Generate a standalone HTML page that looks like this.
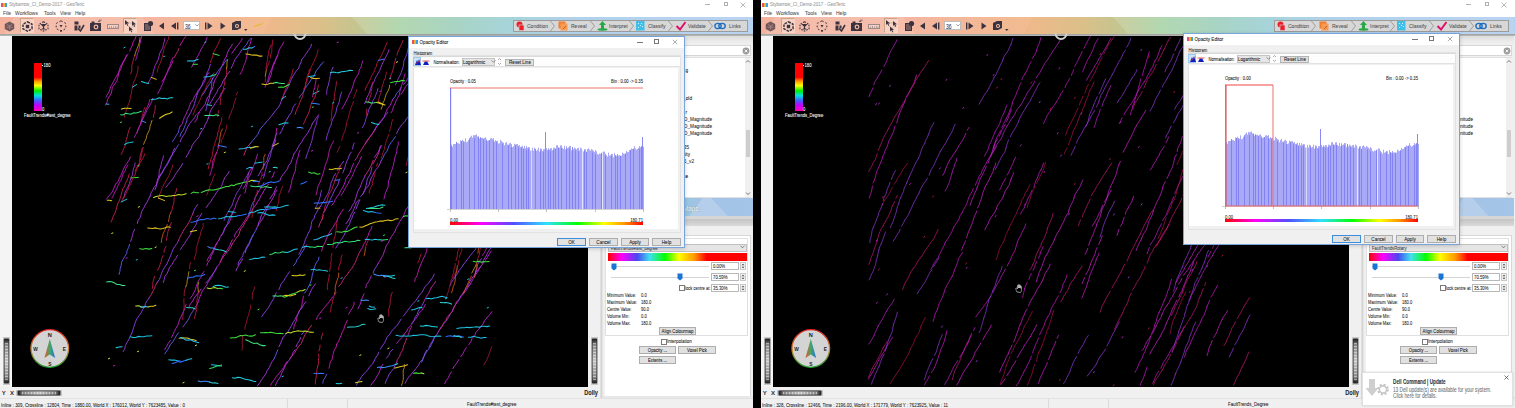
<!DOCTYPE html>
<html><head><meta charset="utf-8"><style>
html,body{margin:0;padding:0;}
body{width:1515px;height:408px;position:relative;overflow:hidden;background:#000;font-family:"Liberation Sans", sans-serif;}
.w{position:absolute;top:0;height:408px;overflow:hidden;background:#f0f0f0;}
.a{position:absolute;}
.t{position:absolute;white-space:nowrap;font-family:"Liberation Sans", sans-serif;-webkit-text-stroke:0.05px currentColor;}
svg{overflow:visible}
</style></head><body>
<div class="w" style="left:0;width:753px"><div class="a" style="left:0px;top:0px;width:753px;height:17px;background:#fff"></div><div class="a" style="left:1px;top:3px;width:2px;height:4px;background:#e8506a"></div><div class="a" style="left:3px;top:3px;width:2px;height:4px;background:#f0b030"></div><div class="a" style="left:5px;top:3px;width:2px;height:4px;background:#3aa0e0"></div><div class="t" style="left:9px;transform:scaleY(1.2);top:3.25px;font-size:4.5px;line-height:4.5px;color:#999999;">Stybarrow_CI_Demo-2017 - GeoTeric</div><div class="a" style="left:705px;top:4px;width:5px;height:0.8px;background:#b0b0b0"></div><div class="a" style="left:723.5px;top:2px;width:4px;height:4px;border:0.8px solid #b0b0b0;box-sizing:border-box"></div><svg class="a" style="left:740px;top:1.5px" width="6" height="6"><path d="M0.5 0.5L5.5 5.5M5.5 0.5L0.5 5.5" stroke="#a8a8a8" stroke-width="0.8"/></svg><div class="t" style="left:3px;transform:scaleY(1.1);top:11.10px;font-size:5px;line-height:5px;color:#4a4a4a;">File</div><div class="t" style="left:15px;transform:scaleY(1.1);top:11.10px;font-size:5px;line-height:5px;color:#4a4a4a;">Workflows</div><div class="t" style="left:44px;transform:scaleY(1.1);top:11.10px;font-size:5px;line-height:5px;color:#4a4a4a;">Tools</div><div class="t" style="left:60px;transform:scaleY(1.1);top:11.10px;font-size:5px;line-height:5px;color:#4a4a4a;">View</div><div class="t" style="left:75px;transform:scaleY(1.1);top:11.10px;font-size:5px;line-height:5px;color:#4a4a4a;">Help</div><svg class="a" style="left:0;top:17px" width="753" height="18"><defs><linearGradient id="tbg" gradientUnits="userSpaceOnUse" x1="0" y1="0" x2="753" y2="0"><stop offset="0" stop-color="#f3b29e"/><stop offset="0.2" stop-color="#f4b6a0"/><stop offset="0.355" stop-color="#f2bb90"/><stop offset="0.43" stop-color="#dcc48e"/><stop offset="0.47" stop-color="#c8c894"/><stop offset="0.53" stop-color="#aad4a8"/><stop offset="0.6" stop-color="#a0d0bc"/><stop offset="0.67" stop-color="#9cd0d4"/><stop offset="0.75" stop-color="#a8cce8"/><stop offset="1" stop-color="#b2d0f0"/></linearGradient></defs><rect width="753" height="18" fill="url(#tbg)"/><polygon points="14,0 142,0 155,18 4,18" fill="#fff" fill-opacity="0.13"/><polygon points="272,0 352,0 368,18 262,18" fill="#a06000" fill-opacity="0.03"/><polygon points="352,0 753,0 753,18 368,18" fill="#fff" fill-opacity="0.1"/></svg><div class="a" style="left:0px;top:34px;width:753px;height:2px;background:linear-gradient(#b8a8a0 0,#98a0a0 50%,#c8cccc 100%)"></div><div class="a" style="left:20px;top:18px;width:14px;height:15px;background:rgba(255,235,225,0.45);border:1px solid #c9a58a;border-right-color:#f7d8c8;border-bottom-color:#f7d8c8;box-sizing:border-box"></div><div class="a" style="left:123px;top:18px;width:14px;height:15px;background:rgba(255,235,225,0.45);border:1px solid #c9a58a;border-right-color:#f7d8c8;border-bottom-color:#f7d8c8;box-sizing:border-box"></div><svg class="a" style="left:3.5px;top:20.5px" width="11" height="11"><polygon points="5.5,0.5 10.2,3 10.2,8 5.5,10.5 0.8,8 0.8,3" fill="#3c3340" fill-opacity="0.72"/><path d="M3 3.5L5.5 5L8 3.5M5.5 5V8.5M2.5 6.5L5 6M8.5 6.5L6 6" stroke="#f0b0a0" stroke-width="0.6" fill="none" stroke-opacity="0.7"/></svg><svg class="a" style="left:21.5px;top:20.5px" width="11" height="11"><polygon points="5.5,0.8 10,3.2 10,7.8 5.5,10.2 1,7.8 1,3.2" fill="none" stroke="#3c3340" stroke-width="1.5" stroke-dasharray="2.6 1"/><rect x="3.8" y="3.8" width="3.4" height="3.4" fill="#3c3340"/></svg><svg class="a" style="left:38.2px;top:20.5px" width="11" height="11"><polygon points="5.5,0.8 10,3.2 10,7.8 5.5,10.2 1,7.8 1,3.2" fill="none" stroke="#3c3340" stroke-width="1.1" stroke-dasharray="1.6 1.2"/><path d="M3.5 3.5H7.5L5.5 5.5zM5.5 5.5V7.5M3.8 8H7.2" stroke="#3c3340" stroke-width="1.1" fill="#3c3340"/></svg><svg class="a" style="left:55px;top:20px" width="12" height="12"><polygon points="6,0.8 10.8,3.4 10.8,8.6 6,11.2 1.2,8.6 1.2,3.4" fill="none" stroke="#3c3340" stroke-width="1" stroke-dasharray="1.8 2"/><path d="M4.5 5L6 7.5L7.5 5z" fill="#3c3340"/><rect x="5" y="10" width="2" height="1.5" fill="#3c3340"/></svg><svg class="a" style="left:73px;top:20px" width="12" height="12"><path d="M1.5 1.5h4v3h-4zM1.5 5.5h3v5h-3zM5.5 5.5h2v3h-2z" fill="#3c3340"/><path d="M5 8.5L7.5 11L11 5" stroke="#3c3340" stroke-width="1.6" fill="none"/></svg><svg class="a" style="left:89px;top:19px" width="13" height="13"><rect x="1" y="4" width="11" height="8" fill="#3c3340"/><rect x="2.5" y="2.5" width="3" height="2" fill="#3c3340"/><circle cx="7" cy="8" r="2.4" fill="#f4b8a2"/><circle cx="7" cy="8" r="1.2" fill="#3c3340"/><path d="M9 3L11 0.5M10 3L12.5 1" stroke="#3c3340" stroke-width="0.7"/></svg><div class="a" style="left:107px;top:23.5px;width:12px;height:5px;border:1px solid #9a8a88;box-sizing:border-box;background:rgba(255,255,255,0.25)"></div><svg class="a" style="left:108px;top:24.5px" width="10" height="3"><path d="M1.5 3V1.5M3.5 3V1M5.5 3V1.5M7.5 3V1M9 3V1.5" stroke="#8a7a78" stroke-width="0.6"/></svg><svg class="a" style="left:124px;top:19px" width="13" height="14"><path d="M1 1L1 6L2.3 4.8L3.5 7L4.3 6.6L3.2 4.4L5 4.2z" fill="#3c3340"/><path d="M8 2L8 7L9.3 5.8L10.5 8L11.3 7.6L10.2 5.4L12 5.2z" fill="#3c3340"/><path d="M5 7.5L5 12.5L6.3 11.3L7.5 13.5L8.3 13.1L7.2 10.9L9 10.7z" fill="#3c3340"/><path d="M4 4H8M3 6L5.5 8.5M10 7L7 9" stroke="#7a6a6a" stroke-width="0.5" stroke-dasharray="1 0.8" fill="none"/></svg><svg class="a" style="left:142px;top:20px" width="12" height="12"><path d="M2 3h7v8h-7z" fill="#3c3340"/><path d="M3 5h5M3 7h5M3 9h5" stroke="#f4b8a2" stroke-width="0.6"/><circle cx="8.5" cy="3.5" r="2.6" fill="#3c3340"/></svg><svg class="a" style="left:158px;top:22px" width="8" height="8"><path d="M6 0.5V7.5L1 4z" fill="#3c3340"/></svg><svg class="a" style="left:170px;top:22px" width="10" height="8"><path d="M6 0.5V7.5L1 4z" fill="#3c3340"/><rect x="7" y="0.5" width="1.4" height="7" fill="#3c3340"/></svg><div class="a" style="left:183px;top:21px;width:17px;height:9px;background:#fff;border:1px solid #bdbdbd;box-sizing:border-box"></div><div class="t" style="left:185px;transform:scaleY(1.35);top:23.70px;font-size:5px;line-height:5px;color:#303060;">36</div><svg class="a" style="left:195px;top:24px" width="4" height="3"><path d="M0.3 0.3L2 2L3.7 0.3" stroke="#666" stroke-width="0.6" fill="none"/></svg><svg class="a" style="left:204px;top:22px" width="10" height="8"><rect x="1" y="0.5" width="1.4" height="7" fill="#3c3340"/><path d="M3.5 0.5V7.5L8.5 4z" fill="#3c3340"/></svg><svg class="a" style="left:219px;top:22px" width="8" height="8"><path d="M1.5 0.5V7.5L6.5 4z" fill="#3c3340"/></svg><svg class="a" style="left:231px;top:20px" width="11" height="11"><path d="M1 3L5 1H10V8L6 10H1z" fill="#3c3340"/><circle cx="6" cy="6" r="2" fill="#f4c0a0"/><circle cx="6" cy="6" r="1" fill="#3c3340"/></svg><svg class="a" style="left:244px;top:29px" width="4" height="3"><path d="M0 0H3.5L1.75 2z" fill="#3c3340"/></svg><div class="a" style="left:513px;top:20px;width:235px;height:12px;background:#d7d7d7;border:1px solid #9c9c9c;box-sizing:border-box"></div><svg class="a" style="left:550px;top:20px" width="6" height="12"><path d="M0 0.5L4.5 6L0 11.5" stroke="#8f8f8f" stroke-width="0.8" fill="none"/></svg><svg class="a" style="left:590px;top:20px" width="6" height="12"><path d="M0 0.5L4.5 6L0 11.5" stroke="#8f8f8f" stroke-width="0.8" fill="none"/></svg><svg class="a" style="left:629px;top:20px" width="6" height="12"><path d="M0 0.5L4.5 6L0 11.5" stroke="#8f8f8f" stroke-width="0.8" fill="none"/></svg><svg class="a" style="left:668px;top:20px" width="6" height="12"><path d="M0 0.5L4.5 6L0 11.5" stroke="#8f8f8f" stroke-width="0.8" fill="none"/></svg><svg class="a" style="left:708px;top:20px" width="6" height="12"><path d="M0 0.5L4.5 6L0 11.5" stroke="#8f8f8f" stroke-width="0.8" fill="none"/></svg><svg class="a" style="left:516px;top:21px" width="9" height="10"><circle cx="3.5" cy="3.5" r="3" fill="#e8202a"/><rect x="3" y="4" width="5" height="5.5" fill="#e8202a" stroke="#d7d7d7" stroke-width="0.6"/></svg><div class="t" style="left:527px;transform:scaleY(1.2);top:24.20px;font-size:5px;line-height:5px;color:#505050;">Condition</div><svg class="a" style="left:558px;top:21px" width="10" height="10"><rect x="0.5" y="0.5" width="7" height="7" fill="#f08030"/><rect x="2.5" y="2.5" width="7" height="7" fill="#f89a50"/><path d="M5 8L8 5" stroke="#c05010" stroke-width="0.8"/></svg><div class="t" style="left:571px;transform:scaleY(1.2);top:24.20px;font-size:5px;line-height:5px;color:#505050;">Reveal</div><svg class="a" style="left:597px;top:21px" width="11" height="10"><path d="M5.5 0L9 4H7V8H4V4H2z" fill="#28a848"/><ellipse cx="5.5" cy="8.5" rx="5" ry="1.2" fill="#28a848"/></svg><div class="t" style="left:609px;transform:scaleY(1.2);top:24.20px;font-size:5px;line-height:5px;color:#505050;">Interpret</div><svg class="a" style="left:636px;top:21px" width="9" height="10"><rect x="0" y="0" width="8.5" height="9.5" fill="#40c0e8"/><path d="M2 2h1v1h-1zM5 2h1v1h-1zM2 6h1v1h-1zM6 5h1v1h-1zM4 4h1v1h-1z" fill="#d0f0ff"/></svg><div class="t" style="left:648px;transform:scaleY(1.2);top:24.20px;font-size:5px;line-height:5px;color:#505050;">Classify</div><svg class="a" style="left:676px;top:21px" width="10" height="10"><path d="M0.5 5L4 8.5L9.5 1" stroke="#e0106a" stroke-width="2" fill="none"/></svg><div class="t" style="left:688px;transform:scaleY(1.2);top:24.20px;font-size:5px;line-height:5px;color:#505050;">Validate</div><svg class="a" style="left:714px;top:22px" width="12" height="8"><ellipse cx="4" cy="4" rx="3.2" ry="2.6" fill="none" stroke="#2070c0" stroke-width="1.4"/><ellipse cx="8" cy="4" rx="3.2" ry="2.6" fill="none" stroke="#2070c0" stroke-width="1.4"/></svg><div class="t" style="left:729px;transform:scaleY(1.2);top:24.20px;font-size:5px;line-height:5px;color:#505050;">Links</div><div class="a" style="left:0px;top:36px;width:753px;height:362px;background:#f0f0f0"></div><div class="a" style="left:0px;top:36px;width:12px;height:351px;background:#f4f4f4"></div><div class="a" style="left:12px;top:36px;width:576px;height:351px;background:#000"></div><svg class="a" style="left:0;top:0" width="600" height="390"><g fill="none" stroke-linecap="round"><path d="M163.4 282.4L164.2 279.4L164.9 276.4L167.2 273.4L168.4 270.4L169.5 267.4L172.1 264.4L173.6 261.4L175.9 258.4L177.5 255.4" stroke="#a838e0" stroke-width="0.9"/><path d="M180.5 249.4L182.4 246.4L184.7 243.4L186.4 240.4L188.5 237.4L190.5 234.4L191.5 231.4L193.6 228.4L195.5 225.4L196.8 222.4L197.7 219.4L200.1 216.4L201.8 213.4" stroke="#a838e0" stroke-width="0.9"/><path d="M206.3 207.4L208.4 204.4L210.9 201.4L212.5 198.4L214.8 195.4L216.5 192.4L219.0 189.4L221.5 186.4L222.5 183.4L223.6 180.4L224.9 177.4L227.5 174.4L229.2 171.4" stroke="#a838e0" stroke-width="0.9"/><path d="M356.6 385.1L357.8 382.1L360.2 379.1L361.9 376.1L364.6 373.1L367.5 370.1L369.5 367.1L372.4 364.1L374.1 361.1" stroke="#9040e8" stroke-width="0.9"/><path d="M374.1 361.1L375.4 358.1L377.6 355.1L378.8 352.1" stroke="#9040e8" stroke-width="0.9"/><path d="M380.3 349.1L382.2 346.1L384.4 343.1L385.9 340.1L387.1 337.1L389.9 334.1L391.6 331.1L394.5 328.1L397.3 325.1L399.2 322.1L401.2 319.1" stroke="#9040e8" stroke-width="0.9"/><path d="M403.3 316.1L405.7 313.1L407.9 310.1L410.2 307.1L412.5 304.1L415.4 301.1L417.5 298.1L419.5 295.1L422.1 292.1L423.7 289.1L425.5 286.1L428.5 283.1L430.7 280.1" stroke="#9040e0" stroke-width="0.9"/><path d="M430.7 280.1L432.9 277.1L434.2 274.1" stroke="#9040e8" stroke-width="0.9"/><path d="M450.3 185.8L451.9 182.8L453.3 179.8L454.9 176.8L456.9 173.8L458.4 170.8L459.9 167.8L462.2 164.8L463.2 161.8L465.1 158.8L467.3 155.8" stroke="#a838e0" stroke-width="0.9"/><path d="M469.9 149.8L472.2 146.8L473.5 143.8L474.7 140.8L476.3 137.8L478.4 134.8L479.4 131.8L480.8 128.8" stroke="#a838e0" stroke-width="0.9"/><path d="M484.5 122.8L486.1 119.8L488.4 116.8L489.5 113.8" stroke="#5a60f0" stroke-width="0.9"/><path d="M489.5 113.8L490.9 110.8" stroke="#a838e0" stroke-width="0.9"/><path d="M322.8 383.2L323.4 380.2L325.4 377.2L326.7 374.2" stroke="#7050e8" stroke-width="0.9"/><path d="M329.0 368.2L329.7 365.2L330.2 362.2L332.1 359.2L332.7 356.2L333.4 353.2L334.2 350.2L336.1 347.2L336.7 344.2" stroke="#c81cb8" stroke-width="0.9"/><path d="M336.7 344.2L338.7 341.2L339.8 338.2L341.2 335.2L342.2 332.2L343.9 329.2L344.6 326.2L346.0 323.2L347.3 320.2" stroke="#c81cb8" stroke-width="0.9"/><path d="M348.6 314.2L350.3 311.2L352.2 308.2L353.9 305.2L354.2 302.2" stroke="#c81cb8" stroke-width="0.9"/><path d="M155.0 189.7L156.2 186.7L157.0 183.7L158.0 180.7L159.3 177.7" stroke="#a838e0" stroke-width="0.9"/><path d="M159.3 177.7L161.0 174.7L163.1 171.7L164.5 168.7L166.6 165.7L168.4 162.7L169.9 159.7L171.3 156.7L173.0 153.7L175.0 150.7L176.5 147.7L178.6 144.7" stroke="#7050e8" stroke-width="0.9"/><path d="M180.2 141.7L181.4 138.7L183.2 135.7L185.3 132.7L186.3 129.7L187.9 126.7L189.6 123.7L192.0 120.7L194.6 117.7L196.2 114.7" stroke="#a838e0" stroke-width="0.9"/><path d="M258.1 175.8L260.0 172.8L261.3 169.8L263.5 166.8L264.8 163.8L267.1 160.8L267.8 157.8L268.7 154.8L270.3 151.8L272.3 148.8L273.5 145.8L274.8 142.8L275.7 139.8" stroke="#9040e8" stroke-width="0.9"/><path d="M279.9 133.8L281.6 130.8L282.8 127.8L284.5 124.8L285.4 121.8L287.2 118.8" stroke="#9040e8" stroke-width="0.9"/><path d="M287.2 118.8L288.9 115.8L291.2 112.8L292.3 109.8L293.2 106.8L295.7 103.8" stroke="#9040e8" stroke-width="0.9"/><path d="M299.2 97.8L301.2 94.8L303.7 91.8L304.9 88.8L306.8 85.8L309.2 82.8L311.0 79.8L313.5 76.8L315.0 73.8L316.2 70.8L318.6 67.8L320.9 64.8" stroke="#5a60f0" stroke-width="0.9"/><path d="M320.9 64.8L323.5 61.8" stroke="#5a60f0" stroke-width="0.9"/><path d="M444.7 383.7L446.1 380.7L448.4 377.7L449.6 374.7L451.5 371.7" stroke="#c020d0" stroke-width="0.9"/><path d="M452.8 368.7L454.6 365.7L457.0 362.7L458.7 359.7" stroke="#c020d0" stroke-width="0.9"/><path d="M460.8 356.7L463.0 353.7L464.3 350.7L466.3 347.7" stroke="#c020d0" stroke-width="0.9"/><path d="M468.8 344.7L470.9 341.7L471.9 338.7L474.7 335.7L475.7 332.7L478.4 329.7L480.8 326.7L483.3 323.7L484.4 320.7L487.0 317.7" stroke="#c020d0" stroke-width="0.9"/><path d="M487.0 317.7L489.6 314.7L491.8 311.7" stroke="#c020d0" stroke-width="0.9"/><path d="M238.1 264.9L238.7 261.9L240.7 258.9L242.8 255.9L243.4 252.9L245.5 249.9L246.6 246.9L248.5 243.9L250.3 240.9" stroke="#9040e0" stroke-width="0.9"/><path d="M250.3 240.9L251.4 237.9L253.1 234.9L254.8 231.9L256.7 228.9" stroke="#5a60f0" stroke-width="0.9"/><path d="M257.7 225.9L259.6 222.9L261.9 219.9L263.7 216.9L265.2 213.9L266.0 210.9L267.4 207.9L268.7 204.9L270.6 201.9L272.4 198.9L274.1 195.9L275.0 192.9L276.8 189.9" stroke="#b828c8" stroke-width="0.9"/><path d="M335.7 248.1L337.7 245.1L339.9 242.1L341.6 239.1L343.6 236.1L345.0 233.1" stroke="#9040e8" stroke-width="0.9"/><path d="M345.0 233.1L346.1 230.1L347.5 227.1L349.7 224.1L350.4 221.1L351.9 218.1L352.9 215.1L354.8 212.1" stroke="#9040e8" stroke-width="0.9"/><path d="M356.0 209.1L357.1 206.1L358.4 203.1L359.8 200.1" stroke="#9040e0" stroke-width="0.9"/><path d="M362.8 194.1L364.7 191.1L365.3 188.1L366.2 185.1L366.8 182.1L367.3 179.1L369.1 176.1L370.7 173.1L371.3 170.1L371.9 167.1" stroke="#9040e8" stroke-width="0.9"/><path d="M372.9 164.1L374.5 161.1L376.2 158.1L377.8 155.1L379.0 152.1L379.4 149.1L380.3 146.1" stroke="#d02a80" stroke-width="0.9"/><path d="M105.5 105.1L107.1 102.1L107.7 99.1L109.6 96.1L111.4 93.1L111.9 90.1L112.4 87.1L114.7 84.1L116.9 81.1L117.7 78.1L118.3 75.1" stroke="#c81cb8" stroke-width="0.9"/><path d="M118.3 75.1L119.1 72.1L120.8 69.1L121.7 66.1L122.8 63.1L124.7 60.1L125.9 57.1L128.0 54.1" stroke="#c81cb8" stroke-width="0.9"/><path d="M129.7 51.1L131.0 48.1L132.4 45.1L133.0 42.1L135.1 39.1L136.1 36.1" stroke="#c81cb8" stroke-width="0.9"/><path d="M161.9 81.6L164.0 78.6L165.5 75.6L167.1 72.6L168.6 69.6L170.4 66.6L171.9 63.6L173.0 60.6" stroke="#c81cb8" stroke-width="0.9"/><path d="M174.3 57.6L175.7 54.6L177.6 51.6L178.8 48.6" stroke="#d02a80" stroke-width="0.9"/><path d="M179.9 45.6L181.7 42.6L183.4 39.6L185.6 36.6" stroke="#c81cb8" stroke-width="0.9"/><path d="M475.3 273.5L476.3 270.5L477.0 267.5L477.6 264.5L479.3 261.5L481.5 258.5" stroke="#9040e0" stroke-width="0.9"/><path d="M482.3 255.5L484.5 252.5L485.8 249.5L487.6 246.5L489.6 243.5L491.6 240.5" stroke="#c81cb8" stroke-width="0.9"/><path d="M236.0 270.8L237.3 267.8L239.0 264.8L241.0 261.8L242.7 258.8" stroke="#a838e0" stroke-width="0.9"/><path d="M245.2 252.8L246.0 249.8L247.7 246.8L249.6 243.8L250.2 240.8L251.9 237.8L253.5 234.8" stroke="#7050e8" stroke-width="0.9"/><path d="M256.1 228.8L258.1 225.8L258.6 222.8L260.2 219.8L260.8 216.8L262.2 213.8L264.3 210.8L266.0 207.8L268.3 204.8" stroke="#a838e0" stroke-width="0.9"/><path d="M269.8 198.8L271.8 195.8L274.0 192.8L275.2 189.8L276.4 186.8" stroke="#a838e0" stroke-width="0.9"/><path d="M279.9 180.8L280.9 177.8L282.8 174.8L285.2 171.8L287.5 168.8L288.4 165.8L290.9 162.8L291.8 159.8L293.0 156.8L294.0 153.8" stroke="#a838e0" stroke-width="0.9"/><path d="M294.0 153.8L296.3 150.8L297.9 147.8L299.6 144.8L301.9 141.8L303.3 138.8L305.6 135.8L307.8 132.8L309.4 129.8L311.3 126.8L312.2 123.8" stroke="#a838e0" stroke-width="0.9"/><path d="M312.2 123.8L314.4 120.8L316.3 117.8L318.7 114.8" stroke="#a838e0" stroke-width="0.9"/><path d="M385.3 383.4L386.2 380.4L387.8 377.4L389.1 374.4L391.3 371.4L393.7 368.4L395.1 365.4L396.7 362.4" stroke="#9040e0" stroke-width="0.9"/><path d="M396.7 362.4L397.4 359.4L399.7 356.4L400.4 353.4L402.6 350.4L403.3 347.4L404.2 344.4L405.7 341.4L406.5 338.4" stroke="#d02a80" stroke-width="0.9"/><path d="M408.0 335.4L409.0 332.4L410.1 329.4L411.7 326.4" stroke="#c81cb8" stroke-width="0.9"/><path d="M412.4 323.4L414.0 320.4L415.0 317.4L417.2 314.4L418.2 311.4L419.7 308.4L422.1 305.4L423.6 302.4" stroke="#7050e8" stroke-width="0.9"/><path d="M423.6 302.4L424.8 299.4L426.4 296.4L428.6 293.4L429.9 290.4L431.4 287.4" stroke="#c81cb8" stroke-width="0.9"/><path d="M431.4 287.4L433.7 284.4L435.6 281.4" stroke="#c81cb8" stroke-width="0.9"/><path d="M298.8 254.3L300.5 251.3L301.8 248.3L303.5 245.3L304.6 242.3L305.4 239.3L307.0 236.3L308.2 233.3L309.9 230.3L310.9 227.3" stroke="#9040e8" stroke-width="0.9"/><path d="M310.9 227.3L311.3 224.3L311.8 221.3L314.1 218.3L314.8 215.3L316.7 212.3L318.2 209.3L320.4 206.3" stroke="#9040e8" stroke-width="0.9"/><path d="M320.4 206.3L322.3 203.3L324.4 200.3L325.7 197.3L327.7 194.3L328.9 191.3L329.8 188.3L330.5 185.3L331.2 182.3L332.8 179.3L333.6 176.3L335.8 173.3" stroke="#9040e8" stroke-width="0.9"/><path d="M337.4 170.3L339.1 167.3L341.3 164.3L343.7 161.3" stroke="#9040e8" stroke-width="0.9"/><path d="M275.5 385.6L276.6 382.6L278.4 379.6L280.6 376.6L281.4 373.6L283.1 370.6L284.4 367.6L285.9 364.6L288.1 361.6L290.3 358.6L292.1 355.6L293.0 352.6L295.2 349.6" stroke="#a838e0" stroke-width="0.9"/><path d="M296.1 346.6L297.4 343.6L299.5 340.6L300.6 337.6" stroke="#a838e0" stroke-width="0.9"/><path d="M301.7 334.6L304.0 331.6" stroke="#7050e8" stroke-width="0.9"/><path d="M172.4 141.6L174.5 138.6L176.2 135.6L178.3 132.6L178.9 129.6L180.0 126.6" stroke="#7050e8" stroke-width="0.9"/><path d="M180.0 126.6L182.4 123.6L183.2 120.6L184.3 117.6L185.9 114.6L187.1 111.6L188.8 108.6L189.6 105.6L190.8 102.6L193.3 99.6L194.3 96.6L196.7 93.6" stroke="#b828c8" stroke-width="0.9"/><path d="M196.7 93.6L197.9 90.6L200.5 87.6L202.5 84.6L204.6 81.6L205.7 78.6L206.7 75.6L209.0 72.6" stroke="#b828c8" stroke-width="0.9"/><path d="M194.8 122.1L197.0 119.1L197.6 116.1L198.5 113.1L200.7 110.1L202.9 107.1L205.2 104.1L206.1 101.1L207.2 98.1" stroke="#b828c8" stroke-width="0.9"/><path d="M207.2 98.1L209.3 95.1L210.6 92.1L212.3 89.1L213.3 86.1L213.8 83.1" stroke="#b828c8" stroke-width="0.9"/><path d="M213.8 83.1L214.8 80.1L216.6 77.1L218.4 74.1L219.8 71.1L221.0 68.1L222.3 65.1L223.5 62.1L224.8 59.1L226.6 56.1" stroke="#b828c8" stroke-width="0.9"/><path d="M226.6 56.1L227.3 53.1L228.7 50.1L230.7 47.1L232.5 44.1" stroke="#b828c8" stroke-width="0.9"/><path d="M405.1 383.3L406.6 380.3L408.5 377.3L411.1 374.3L413.7 371.3L416.1 368.3L418.5 365.3L419.9 362.3L422.5 359.3L423.8 356.3L424.9 353.3L426.7 350.3" stroke="#a838e0" stroke-width="0.9"/><path d="M428.9 347.3L430.4 344.3L432.4 341.3L433.8 338.3L436.4 335.3L438.1 332.3L439.8 329.3" stroke="#a838e0" stroke-width="0.9"/><path d="M439.8 329.3L441.6 326.3L444.1 323.3L446.7 320.3L448.6 317.3L450.2 314.3L452.2 311.3L453.2 308.3L454.9 305.3L457.3 302.3L459.5 299.3L460.5 296.3" stroke="#9040e0" stroke-width="0.9"/><path d="M460.5 296.3L462.9 293.3L464.5 290.3L467.2 287.3L468.7 284.3L470.0 281.3L471.8 278.3L474.3 275.3L476.0 272.3L478.4 269.3L480.6 266.3" stroke="#a838e0" stroke-width="0.9"/><path d="M482.1 263.3L483.5 260.3L485.3 257.3L486.9 254.3L488.5 251.3L490.6 248.3" stroke="#a838e0" stroke-width="0.9"/><path d="M414.8 281.5L415.2 278.5L417.2 275.5L417.9 272.5L418.8 269.5L419.9 266.5L421.2 263.5L422.4 260.5L423.9 257.5L425.4 254.5L426.5 251.5L427.0 248.5L429.1 245.5" stroke="#c81cb8" stroke-width="0.9"/><path d="M430.7 242.5L431.2 239.5L432.3 236.5L433.9 233.5L436.0 230.5L436.4 227.5L436.6 224.5" stroke="#c81cb8" stroke-width="0.9"/><path d="M436.6 224.5L437.7 221.5L438.7 218.5L440.6 215.5" stroke="#c81cb8" stroke-width="0.9"/><path d="M440.6 215.5L442.3 212.5" stroke="#c81cb8" stroke-width="0.9"/><path d="M438.8 228.7L439.5 225.7L440.9 222.7L441.9 219.7L443.3 216.7" stroke="#a838e0" stroke-width="0.9"/><path d="M444.8 213.7L445.9 210.7L447.3 207.7L448.3 204.7L450.3 201.7L451.9 198.7L453.7 195.7L455.2 192.7L456.6 189.7L458.5 186.7L460.6 183.7" stroke="#a838e0" stroke-width="0.9"/><path d="M460.6 183.7L462.4 180.7L463.9 177.7L466.1 174.7L467.1 171.7L468.0 168.7L469.6 165.7" stroke="#a838e0" stroke-width="0.9"/><path d="M469.6 165.7L472.0 162.7L473.7 159.7L475.9 156.7L477.3 153.7L479.5 150.7L480.9 147.7" stroke="#d02a80" stroke-width="0.9"/><path d="M480.9 147.7L482.2 144.7L484.7 141.7L486.8 138.7L489.0 135.7L490.4 132.7" stroke="#a838e0" stroke-width="0.9"/><path d="M318.8 227.0L319.6 224.0L321.2 221.0L322.7 218.0L323.3 215.0" stroke="#d02a80" stroke-width="0.9"/><path d="M324.3 212.0L325.8 209.0L327.2 206.0L328.7 203.0L330.0 200.0L331.5 197.0L332.9 194.0L334.2 191.0L335.9 188.0L337.8 185.0L338.6 182.0L339.9 179.0" stroke="#9040e8" stroke-width="0.9"/><path d="M342.8 173.0L343.9 170.0L345.0 167.0L345.8 164.0L346.9 161.0L348.5 158.0L349.3 155.0L351.4 152.0" stroke="#9040e0" stroke-width="0.9"/><path d="M352.6 149.0L353.1 146.0L354.2 143.0" stroke="#9040e8" stroke-width="0.9"/><path d="M164.7 349.5L166.6 346.5L168.1 343.5L170.3 340.5" stroke="#b828c8" stroke-width="0.9"/><path d="M171.5 337.5L173.0 334.5L174.3 331.5L175.8 328.5L177.7 325.5L178.7 322.5L179.6 319.5L181.3 316.5L182.4 313.5L184.1 310.5L185.1 307.5L186.0 304.5" stroke="#b828c8" stroke-width="0.9"/><path d="M190.1 298.5L192.4 295.5L194.0 292.5L195.4 289.5L196.2 286.5L197.3 283.5L198.5 280.5L200.8 277.5L201.7 274.5L204.0 271.5" stroke="#b828c8" stroke-width="0.9"/><path d="M206.8 265.5L207.8 262.5L210.1 259.5L210.9 256.5L212.5 253.5L213.9 250.5L214.8 247.5L215.7 244.5L217.9 241.5L219.8 238.5" stroke="#b828c8" stroke-width="0.9"/><path d="M221.5 235.5L223.6 232.5L224.2 229.5L225.9 226.5L227.6 223.5L228.4 220.5L229.6 217.5L231.7 214.5L232.6 211.5" stroke="#5a60f0" stroke-width="0.9"/><path d="M106.6 199.1L108.7 196.1L111.5 193.1L113.1 190.1L114.4 187.1L115.7 184.1" stroke="#c020d0" stroke-width="0.9"/><path d="M115.7 184.1L118.4 181.1L119.4 178.1L121.1 175.1L122.4 172.1L123.5 169.1L124.9 166.1L127.1 163.1L129.2 160.1L130.3 157.1" stroke="#c020d0" stroke-width="0.9"/><path d="M293.8 329.1L294.1 326.1L295.5 323.1L296.5 320.1L296.8 317.1L297.6 314.1L299.2 311.1L301.0 308.1L301.9 305.1L302.3 302.1L303.0 299.1L303.3 296.1" stroke="#c81cb8" stroke-width="0.9"/><path d="M304.6 293.1L306.7 290.1L308.3 287.1L309.8 284.1L311.0 281.1L311.8 278.1L312.2 275.1L313.1 272.1L313.8 269.1L314.9 266.1L316.1 263.1L318.3 260.1L319.0 257.1" stroke="#5a60f0" stroke-width="0.9"/><path d="M321.7 251.1L322.4 248.1L323.6 245.1L325.2 242.1L326.2 239.1L327.6 236.1L329.1 233.1L330.8 230.1L333.2 227.1L334.5 224.1L336.8 221.1L337.8 218.1" stroke="#c81cb8" stroke-width="0.9"/><path d="M337.8 218.1L339.5 215.1L341.3 212.1L343.4 209.1" stroke="#c81cb8" stroke-width="0.9"/><path d="M119.0 274.4L119.9 271.4L120.2 268.4L121.2 265.4L121.5 262.4L123.0 259.4L124.8 256.4L126.7 253.4L127.1 250.4L128.7 247.4L129.5 244.4" stroke="#5a60f0" stroke-width="0.9"/><path d="M130.7 241.4L131.6 238.4L132.5 235.4L133.2 232.4L134.7 229.4" stroke="#a838e0" stroke-width="0.9"/><path d="M137.4 223.4L138.0 220.4L140.2 217.4L141.0 214.4L141.6 211.4L143.5 208.4L145.0 205.4L146.9 202.4L148.3 199.4L150.0 196.4" stroke="#a838e0" stroke-width="0.9"/><path d="M150.0 196.4L150.8 193.4L152.6 190.4L154.1 187.4L156.5 184.4L157.1 181.4L157.9 178.4L159.8 175.4L162.2 172.4" stroke="#a838e0" stroke-width="0.9"/><path d="M162.2 172.4L163.6 169.4L165.6 166.4L167.4 163.4L168.8 160.4L170.4 157.4L172.3 154.4L173.2 151.4L174.5 148.4" stroke="#a838e0" stroke-width="0.9"/><path d="M180.0 136.4L180.9 133.4L183.0 130.4L184.4 127.4L185.5 124.4L186.7 121.4" stroke="#5a60f0" stroke-width="0.9"/><path d="M186.7 121.4L187.2 118.4L189.0 115.4L190.8 112.4L191.9 109.4L193.7 106.4" stroke="#9040e8" stroke-width="0.9"/><path d="M193.7 106.4L194.6 103.4L195.4 100.4L196.3 97.4L197.1 94.4" stroke="#9040e8" stroke-width="0.9"/><path d="M197.1 94.4L198.6 91.4L200.3 88.4L202.0 85.4L202.6 82.4L204.5 79.4L205.8 76.4L206.9 73.4" stroke="#9040e8" stroke-width="0.9"/><path d="M206.9 73.4L208.3 70.4L209.5 67.4L210.3 64.4" stroke="#9040e8" stroke-width="0.9"/><path d="M123.2 351.5L124.8 348.5L125.4 345.5L127.1 342.5L128.8 339.5L130.0 336.5L131.7 333.5" stroke="#9040e8" stroke-width="0.9"/><path d="M131.7 333.5L132.7 330.5L133.6 327.5L134.6 324.5L135.6 321.5L137.0 318.5L139.2 315.5L141.4 312.5L142.7 309.5L144.7 306.5L145.5 303.5L147.2 300.5L149.3 297.5" stroke="#9040e8" stroke-width="0.9"/><path d="M149.3 297.5L151.5 294.5L152.6 291.5L154.6 288.5L155.3 285.5L157.2 282.5" stroke="#d02a80" stroke-width="0.9"/><path d="M157.2 282.5L159.3 279.5L160.5 276.5L161.5 273.5L162.7 270.5L164.5 267.5L166.6 264.5" stroke="#9040e8" stroke-width="0.9"/><path d="M166.6 264.5L168.0 261.5L169.3 258.5L170.6 255.5L171.8 252.5L172.9 249.5L174.7 246.5L176.9 243.5L178.5 240.5" stroke="#9040e8" stroke-width="0.9"/><path d="M178.5 240.5L179.7 237.5L181.4 234.5L182.9 231.5L184.7 228.5L187.0 225.5L188.7 222.5L190.4 219.5L191.5 216.5L192.9 213.5" stroke="#d02a80" stroke-width="0.9"/><path d="M192.9 213.5L193.9 210.5L195.5 207.5L197.7 204.5" stroke="#9040e8" stroke-width="0.9"/><path d="M480.7 125.0L483.3 122.0L484.8 119.0L487.4 116.0L488.8 113.0" stroke="#a838e0" stroke-width="0.9"/><path d="M488.8 113.0L490.6 110.0" stroke="#7050e8" stroke-width="0.9"/><path d="M453.0 168.6L454.7 165.6L455.6 162.6L457.2 159.6L458.8 156.6L460.8 153.6L463.0 150.6L464.0 147.6" stroke="#b828c8" stroke-width="0.9"/><path d="M464.0 147.6L466.1 144.6L468.1 141.6L469.3 138.6L470.3 135.6L471.2 132.6L472.6 129.6L474.8 126.6L475.7 123.6L477.2 120.6" stroke="#9040e0" stroke-width="0.9"/><path d="M480.6 114.6L482.6 111.6L483.9 108.6L485.5 105.6L488.0 102.6L489.3 99.6L490.6 96.6" stroke="#b828c8" stroke-width="0.9"/><path d="M450.1 285.6L451.1 282.6L453.3 279.6L455.2 276.6L457.6 273.6L459.0 270.6L461.5 267.6L463.4 264.6" stroke="#9040e8" stroke-width="0.9"/><path d="M463.4 264.6L465.7 261.6L468.0 258.6L470.3 255.6L472.7 252.6L475.4 249.6L476.5 246.6" stroke="#9040e8" stroke-width="0.9"/><path d="M476.5 246.6L478.6 243.6L481.0 240.6L483.3 237.6L484.9 234.6L486.1 231.6L488.5 228.6L490.7 225.6" stroke="#9040e8" stroke-width="0.9"/><path d="M164.8 353.8L166.8 350.8L168.9 347.8L170.2 344.8L172.8 341.8L174.6 338.8L176.3 335.8L178.5 332.8" stroke="#5a60f0" stroke-width="0.9"/><path d="M182.8 326.8L185.4 323.8L187.5 320.8L189.2 317.8L190.4 314.8L192.5 311.8L194.2 308.8L196.2 305.8L197.8 302.8" stroke="#7050e8" stroke-width="0.9"/><path d="M197.8 302.8L198.8 299.8L199.9 296.8L201.2 293.8L202.3 290.8L204.8 287.8L206.8 284.8L208.2 281.8L210.4 278.8L212.4 275.8L213.4 272.8L215.7 269.8L217.0 266.8" stroke="#c020d0" stroke-width="0.9"/><path d="M217.0 266.8L219.6 263.8L220.7 260.8L222.1 257.8L223.3 254.8L225.7 251.8L228.0 248.8L229.8 245.8L230.8 242.8L232.3 239.8" stroke="#c020d0" stroke-width="0.9"/><path d="M234.3 236.8L235.2 233.8L237.5 230.8L239.8 227.8L242.1 224.8L244.0 221.8L245.8 218.8L248.2 215.8" stroke="#c020d0" stroke-width="0.9"/><path d="M248.2 215.8L249.3 212.8L250.5 209.8L251.3 206.8L252.3 203.8L254.3 200.8L255.0 197.8L256.9 194.8L258.2 191.8" stroke="#7050e8" stroke-width="0.9"/><path d="M258.2 191.8L260.3 188.8L262.2 185.8L263.9 182.8" stroke="#c020d0" stroke-width="0.9"/><path d="M357.8 308.8L359.5 305.8L360.7 302.8L361.5 299.8L362.6 296.8L364.1 293.8" stroke="#b828c8" stroke-width="0.9"/><path d="M365.8 287.8L366.4 284.8L368.5 281.8L370.1 278.8L371.3 275.8" stroke="#b828c8" stroke-width="0.9"/><path d="M373.2 272.8L374.2 269.8L376.2 266.8L378.0 263.8" stroke="#9040e0" stroke-width="0.9"/><path d="M378.0 263.8L379.7 260.8L381.4 257.8L383.3 254.8L384.1 251.8L385.3 248.8L386.1 245.8L388.4 242.8L389.6 239.8L391.3 236.8L393.4 233.8L395.3 230.8" stroke="#b828c8" stroke-width="0.9"/><path d="M395.3 230.8L396.3 227.8L398.2 224.8L399.6 221.8L401.7 218.8L403.6 215.8L404.6 212.8L405.8 209.8L408.0 206.8L409.2 203.8L410.4 200.8L412.8 197.8L413.7 194.8" stroke="#b828c8" stroke-width="0.9"/><path d="M417.5 188.8L420.1 185.8L420.9 182.8L423.3 179.8L424.8 176.8L427.2 173.8L429.7 170.8L432.0 167.8" stroke="#b828c8" stroke-width="0.9"/><path d="M436.4 161.8L437.9 158.8L439.4 155.8L441.6 152.8L442.8 149.8" stroke="#b828c8" stroke-width="0.9"/><path d="M442.8 149.8L445.3 146.8L446.5 143.8L449.3 140.8L451.6 137.8" stroke="#b828c8" stroke-width="0.9"/><path d="M364.8 144.4L366.4 141.4L368.7 138.4L371.2 135.4L373.2 132.4L375.3 129.4" stroke="#c020d0" stroke-width="0.9"/><path d="M375.3 129.4L376.8 126.4L378.5 123.4L381.3 120.4L384.0 117.4L385.0 114.4L386.3 111.4L387.7 108.4L390.1 105.4L391.5 102.4L392.8 99.4" stroke="#c020d0" stroke-width="0.9"/><path d="M392.8 99.4L395.2 96.4L396.5 93.4L399.2 90.4L401.1 87.4" stroke="#5a60f0" stroke-width="0.9"/><path d="M403.7 84.4L406.2 81.4L407.6 78.4L410.0 75.4L411.8 72.4L413.2 69.4L414.3 66.4" stroke="#c020d0" stroke-width="0.9"/><path d="M418.7 60.4L420.2 57.4L422.8 54.4L424.2 51.4" stroke="#c020d0" stroke-width="0.9"/><path d="M427.2 45.4L428.9 42.4L431.6 39.4L433.5 36.4" stroke="#c020d0" stroke-width="0.9"/><path d="M370.8 385.3L373.1 382.3L375.4 379.3L376.9 376.3L378.8 373.3L379.9 370.3L381.2 367.3L382.9 364.3" stroke="#c020d0" stroke-width="0.9"/><path d="M386.3 358.3L388.9 355.3L390.0 352.3L392.7 349.3" stroke="#9040e0" stroke-width="0.9"/><path d="M396.7 343.3L399.3 340.3L402.1 337.3L404.1 334.3" stroke="#c020d0" stroke-width="0.9"/><path d="M404.1 334.3L406.5 331.3L408.2 328.3L410.9 325.3L412.4 322.3L415.2 319.3L417.5 316.3L419.0 313.3L422.0 310.3L423.9 307.3L425.4 304.3" stroke="#c020d0" stroke-width="0.9"/><path d="M188.9 307.0L190.4 304.0L192.8 301.0L194.2 298.0L196.5 295.0L199.2 292.0L201.0 289.0" stroke="#c020d0" stroke-width="0.9"/><path d="M205.8 283.0L208.5 280.0L210.5 277.0L212.8 274.0L215.0 271.0L216.3 268.0" stroke="#9040e0" stroke-width="0.9"/><path d="M220.1 262.0L221.9 259.0L223.9 256.0L226.5 253.0L228.8 250.0L231.1 247.0L232.2 244.0" stroke="#d02a80" stroke-width="0.9"/><path d="M232.2 244.0L234.3 241.0L236.3 238.0L238.8 235.0L239.6 232.0L240.7 229.0L243.3 226.0L244.7 223.0L246.8 220.0L248.6 217.0L250.0 214.0L251.6 211.0L253.3 208.0" stroke="#d02a80" stroke-width="0.9"/><path d="M253.3 208.0L255.8 205.0L257.4 202.0L259.5 199.0L260.7 196.0L262.7 193.0" stroke="#c020d0" stroke-width="0.9"/><path d="M262.7 193.0L264.4 190.0L266.4 187.0L268.6 184.0" stroke="#c020d0" stroke-width="0.9"/><path d="M271.7 178.0L273.4 175.0L274.4 172.0" stroke="#c020d0" stroke-width="0.9"/><path d="M425.7 217.6L428.2 214.6L430.1 211.6L431.5 208.6L434.0 205.6L436.2 202.6L438.4 199.6L439.6 196.6" stroke="#7050e8" stroke-width="0.9"/><path d="M439.6 196.6L441.5 193.6L444.1 190.6L446.7 187.6L449.3 184.6L451.6 181.6L453.1 178.6" stroke="#9040e0" stroke-width="0.9"/><path d="M453.1 178.6L454.0 175.6L455.6 172.6L456.6 169.6L459.0 166.6L460.3 163.6L461.8 160.6L462.6 157.6" stroke="#c020d0" stroke-width="0.9"/><path d="M209.3 104.3L211.5 101.3L213.1 98.3L214.9 95.3L216.9 92.3L218.1 89.3L220.7 86.3" stroke="#a838e0" stroke-width="0.9"/><path d="M220.7 86.3L222.3 83.3L223.4 80.3L225.7 77.3L227.4 74.3L229.9 71.3" stroke="#a838e0" stroke-width="0.9"/><path d="M231.1 68.3L232.6 65.3L233.8 62.3L235.1 59.3L237.4 56.3L239.7 53.3L241.5 50.3" stroke="#a838e0" stroke-width="0.9"/><path d="M241.5 50.3L244.1 47.3L246.7 44.3L248.2 41.3L251.0 38.3" stroke="#5a60f0" stroke-width="0.9"/><path d="M431.8 114.4L433.5 111.4L436.1 108.4L438.1 105.4L441.0 102.4" stroke="#9040e8" stroke-width="0.9"/><path d="M441.0 102.4L443.7 99.4L446.4 96.4L448.9 93.4L450.3 90.4L452.7 87.4" stroke="#9040e8" stroke-width="0.9"/><path d="M456.9 81.4L459.0 78.4L460.7 75.4L462.1 72.4L464.9 69.4L466.6 66.4L467.9 63.4L470.7 60.4L472.7 57.4L475.0 54.4L476.7 51.4" stroke="#9040e8" stroke-width="0.9"/><path d="M478.0 48.4L479.6 45.4L482.2 42.4L483.7 39.4L486.4 36.4" stroke="#9040e8" stroke-width="0.9"/><path d="M401.0 94.4L403.1 91.4L404.5 88.4L406.7 85.4L409.3 82.4L411.1 79.4L412.6 76.4L414.7 73.4L416.9 70.4L418.0 67.4" stroke="#c020d0" stroke-width="0.9"/><path d="M420.8 61.4L422.6 58.4L423.9 55.4L425.8 52.4L427.0 49.4L429.3 46.4L430.6 43.4L431.7 40.4L432.4 37.4" stroke="#5a60f0" stroke-width="0.9"/><path d="M207.0 260.9L208.3 257.9L210.4 254.9L212.3 251.9L213.9 248.9L215.5 245.9L217.3 242.9" stroke="#b828c8" stroke-width="0.9"/><path d="M219.3 239.9L220.0 236.9L222.2 233.9L223.8 230.9L225.0 227.9" stroke="#b828c8" stroke-width="0.9"/><path d="M225.0 227.9L227.4 224.9L229.4 221.9L230.7 218.9L231.4 215.9L232.8 212.9L234.1 209.9L235.4 206.9L236.1 203.9L237.7 200.9L238.7 197.9L240.6 194.9" stroke="#b828c8" stroke-width="0.9"/><path d="M243.1 188.9L245.1 185.9L246.3 182.9L247.0 179.9L247.9 176.9L248.4 173.9L249.6 170.9L251.7 167.9" stroke="#b828c8" stroke-width="0.9"/><path d="M346.0 223.6L348.3 220.6L349.9 217.6L351.0 214.6L352.8 211.6L354.0 208.6L355.4 205.6L356.3 202.6L359.0 199.6" stroke="#a838e0" stroke-width="0.9"/><path d="M360.8 196.6L363.0 193.6L364.3 190.6L366.9 187.6L369.1 184.6L369.9 181.6L370.9 178.6L372.6 175.6L374.0 172.6L376.1 169.6L378.5 166.6L380.1 163.6L381.2 160.6" stroke="#a838e0" stroke-width="0.9"/><path d="M381.2 160.6L383.2 157.6L384.3 154.6L386.7 151.6L388.0 148.6L389.1 145.6L391.1 142.6L393.4 139.6L395.4 136.6" stroke="#5a60f0" stroke-width="0.9"/><path d="M396.6 133.6L397.9 130.6L399.7 127.6L402.1 124.6L404.8 121.6L406.6 118.6L409.2 115.6L411.4 112.6" stroke="#9040e0" stroke-width="0.9"/><path d="M261.8 316.7L263.7 313.7L266.1 310.7L268.3 307.7L270.1 304.7L271.7 301.7L273.6 298.7L274.8 295.7L276.3 292.7" stroke="#9040e8" stroke-width="0.9"/><path d="M278.8 289.7L280.1 286.7L281.3 283.7L283.8 280.7L285.5 277.7L287.5 274.7L289.6 271.7" stroke="#9040e8" stroke-width="0.9"/><path d="M293.5 265.7L295.9 262.7L296.9 259.7L299.5 256.7L301.0 253.7L303.1 250.7L304.7 247.7" stroke="#5a60f0" stroke-width="0.9"/><path d="M304.7 247.7L307.0 244.7" stroke="#d02a80" stroke-width="0.9"/><path d="M243.9 155.3L245.0 152.3L246.2 149.3L247.7 146.3L250.5 143.3" stroke="#d02a80" stroke-width="0.9"/><path d="M250.5 143.3L252.9 140.3L255.5 137.3L257.9 134.3L259.1 131.3L260.8 128.3L263.5 125.3L266.0 122.3" stroke="#5a60f0" stroke-width="0.9"/><path d="M266.0 122.3L268.8 119.3L271.2 116.3L273.5 113.3" stroke="#9040e0" stroke-width="0.9"/><path d="M273.5 113.3L275.8 110.3L278.4 107.3L280.1 104.3L281.1 101.3L282.6 98.3L283.5 95.3L285.0 92.3L286.9 89.3L288.3 86.3L289.7 83.3L290.8 80.3L292.3 77.3" stroke="#9040e8" stroke-width="0.9"/><path d="M292.3 77.3L294.1 74.3L296.0 71.3L298.6 68.3L299.6 65.3L300.9 62.3L301.9 59.3L304.4 56.3L306.4 53.3L308.4 50.3L310.7 47.3L311.5 44.3" stroke="#9040e8" stroke-width="0.9"/><path d="M331.8 205.4L334.0 202.4L335.3 199.4L337.3 196.4L339.4 193.4L340.8 190.4L342.8 187.4L344.2 184.4L345.3 181.4L346.1 178.4L348.2 175.4" stroke="#c020d0" stroke-width="0.9"/><path d="M348.2 175.4L350.3 172.4L351.2 169.4L352.2 166.4L353.6 163.4" stroke="#c020d0" stroke-width="0.9"/><path d="M354.9 160.4L357.1 157.4L358.4 154.4L360.4 151.4L362.3 148.4L364.0 145.4L366.5 142.4L368.3 139.4L370.3 136.4L372.6 133.4L374.4 130.4" stroke="#d02a80" stroke-width="0.9"/><path d="M374.4 130.4L375.8 127.4L378.7 124.4L381.2 121.4L383.3 118.4L385.4 115.4L387.8 112.4" stroke="#9040e0" stroke-width="0.9"/><path d="M270.7 385.4L272.2 382.4L274.5 379.4L276.4 376.4L279.1 373.4L281.4 370.4L283.8 367.4L285.2 364.4L287.2 361.4" stroke="#c81cb8" stroke-width="0.9"/><path d="M289.6 358.4L292.3 355.4L295.0 352.4L296.6 349.4L298.6 346.4L301.4 343.4L302.6 340.4L303.8 337.4L305.2 334.4L307.5 331.4L309.2 328.4L311.5 325.4" stroke="#d02a80" stroke-width="0.9"/><path d="M316.5 319.4L317.5 316.4L319.8 313.4L322.2 310.4L324.5 307.4L327.1 304.4L329.5 301.4L331.6 298.4L334.1 295.4L336.1 292.4" stroke="#c81cb8" stroke-width="0.9"/><path d="M338.7 286.4L341.4 283.4L342.9 280.4L344.7 277.4L347.2 274.4L349.4 271.4L351.8 268.4L353.5 265.4L355.4 262.4L356.4 259.4L357.7 256.4L358.9 253.4L360.7 250.4" stroke="#d02a80" stroke-width="0.9"/><path d="M360.7 250.4L362.6 247.4L363.6 244.4L365.6 241.4" stroke="#c81cb8" stroke-width="0.9"/><path d="M365.6 241.4L366.7 238.4L368.2 235.4L369.1 232.4L370.9 229.4L372.0 226.4" stroke="#c81cb8" stroke-width="0.9"/><path d="M442.3 148.7L444.5 145.7L445.7 142.7L448.0 139.7L449.4 136.7L451.9 133.7L454.1 130.7L456.7 127.7L457.8 124.7" stroke="#9040e8" stroke-width="0.9"/><path d="M459.4 121.7L462.1 118.7L464.1 115.7L465.9 112.7L467.1 109.7L469.5 106.7L471.1 103.7L472.3 100.7L475.2 97.7L476.9 94.7L478.6 91.7L480.6 88.7" stroke="#d02a80" stroke-width="0.9"/><path d="M485.1 82.7L486.5 79.7L488.0 76.7L490.5 73.7" stroke="#9040e8" stroke-width="0.9"/><path d="M202.0 95.4L204.4 92.4L205.9 89.4L207.7 86.4L210.0 83.4L211.5 80.4L213.5 77.4L215.8 74.4L217.7 71.4L220.2 68.4L222.9 65.4L224.6 62.4L227.1 59.4" stroke="#5a60f0" stroke-width="0.9"/><path d="M231.8 53.4L233.9 50.4L236.1 47.4L238.5 44.4L240.8 41.4L242.3 38.4" stroke="#c020d0" stroke-width="0.9"/><path d="M166.0 187.3L168.3 184.3L170.8 181.3L173.3 178.3L174.8 175.3L176.9 172.3L179.0 169.3L181.1 166.3L182.7 163.3" stroke="#a838e0" stroke-width="0.9"/><path d="M186.0 157.3L187.9 154.3L189.3 151.3L191.3 148.3L192.2 145.3L194.4 142.3L196.8 139.3L199.3 136.3L200.2 133.3" stroke="#a838e0" stroke-width="0.9"/><path d="M200.2 133.3L202.2 130.3L204.3 127.3L205.3 124.3L207.1 121.3L208.2 118.3" stroke="#a838e0" stroke-width="0.9"/><path d="M208.2 118.3L209.3 115.3L210.0 112.3L211.2 109.3L213.4 106.3L215.2 103.3L217.3 100.3L219.7 97.3L220.6 94.3L222.8 91.3L225.1 88.3" stroke="#a838e0" stroke-width="0.9"/><path d="M421.7 362.2L423.1 359.2L424.2 356.2L425.7 353.2L427.8 350.2L430.0 347.2L431.4 344.2L433.2 341.2L434.2 338.2L436.1 335.2" stroke="#5a60f0" stroke-width="0.9"/><path d="M440.0 329.2L442.4 326.2L443.4 323.2L446.0 320.2L447.2 317.2L449.8 314.2L452.5 311.2L453.8 308.2L455.3 305.2L456.4 302.2" stroke="#d02a80" stroke-width="0.9"/><path d="M456.4 302.2L459.0 299.2L461.3 296.2L464.0 293.2L466.4 290.2L468.0 287.2L470.3 284.2" stroke="#c020d0" stroke-width="0.9"/><path d="M470.3 284.2L471.9 281.2L473.5 278.2L475.2 275.2L477.5 272.2L479.0 269.2L481.0 266.2L483.1 263.2L485.5 260.2L487.4 257.2L489.1 254.2L491.2 251.2" stroke="#c020d0" stroke-width="0.9"/><path d="M257.5 385.8L259.7 382.8L261.5 379.8L263.7 376.8L265.9 373.8L267.0 370.8L269.1 367.8L270.5 364.8L272.0 361.8L274.1 358.8" stroke="#a838e0" stroke-width="0.9"/><path d="M274.1 358.8L275.5 355.8L276.6 352.8L277.8 349.8" stroke="#5a60f0" stroke-width="0.9"/><path d="M278.9 346.8L280.4 343.8L281.6 340.8L282.8 337.8" stroke="#a838e0" stroke-width="0.9"/><path d="M282.8 337.8L285.4 334.8L287.9 331.8L289.6 328.8L291.5 325.8L292.8 322.8L294.8 319.8L296.2 316.8L298.4 313.8L299.4 310.8L301.9 307.8L303.6 304.8L305.8 301.8" stroke="#9040e0" stroke-width="0.9"/><path d="M308.8 295.8L310.1 292.8L311.4 289.8L313.2 286.8L315.5 283.8" stroke="#a838e0" stroke-width="0.9"/><path d="M348.9 211.3L351.1 208.3L352.4 205.3L354.5 202.3L355.4 199.3L356.3 196.3L357.2 193.3L358.2 190.3L360.1 187.3L361.3 184.3L362.3 181.3L364.0 178.3L365.2 175.3" stroke="#a838e0" stroke-width="0.9"/><path d="M365.2 175.3L367.3 172.3L369.0 169.3L370.9 166.3L372.1 163.3L373.2 160.3" stroke="#d02a80" stroke-width="0.9"/><path d="M374.4 157.3L376.6 154.3L378.7 151.3L380.1 148.3L381.4 145.3" stroke="#a838e0" stroke-width="0.9"/><path d="M265.8 68.7L266.6 65.7L266.8 62.7L267.6 59.7L267.7 56.7L268.7 53.7L268.8 50.7L270.0 47.7L271.2 44.7" stroke="#c01840" stroke-width="0.8"/><path d="M364.2 255.5L364.8 252.5L365.3 249.5" stroke="#e06020" stroke-width="0.8"/><path d="M365.3 249.5L365.8 246.5L366.9 243.5L368.2 240.5" stroke="#d02050" stroke-width="0.8"/><path d="M381.1 109.2L382.3 106.2L382.9 103.2L384.4 100.2L385.2 97.2L386.2 94.2L387.9 91.2L389.2 88.2L389.6 85.2" stroke="#d0a020" stroke-width="0.8"/><path d="M390.2 79.2L390.4 76.2L391.9 73.2L392.8 70.2L393.6 67.2L394.2 64.2L395.0 61.2L395.8 58.2" stroke="#d02050" stroke-width="0.8"/><path d="M397.0 55.2L397.7 52.2L399.1 49.2L400.5 46.2L401.9 43.2L403.1 40.2" stroke="#d02050" stroke-width="0.8"/><path d="M425.1 92.1L425.6 89.1L425.6 86.1L426.1 83.1L427.1 80.1L428.4 77.1" stroke="#c01840" stroke-width="0.8"/><path d="M212.0 168.0L213.3 165.0L213.9 162.0L214.8 159.0L215.1 156.0L216.8 153.0" stroke="#c01840" stroke-width="0.8"/><path d="M218.0 147.0L218.7 144.0L219.7 141.0L219.8 138.0L220.4 135.0L220.9 132.0L222.5 129.0" stroke="#e06020" stroke-width="0.8"/><path d="M369.2 193.1L369.5 190.1L371.1 187.1L372.7 184.1L372.7 181.1L373.7 178.1L374.8 175.1L374.9 172.1" stroke="#c01840" stroke-width="0.8"/><path d="M376.5 166.1L377.6 163.1" stroke="#c01840" stroke-width="0.8"/><path d="M381.3 158.3L382.2 155.3L383.1 152.3L384.4 149.3L384.8 146.3L385.7 143.3L386.6 140.3L387.7 137.3L388.9 134.3" stroke="#a81838" stroke-width="0.8"/><path d="M389.5 131.3L390.4 128.3L391.3 125.3L391.6 122.3L392.9 119.3" stroke="#a81838" stroke-width="0.8"/><path d="M478.9 191.9L478.9 188.9L479.4 185.9L480.3 182.9L481.6 179.9L482.1 176.9L482.2 173.9L483.7 170.9" stroke="#a81838" stroke-width="0.8"/><path d="M206.9 195.1L207.9 192.1L209.2 189.1L209.8 186.1L211.1 183.1L212.7 180.1L213.2 177.1L215.0 174.1" stroke="#a81838" stroke-width="0.8"/><path d="M252.1 217.3L252.2 214.3L252.4 211.3L253.2 208.3L253.7 205.3" stroke="#c01840" stroke-width="0.8"/><path d="M253.7 205.3L253.7 202.3L255.0 199.3L255.5 196.3L256.8 193.3L257.4 190.3" stroke="#c01840" stroke-width="0.8"/><path d="M258.3 184.3L259.5 181.3L260.9 178.3L261.8 175.3L262.1 172.3" stroke="#c01840" stroke-width="0.8"/><path d="M262.9 169.3L263.3 166.3L263.8 163.3L263.8 160.3L263.8 157.3L265.2 154.3" stroke="#e06020" stroke-width="0.8"/><path d="M182.8 319.7L182.7 316.7L183.4 313.7L183.6 310.7L184.1 307.7L184.1 304.7L183.9 301.7L183.9 298.7" stroke="#c01840" stroke-width="0.8"/><path d="M184.2 295.7L184.2 292.7L184.8 289.7L185.8 286.7" stroke="#c01840" stroke-width="0.8"/><path d="M185.8 286.7L186.9 283.7L187.2 280.7L187.8 277.7L188.4 274.7L188.9 271.7" stroke="#d0a020" stroke-width="0.8"/><path d="M189.7 268.7L189.7 265.7L190.4 262.7" stroke="#c01840" stroke-width="0.8"/><path d="M410.6 176.2L410.9 173.2L411.1 170.2L411.7 167.2" stroke="#a81838" stroke-width="0.8"/><path d="M413.8 161.2L414.1 158.2L415.1 155.2L416.4 152.2L417.5 149.2" stroke="#a81838" stroke-width="0.8"/><path d="M417.8 143.2L419.3 140.2L420.4 137.2" stroke="#a81838" stroke-width="0.8"/><path d="M462.9 294.0L464.7 291.0L465.6 288.0L467.3 285.0L468.5 282.0L470.0 279.0L471.4 276.0" stroke="#e06020" stroke-width="0.8"/><path d="M471.9 273.0L473.3 270.0L475.1 267.0L476.3 264.0" stroke="#d0a020" stroke-width="0.8"/><path d="M477.9 258.0L479.2 255.0L479.6 252.0L480.2 249.0L480.9 246.0L482.5 243.0L484.3 240.0L485.9 237.0L487.5 234.0" stroke="#c01840" stroke-width="0.8"/><path d="M489.0 231.0L489.3 228.0" stroke="#c01840" stroke-width="0.8"/><path d="M330.8 120.3L331.7 117.3L331.6 114.3L331.8 111.3L332.3 108.3L332.4 105.3L333.4 102.3L334.2 99.3" stroke="#c01840" stroke-width="0.8"/><path d="M334.2 99.3L334.3 96.3L334.6 93.3L335.3 90.3L335.7 87.3L336.3 84.3L336.4 81.3" stroke="#c01840" stroke-width="0.8"/><path d="M470.8 94.3L471.8 91.3L472.7 88.3L472.8 85.3L473.2 82.3L474.2 79.3L474.3 76.3L474.4 73.3" stroke="#d02050" stroke-width="0.8"/><path d="M475.5 70.3L475.4 67.3L475.4 64.3" stroke="#e06020" stroke-width="0.8"/><path d="M140.0 160.1L141.2 157.1L141.6 154.1L142.2 151.1L142.1 148.1" stroke="#c01840" stroke-width="0.8"/><path d="M406.1 165.7L406.8 162.7L407.4 159.7L408.4 156.7L408.5 153.7L409.0 150.7L410.7 147.7" stroke="#c01840" stroke-width="0.8"/><path d="M412.5 141.7L412.6 138.7L413.1 135.7L414.0 132.7L414.6 129.7" stroke="#c01840" stroke-width="0.8"/><path d="M337.1 152.3L338.6 149.3L339.9 146.3" stroke="#a81838" stroke-width="0.8"/><path d="M341.7 140.3L342.4 137.3L343.4 134.3L344.8 131.3L345.6 128.3L346.3 125.3" stroke="#a81838" stroke-width="0.8"/><path d="M346.3 125.3L346.5 122.3L347.9 119.3L348.6 116.3L349.5 113.3L350.2 110.3L351.1 107.3L352.5 104.3L353.4 101.3" stroke="#a81838" stroke-width="0.8"/><path d="M353.7 98.3L354.6 95.3L356.0 92.3L356.8 89.3" stroke="#a81838" stroke-width="0.8"/><path d="M401.5 385.4L402.5 382.4L403.3 379.4L403.3 376.4L403.2 373.4L403.2 370.4L404.4 367.4L404.2 364.4" stroke="#d0a020" stroke-width="0.8"/><path d="M451.5 292.9L452.5 289.9L453.1 286.9L454.5 283.9L455.1 280.9L455.4 277.9L455.5 274.9L456.5 271.9" stroke="#e06020" stroke-width="0.8"/><path d="M456.5 271.9L457.0 268.9L457.4 265.9" stroke="#d0a020" stroke-width="0.8"/><path d="M130.7 73.7L131.9 70.7L131.7 67.7L132.0 64.7L132.9 61.7L133.6 58.7L134.7 55.7" stroke="#d02050" stroke-width="0.8"/><path d="M134.7 55.7L135.5 52.7L136.6 49.7L137.9 46.7L139.0 43.7L139.7 40.7" stroke="#d0a020" stroke-width="0.8"/><path d="M139.7 40.7L140.0 37.7" stroke="#d0a020" stroke-width="0.8"/><path d="M474.6 277.2L475.2 274.2L475.5 271.2L476.8 268.2L476.8 265.2L476.9 262.2L477.9 259.2" stroke="#e06020" stroke-width="0.8"/><path d="M477.9 253.2L478.3 250.2L478.8 247.2L479.3 244.2L479.5 241.2L479.8 238.2L480.0 235.2L480.1 232.2L480.7 229.2L480.8 226.2" stroke="#e06020" stroke-width="0.8"/><path d="M480.8 226.2L480.9 223.2L482.2 220.2L483.4 217.2L483.7 214.2" stroke="#c01840" stroke-width="0.8"/><path d="M217.7 116.6L218.1 113.6L218.4 110.6" stroke="#d02050" stroke-width="0.8"/><path d="M220.3 104.6L220.4 101.6L220.5 98.6L221.2 95.6L222.3 92.6L223.2 89.6L223.7 86.6L224.9 83.6" stroke="#d02050" stroke-width="0.8"/><path d="M224.9 83.6L224.7 80.6L225.6 77.6L226.7 74.6L226.6 71.6L226.6 68.6" stroke="#d02050" stroke-width="0.8"/><path d="M226.6 68.6L227.0 65.6L226.9 62.6L227.7 59.6" stroke="#d0a020" stroke-width="0.8"/><path d="M450.7 281.5L452.1 278.5L452.5 275.5L453.7 272.5L453.9 269.5L455.1 266.5L455.2 263.5" stroke="#c01840" stroke-width="0.8"/><path d="M456.0 260.5L456.9 257.5L457.5 254.5L457.8 251.5L459.2 248.5L460.3 245.5L460.6 242.5" stroke="#c01840" stroke-width="0.8"/><path d="M366.5 115.2L366.7 112.2L366.7 109.2" stroke="#d02050" stroke-width="0.8"/><path d="M367.9 103.2L369.0 100.2L370.0 97.2L371.2 94.2L370.9 91.2L371.9 88.2L372.0 85.2L372.5 82.2" stroke="#d02050" stroke-width="0.8"/><path d="M121.2 154.4L122.7 151.4L123.8 148.4L125.3 145.4L125.9 142.4L126.2 139.4L127.4 136.4L128.0 133.4L128.8 130.4L130.2 127.4" stroke="#d02050" stroke-width="0.8"/><path d="M140.6 122.4L141.9 119.4L142.0 116.4L142.9 113.4L143.7 110.4L144.8 107.4" stroke="#c01840" stroke-width="0.8"/><path d="M152.4 288.4L152.7 285.4L152.9 282.4L153.7 279.4L154.5 276.4" stroke="#d02050" stroke-width="0.8"/><path d="M157.6 270.4L159.2 267.4L160.2 264.4L161.3 261.4L161.8 258.4L163.2 255.4" stroke="#d02050" stroke-width="0.8"/><path d="M164.1 252.4L164.3 249.4L166.0 246.4" stroke="#d02050" stroke-width="0.8"/><path d="M166.4 240.4L166.8 237.4L167.5 234.4L168.0 231.4L169.2 228.4L169.9 225.4" stroke="#d02050" stroke-width="0.8"/><path d="M169.9 225.4L171.6 222.4" stroke="#d02050" stroke-width="0.8"/><path d="M388.7 316.2L388.9 313.2L388.5 310.2L389.3 307.2L390.2 304.2L390.1 301.2L390.8 298.2L391.1 295.2" stroke="#c01840" stroke-width="0.8"/><path d="M391.1 295.2L392.4 292.2" stroke="#c01840" stroke-width="0.8"/><path d="M194.3 259.4L195.0 256.4L196.1 253.4L196.2 250.4L196.4 247.4L197.6 244.4L198.1 241.4L199.1 238.4" stroke="#a81838" stroke-width="0.8"/><path d="M199.1 238.4L200.3 235.4L200.6 232.4L201.9 229.4L203.2 226.4L203.2 223.4" stroke="#a81838" stroke-width="0.8"/><path d="M417.7 262.9L419.2 259.9L420.0 256.9L421.2 253.9" stroke="#c01840" stroke-width="0.8"/><path d="M194.4 318.4L195.2 315.4L195.9 312.4L196.7 309.4L196.7 306.4L197.1 303.4L196.8 300.4L197.7 297.4L197.9 294.4L198.4 291.4" stroke="#d02050" stroke-width="0.8"/><path d="M198.4 291.4L198.0 288.4L197.9 285.4L198.7 282.4" stroke="#d0a020" stroke-width="0.8"/><path d="M469.6 215.0L469.6 212.0L469.7 209.0L469.8 206.0" stroke="#d0a020" stroke-width="0.8"/><path d="M469.9 203.0L470.6 200.0L471.5 197.0L471.7 194.0L472.6 191.0L472.6 188.0L472.5 185.0" stroke="#c01840" stroke-width="0.8"/><path d="M242.0 350.2L242.4 347.2L242.3 344.2L242.2 341.2L242.6 338.2L242.6 335.2" stroke="#a81838" stroke-width="0.8"/><path d="M244.9 329.2L245.2 326.2L246.2 323.2L246.9 320.2L247.7 317.2L248.8 314.2L249.4 311.2L250.5 308.2L250.6 305.2" stroke="#a81838" stroke-width="0.8"/><path d="M252.1 299.2L252.3 296.2L252.4 293.2" stroke="#a81838" stroke-width="0.8"/><path d="M252.4 293.2L253.8 290.2L254.6 287.2" stroke="#a81838" stroke-width="0.8"/><path d="M265.1 81.9L265.5 78.9L265.3 75.9" stroke="#c01840" stroke-width="0.8"/><path d="M265.3 75.9L265.8 72.9L266.3 69.9" stroke="#d0a020" stroke-width="0.8"/><path d="M266.3 69.9L267.3 66.9L268.5 63.9L269.6 60.9" stroke="#c01840" stroke-width="0.8"/><path d="M270.3 57.9L270.6 54.9L271.8 51.9L271.8 48.9L272.0 45.9L272.6 42.9L272.8 39.9" stroke="#c01840" stroke-width="0.8"/><path d="M315.5 384.1L315.2 381.1L316.1 378.1L316.3 375.1L316.6 372.1L317.0 369.1L317.8 366.1" stroke="#d02050" stroke-width="0.8"/><path d="M317.8 366.1L318.7 363.1L318.4 360.1L319.0 357.1L318.5 354.1" stroke="#d02050" stroke-width="0.8"/><path d="M318.9 351.1L319.8 348.1L320.1 345.1" stroke="#d02050" stroke-width="0.8"/><path d="M321.2 339.1L321.8 336.1L322.8 333.1" stroke="#d02050" stroke-width="0.8"/><path d="M161.3 242.5L161.7 239.5L162.3 236.5L163.2 233.5L164.6 230.5L165.9 227.5L167.3 224.5" stroke="#e06020" stroke-width="0.8"/><path d="M168.5 221.5L169.1 218.5L169.5 215.5L170.9 212.5" stroke="#e06020" stroke-width="0.8"/><path d="M170.9 212.5L172.2 209.5L172.6 206.5L173.7 203.5L174.1 200.5L174.1 197.5L174.7 194.5L176.0 191.5L176.7 188.5" stroke="#d02050" stroke-width="0.8"/><path d="M221.0 143.1L221.5 140.1L223.2 137.1L224.2 134.1L225.6 131.1L226.3 128.1L226.8 125.1" stroke="#a81838" stroke-width="0.8"/><path d="M228.9 119.1L229.4 116.1L231.0 113.1L231.9 110.1L233.5 107.1L233.8 104.1L234.9 101.1L235.9 98.1" stroke="#a81838" stroke-width="0.8"/><path d="M236.1 95.1L237.6 92.1" stroke="#a81838" stroke-width="0.8"/><path d="M327.6 289.4L327.3 286.4L327.7 283.4L328.5 280.4L329.0 277.4L329.4 274.4" stroke="#c01840" stroke-width="0.8"/><path d="M329.7 271.4L330.0 268.4L331.0 265.4L330.7 262.4L331.4 259.4L331.1 256.4L332.1 253.4" stroke="#c01840" stroke-width="0.8"/><path d="M333.0 247.4L333.1 244.4L333.8 241.4L334.2 238.4L335.3 235.4L335.7 232.4" stroke="#c01840" stroke-width="0.8"/><path d="M335.7 232.4L336.1 229.4L336.5 226.4L336.5 223.4L337.6 220.4" stroke="#c01840" stroke-width="0.8"/><path d="M446.7 296.3L447.7 293.3L448.8 290.3L449.4 287.3L450.4 284.3L451.8 281.3" stroke="#a81838" stroke-width="0.8"/><path d="M452.9 278.3L454.2 275.3L455.7 272.3L457.1 269.3L457.8 266.3L458.4 263.3L458.9 260.3" stroke="#a81838" stroke-width="0.8"/><path d="M459.5 257.3L460.1 254.3L461.6 251.3L461.9 248.3" stroke="#a81838" stroke-width="0.8"/><path d="M483.9 364.9L485.6 361.9L487.2 358.9L488.4 355.9L489.6 352.9L490.4 349.9L491.9 346.9" stroke="#a81838" stroke-width="0.8"/><path d="M330.6 312.0L330.9 309.0L331.2 306.0L332.4 303.0L332.7 300.0L334.0 297.0" stroke="#c01840" stroke-width="0.8"/><path d="M334.5 294.0L335.3 291.0L335.1 288.0L335.7 285.0L336.5 282.0L337.6 279.0L338.7 276.0L338.7 273.0" stroke="#e06020" stroke-width="0.8"/><path d="M338.6 270.0L338.8 267.0L340.0 264.0L341.0 261.0L341.0 258.0L342.2 255.0" stroke="#c01840" stroke-width="0.8"/><path d="M135.2 171.3L136.3 168.3L138.0 165.3L139.6 162.3L139.9 159.3L140.1 156.3L140.7 153.3L141.7 150.3L143.5 147.3" stroke="#d02050" stroke-width="0.8"/><path d="M143.6 144.3L144.9 141.3L146.3 138.3L146.8 135.3L148.2 132.3L149.7 129.3L150.0 126.3L151.1 123.3L152.0 120.3" stroke="#d0a020" stroke-width="0.8"/><path d="M153.4 117.3L153.8 114.3L154.9 111.3L155.1 108.3L155.3 105.3" stroke="#d02050" stroke-width="0.8"/><path d="M158.4 198.1L159.2 195.1L160.8 192.1L161.5 189.1L163.1 186.1L164.5 183.1L166.2 180.1L168.1 177.1L169.6 174.1L170.4 171.1L172.0 168.1L172.6 165.1" stroke="#a81838" stroke-width="0.85"/><path d="M158.4 198.1L164.5 200.5" stroke="#e0c020" stroke-width="1.0"/><path d="M135.6 60.1L136.9 57.1L137.2 54.1L138.4 51.1L139.3 48.1L139.5 45.1L140.4 42.1L140.9 39.1L141.9 36.1" stroke="#b828c8" stroke-width="0.85"/><path d="M326.1 140.1L326.7 137.1L327.5 134.1L328.8 131.1L329.4 128.1L331.1 125.1L331.6 122.1L332.8 119.1L334.4 116.1L335.8 113.1L336.4 110.1L337.0 107.1L338.4 104.1L339.4 101.1L339.9 98.1L340.5 95.1L341.8 92.1" stroke="#9040e8" stroke-width="0.85"/><path d="M193.1 114.9L194.2 111.9L195.5 108.9L197.1 105.9L198.6 102.9L200.1 99.9L201.3 96.9L202.2 93.9L204.3 90.9L205.9 87.9L206.8 84.9L208.6 81.9L210.3 78.9L212.0 75.9L213.9 72.9" stroke="#a81838" stroke-width="0.85"/><path d="M212.0 75.9L216.0 74.4" stroke="#40e040" stroke-width="1.0"/><path d="M209.9 175.5L210.6 172.5L211.8 169.5L212.2 166.5L212.6 163.5L212.9 160.5L214.4 157.5L215.5 154.5L217.0 151.5L218.2 148.5L218.5 145.5" stroke="#c81cb8" stroke-width="0.85"/><path d="M218.5 145.5L226.3 147.1" stroke="#4080ff" stroke-width="1.0"/><path d="M378.2 102.0L378.9 99.0L379.6 96.0L381.0 93.0L381.6 90.0L381.9 87.0L383.1 84.0L383.8 81.0L385.2 78.0L385.9 75.0L386.5 72.0" stroke="#a81838" stroke-width="0.85"/><path d="M378.2 102.0L382.6 103.8" stroke="#e0c020" stroke-width="1.0"/><path d="M134.3 137.4L135.8 134.4L137.4 131.4L138.5 128.4L140.3 125.4L141.4 122.4L142.4 119.4L144.2 116.4L145.6 113.4L146.7 110.4L148.6 107.4L150.4 104.4L151.8 101.4L152.6 98.4" stroke="#b828c8" stroke-width="0.85"/><path d="M413.2 105.9L414.1 102.9L414.4 99.9L415.7 96.9L416.5 93.9L416.7 90.9L417.6 87.9L418.3 84.9L418.8 81.9L419.3 78.9L420.4 75.9" stroke="#d02050" stroke-width="0.85"/><path d="M413.2 105.9L421.1 104.3" stroke="#e0c020" stroke-width="1.0"/><path d="M205.8 110.7L206.6 107.7L207.0 104.7L208.2 101.7L209.1 98.7L209.7 95.7L210.0 92.7L211.1 89.7L211.5 86.7L211.7 83.7L211.9 80.7L212.7 77.7" stroke="#9040e8" stroke-width="0.85"/><path d="M207.0 104.7L211.6 105.5" stroke="#20c0e0" stroke-width="1.0"/><path d="M384.0 198.9L384.7 195.9L385.5 192.9L386.8 189.9L388.1 186.9L388.3 183.9L388.6 180.9L389.7 177.9L390.4 174.9L391.1 171.9L392.3 168.9L393.2 165.9L393.8 162.9L394.5 159.9L395.0 156.9L396.2 153.9L396.9 150.9L397.1 147.9L398.2 144.9L398.2 141.9" stroke="#c020d0" stroke-width="0.85"/><path d="M111.9 198.1L113.6 195.1L114.8 192.1L116.7 189.1L117.7 186.1L119.2 183.1L121.1 180.1L122.1 177.1L123.0 174.1L125.0 171.1L126.0 168.1L127.9 165.1" stroke="#c81cb8" stroke-width="0.85"/><path d="M122.8 198.9L124.4 195.9L124.9 192.9L126.4 189.9L128.0 186.9L129.3 183.9L130.1 180.9L131.0 177.9L132.4 174.9L132.8 171.9L133.4 168.9L134.6 165.9L135.1 162.9" stroke="#a838e0" stroke-width="0.85"/><path d="M131.0 177.9L138.4 177.4" stroke="#40e040" stroke-width="1.0"/><path d="M106.0 97.1L107.7 94.1L109.4 91.1L110.2 88.1L111.6 85.1L113.3 82.1L114.8 79.1L116.6 76.1L118.2 73.1L119.4 70.1L120.2 67.1L121.9 64.1L123.5 61.1L125.3 58.1L126.6 55.1" stroke="#c020d0" stroke-width="0.85"/><path d="M295.3 114.4L296.0 111.4L297.4 108.4L298.8 105.4L299.8 102.4L301.2 99.4L302.6 96.4L303.3 93.4L303.7 90.4L305.2 87.4L305.5 84.4L306.3 81.4L306.7 78.4L307.7 75.4L309.0 72.4L309.2 69.4" stroke="#d02050" stroke-width="0.85"/><path d="M276.4 210.5L276.9 207.5L277.9 204.5L278.6 201.5L279.0 198.5L279.1 195.5L280.5 192.5L281.3 189.5L282.5 186.5" stroke="#a81838" stroke-width="0.85"/><path d="M191.6 67.3L193.0 64.3L194.9 61.3L196.4 58.3L198.2 55.3L199.7 52.3L201.1 49.3L202.9 46.3L204.6 43.3L206.1 40.3L207.1 37.3" stroke="#c020d0" stroke-width="0.85"/><path d="M193.0 64.3L197.5 64.3" stroke="#40e040" stroke-width="1.0"/><path d="M208.2 168.8L208.8 165.8L210.0 162.8L210.6 159.8L212.0 156.8L212.4 153.8L213.1 150.8L213.3 147.8L214.6 144.8L215.2 141.8L216.4 138.8L217.4 135.8L217.8 132.8L219.0 129.8L219.1 126.8L220.4 123.8L221.5 120.8L221.8 117.8" stroke="#c01840" stroke-width="0.85"/><path d="M268.4 82.0L269.4 79.0L270.7 76.0L271.5 73.0L272.0 70.0L272.7 67.0L274.3 64.0L275.3 61.0L276.1 58.0L277.6 55.0" stroke="#b828c8" stroke-width="0.85"/><path d="M157.8 93.5L159.5 90.5L160.8 87.5L162.3 84.5L163.5 81.5L164.8 78.5L165.8 75.5L167.4 72.5L168.2 69.5L169.6 66.5L170.5 63.5L171.4 60.5L173.2 57.5" stroke="#c020d0" stroke-width="0.85"/><path d="M272.5 146.2L273.6 143.2L274.2 140.2L275.6 137.2L276.0 134.2L276.4 131.2L276.7 128.2" stroke="#c81cb8" stroke-width="0.85"/><path d="M272.5 146.2L278.4 143.3" stroke="#e0c020" stroke-width="1.0"/><path d="M365.0 90.4L366.1 87.4L367.6 84.4L369.3 81.4L370.6 78.4L371.9 75.4L373.8 72.4L374.8 69.4L376.3 66.4L377.0 63.4L378.5 60.4L380.5 57.4L381.8 54.4L383.5 51.4L384.6 48.4L385.8 45.4L387.1 42.4" stroke="#c01840" stroke-width="0.85"/><path d="M378.5 60.4L383.8 59.1" stroke="#4080ff" stroke-width="1.0"/><path d="M326.6 94.3L326.8 91.3L327.2 88.3L328.3 85.3L328.9 82.3L329.7 79.3L330.1 76.3L330.6 73.3L331.7 70.3L333.1 67.3" stroke="#9040e8" stroke-width="0.85"/><path d="M158.8 176.8L159.1 173.8L159.2 170.8L160.4 167.8L161.1 164.8L161.7 161.8L162.9 158.8L163.4 155.8" stroke="#a838e0" stroke-width="0.85"/><path d="M263.2 178.2L264.6 175.2L264.9 172.2L265.8 169.2L266.5 166.2L267.5 163.2L268.7 160.2L270.0 157.2L270.7 154.2L271.5 151.2L271.9 148.2L272.4 145.2L273.8 142.2L275.0 139.2L275.4 136.2L276.9 133.2" stroke="#9040e8" stroke-width="0.85"/><path d="M312.5 96.9L313.2 93.9L313.6 90.9L314.8 87.9L315.1 84.9L315.8 81.9L316.1 78.9" stroke="#c81cb8" stroke-width="0.85"/><path d="M313.2 93.9L319.0 91.2" stroke="#20c0e0" stroke-width="1.0"/><path d="M124.6 117.2L124.6 114.2L126.0 111.2L127.3 108.2L128.0 105.2L129.4 102.2L130.1 99.2L130.4 96.2L131.6 93.2L131.7 90.2L132.4 87.2L133.0 84.2L134.1 81.2L135.5 78.2L136.5 75.2L137.5 72.2L138.0 69.2L138.0 66.2" stroke="#a81838" stroke-width="0.85"/><path d="M132.4 87.2L136.6 84.5" stroke="#20c0e0" stroke-width="1.0"/><path d="M281.6 99.1L283.2 96.1L284.0 93.1L285.2 90.1L286.5 87.1L287.9 84.1L289.5 81.1L290.2 78.1L291.8 75.1L292.2 72.1L293.3 69.1" stroke="#c01840" stroke-width="0.85"/><path d="M281.6 99.1L285.6 96.4" stroke="#20c0e0" stroke-width="1.0"/><path d="M395.4 84.8L397.0 81.8L398.2 78.8L399.7 75.8L401.2 72.8L402.1 69.8L403.2 66.8L403.6 63.8L403.9 60.8L405.4 57.8L406.6 54.8L407.4 51.8L408.0 48.8L409.4 45.8L410.7 42.8L411.2 39.8" stroke="#9040e8" stroke-width="0.85"/><path d="M121.2 201.9L123.2 198.9L124.8 195.9L126.2 192.9L128.0 189.9L128.9 186.9L130.7 183.9L131.8 180.9L133.2 177.9L135.1 174.9L135.8 171.9L136.9 168.9L138.8 165.9L140.0 162.9L142.0 159.9L143.7 156.9L144.7 153.9" stroke="#c01840" stroke-width="0.85"/><path d="M121.2 201.9L126.8 199.2" stroke="#20c0e0" stroke-width="1.0"/><path d="M322.0 219.3L322.4 216.3L323.2 213.3L324.4 210.3L324.8 207.3L325.8 204.3L326.9 201.3L327.6 198.3L328.7 195.3L330.3 192.3L331.9 189.3L332.9 186.3L334.1 183.3L335.0 180.3L336.1 177.3L337.4 174.3L339.0 171.3L339.7 168.3L340.5 165.3" stroke="#d02050" stroke-width="0.85"/><path d="M335.0 180.3L339.1 179.8" stroke="#4080ff" stroke-width="1.0"/><path d="M316.0 194.9L316.9 191.9L317.4 188.9L318.1 185.9L319.8 182.9L320.9 179.9L321.9 176.9L322.9 173.9L323.8 170.9L324.6 167.9L325.4 164.9L326.6 161.9L327.7 158.9L328.3 155.9L328.9 152.9L329.5 149.9L330.6 146.9L332.0 143.9L333.7 140.9" stroke="#c81cb8" stroke-width="0.85"/><path d="M265.1 87.1L266.1 84.1L267.6 81.1L268.5 78.1L269.2 75.1L270.2 72.1L271.6 69.1L272.7 66.1L273.6 63.1L275.5 60.1L277.1 57.1L278.0 54.1L278.7 51.1L280.3 48.1L282.1 45.1L283.7 42.1" stroke="#c020d0" stroke-width="0.85"/><path d="M137.2 132.7L137.9 129.7L139.2 126.7L140.6 123.7L141.4 120.7L142.8 117.7L143.7 114.7L145.1 111.7L146.2 108.7L148.0 105.7L149.1 102.7L149.6 99.7" stroke="#c81cb8" stroke-width="0.85"/><path d="M141.4 120.7L145.7 122.5" stroke="#4080ff" stroke-width="1.0"/><path d="M362.4 127.6L364.1 124.6L365.3 121.6L365.9 118.6L367.4 115.6L368.0 112.6L368.7 109.6L370.4 106.6L372.1 103.6L372.9 100.6L374.8 97.6L375.9 94.6L377.2 91.6L377.9 88.6" stroke="#9040e8" stroke-width="0.85"/><path d="M240.0 74.3L241.8 71.3L243.0 68.3L243.8 65.3L245.5 62.3L246.1 59.3L246.7 56.3L247.3 53.3L247.9 50.3L248.5 47.3L250.1 44.3L250.7 41.3L251.8 38.3" stroke="#c81cb8" stroke-width="0.85"/><path d="M254.6 26.3L262.5 23.7" stroke="#e0c020" stroke-width="1.0"/><path d="M303.4 124.1L304.9 121.1L306.0 118.1L307.7 115.1L309.0 112.1L309.9 109.1L310.7 106.1L311.5 103.1L313.2 100.1L315.0 97.1L315.8 94.1L317.1 91.1L317.8 88.1L318.4 85.1" stroke="#d02050" stroke-width="0.85"/><path d="M311.5 103.1L319.3 104.2" stroke="#4080ff" stroke-width="1.0"/><path d="M210.5 62.7L211.3 59.7L212.6 56.7L213.2 53.7L214.4 50.7L216.2 47.7L217.7 44.7L219.1 41.7L220.5 38.7" stroke="#c01840" stroke-width="0.85"/><path d="M213.2 53.7L219.2 55.4" stroke="#40e040" stroke-width="1.0"/><path d="M224.1 220.5L225.1 217.5L226.7 214.5L228.4 211.5L230.1 208.5L232.0 205.5L233.0 202.5L233.9 199.5L235.4 196.5L236.4 193.5L238.5 190.5L240.5 187.5L241.9 184.5L243.7 181.5L245.3 178.5L247.3 175.5L248.7 172.5" stroke="#9040e8" stroke-width="0.85"/><path d="M228.4 211.5L235.3 212.4" stroke="#20c0e0" stroke-width="1.0"/><path d="M364.6 103.7L366.1 100.7L366.8 97.7L368.5 94.7L369.7 91.7L370.5 88.7L371.7 85.7L373.6 82.7L374.7 79.7L376.1 76.7L378.0 73.7L379.6 70.7L380.8 67.7L381.9 64.7L383.4 61.7L384.8 58.7L386.4 55.7L388.0 52.7L388.9 49.7" stroke="#a838e0" stroke-width="0.85"/><path d="M315.3 208.3L316.9 205.3L318.4 202.3L319.3 199.3L320.3 196.3L320.7 193.3L321.6 190.3" stroke="#9040e8" stroke-width="0.85"/><path d="M315.3 208.3L320.0 208.1" stroke="#e0c020" stroke-width="1.0"/><path d="M111.0 222.0L112.4 219.0L113.4 216.0L115.0 213.0L116.0 210.0L116.8 207.0L117.6 204.0L119.2 201.0L120.2 198.0L121.1 195.0L121.9 192.0L122.6 189.0L124.7 186.0L125.5 183.0L127.2 180.0L128.4 177.0L129.2 174.0" stroke="#d02050" stroke-width="0.85"/><path d="M157.2 72.2L157.8 69.2L158.7 66.2L160.2 63.2L161.3 60.2L162.2 57.2L162.8 54.2L163.6 51.2L164.1 48.2L165.5 45.2L166.9 42.2L168.3 39.2L169.0 36.2" stroke="#a81838" stroke-width="0.85"/><path d="M148.1 83.4L149.6 80.4L151.3 77.4L152.8 74.4L153.4 71.4L154.2 68.4L155.2 65.4L156.8 62.4L158.3 59.4L159.0 56.4L159.7 53.4L161.2 50.4L162.9 47.4L163.4 44.4L164.3 41.4L164.9 38.4" stroke="#a838e0" stroke-width="0.85"/><path d="M151.3 77.4L156.2 79.3" stroke="#e0c020" stroke-width="1.0"/><path d="M303.7 88.7L305.5 85.7L306.2 82.7L307.3 79.7L308.2 76.7L308.8 73.7L310.4 70.7L310.9 67.7L312.4 64.7L313.9 61.7L315.0 58.7L316.6 55.7L317.5 52.7L318.1 49.7" stroke="#a81838" stroke-width="0.85"/><path d="M308.2 76.7L315.1 75.6" stroke="#20c0e0" stroke-width="1.0"/><path d="M288.4 192.3L289.9 189.3L290.5 186.3L291.6 183.3L291.8 180.3L292.9 177.3L293.8 174.3L295.2 171.3L295.7 168.3L295.8 165.3L296.4 162.3L297.2 159.3L298.3 156.3L298.8 153.3L300.0 150.3" stroke="#c020d0" stroke-width="0.85"/><path d="M341.1 195.4L343.0 192.4L344.7 189.4L346.3 186.4L348.2 183.4L349.6 180.4L351.6 177.4L353.0 174.4L354.1 171.4L355.6 168.4L357.1 165.4L358.9 162.4L360.2 159.4L361.5 156.4" stroke="#c020d0" stroke-width="0.85"/><path d="M305.8 158.7L306.5 155.7L307.7 152.7L308.7 149.7L309.9 146.7L310.8 143.7L311.9 140.7L312.5 137.7L313.1 134.7L313.9 131.7L314.4 128.7L315.8 125.7L316.6 122.7L317.1 119.7L318.5 116.7" stroke="#9040e8" stroke-width="0.85"/><path d="M244.8 193.2L245.6 190.2L246.1 187.2L247.1 184.2L247.8 181.2L248.4 178.2L250.0 175.2L251.5 172.2L252.4 169.2L253.4 166.2L254.8 163.2L255.8 160.2L256.6 157.2L257.5 154.2" stroke="#b828c8" stroke-width="0.85"/><path d="M254.8 163.2L262.1 162.1" stroke="#20c0e0" stroke-width="1.0"/><path d="M391.1 112.8L392.8 109.8L393.3 106.8L395.0 103.8L396.1 100.8L397.7 97.8L399.4 94.8L399.8 91.8L400.7 88.8L401.4 85.8L402.5 82.8L403.5 79.8L404.1 76.8L405.1 73.8" stroke="#c020d0" stroke-width="0.85"/><path d="M341.8 108.9L343.7 105.9L345.3 102.9L346.8 99.9L348.3 96.9L349.4 93.9L351.3 90.9L352.2 87.9L353.3 84.9L354.0 81.9L355.3 78.9L357.2 75.9L358.7 72.9L359.3 69.9L361.1 66.9L361.8 63.9L362.7 60.9" stroke="#c020d0" stroke-width="0.85"/><path d="M456.9 328.6L459.4 328.0L461.9 327.8L464.4 327.8L466.9 327.3L469.4 327.6L472.0 327.2L474.5 327.0L477.0 326.7L479.5 327.2" stroke="#20c0e0" stroke-width="1.05"/><path d="M479.5 327.2L482.0 326.2L484.5 326.2L487.0 326.6L489.6 326.0" stroke="#20c0e0" stroke-width="1.05"/><path d="M396.0 335.2L398.5 335.8L401.0 336.2L403.5 335.8L406.0 336.2L408.5 336.0L411.1 336.0L413.6 335.2L416.1 335.6" stroke="#20c0e0" stroke-width="1.05"/><path d="M416.1 335.6L418.6 335.1L421.1 334.8L423.6 334.7L426.1 335.1L428.6 335.9L431.1 336.5L433.6 336.7L436.1 336.2L438.6 336.1L441.1 336.3" stroke="#20c0e0" stroke-width="1.05"/><path d="M446.1 336.5L448.6 336.0L451.1 335.9L453.6 336.7L456.1 336.0L458.6 335.7L461.1 336.4L463.6 337.2" stroke="#3070ff" stroke-width="1.05"/><path d="M468.6 337.2L471.1 337.2L473.6 336.2L476.1 336.9L478.6 337.5L481.2 338.2L483.7 337.5L486.2 337.5" stroke="#20c0e0" stroke-width="1.05"/><path d="M472.3 222.1L474.9 222.7L477.5 222.8L480.0 222.3L482.6 221.5L485.2 220.4L487.7 219.7" stroke="#e0d020" stroke-width="1.05"/><path d="M487.7 219.7L490.3 219.5" stroke="#40e080" stroke-width="1.05"/><path d="M153.6 197.5L156.1 196.4L158.6 196.1L161.1 195.6" stroke="#c0e030" stroke-width="1.05"/><path d="M161.1 195.6L163.6 195.8L166.1 196.4L168.6 196.1L171.1 196.0L173.6 195.5L176.2 195.3L178.7 194.6L181.2 195.0L183.7 194.6L186.2 193.7" stroke="#c0e030" stroke-width="1.05"/><path d="M191.2 193.4L193.7 192.1L196.2 192.7L198.7 192.8" stroke="#40e040" stroke-width="1.05"/><path d="M201.2 192.4L203.7 191.5L206.2 190.6L208.7 189.9L211.2 190.0L213.7 189.9L216.2 189.5" stroke="#40e040" stroke-width="1.05"/><path d="M216.2 189.5L218.7 188.8L221.2 188.3L223.8 187.2L226.3 186.5L228.8 186.5L231.3 185.1L233.8 185.6L236.3 184.3L238.8 183.8" stroke="#40e040" stroke-width="1.05"/><path d="M238.8 183.8L241.3 183.0L243.8 182.6L246.3 181.8" stroke="#40e040" stroke-width="1.05"/><path d="M248.8 181.6L251.3 180.2L253.8 180.6L256.3 181.1L258.8 181.4" stroke="#c0e030" stroke-width="1.05"/><path d="M313.8 239.7L316.3 239.6L318.9 238.4L321.4 237.3L324.0 236.3L326.5 235.8L329.1 235.0L331.7 233.6" stroke="#30b8f0" stroke-width="1.05"/><path d="M336.8 231.7L339.3 232.0L341.9 232.3L344.5 231.3L347.0 231.6L349.6 230.4L352.1 229.0L354.7 227.5L357.2 226.9" stroke="#40e040" stroke-width="1.05"/><path d="M359.8 227.0L362.4 227.2L364.9 226.1L367.5 224.9L370.0 223.7L372.6 222.9L375.2 222.1L377.7 221.7L380.3 221.0L382.8 221.1L385.4 220.5" stroke="#e0c020" stroke-width="1.05"/><path d="M385.4 220.5L387.9 220.0L390.5 220.6L393.1 220.3L395.6 218.9L398.2 218.7" stroke="#e0c020" stroke-width="1.05"/><path d="M403.3 216.4L405.8 215.7L408.4 215.9" stroke="#40e040" stroke-width="1.05"/><path d="M436.7 228.3L439.2 228.9L441.7 228.5L444.3 228.5L446.8 229.5L449.4 230.1L451.9 230.7L454.4 231.5L457.0 231.4L459.5 230.9" stroke="#20c8e8" stroke-width="1.05"/><path d="M462.0 231.9L464.6 231.4L467.1 232.0L469.6 232.4L472.2 232.7L474.7 233.3L477.2 233.0L479.8 233.5L482.3 232.9L484.8 233.3" stroke="#20c8e8" stroke-width="1.05"/><path d="M487.4 232.8L489.9 233.5" stroke="#30e070" stroke-width="1.05"/><path d="M230.2 337.9L232.8 337.7L235.3 337.7L237.8 336.7L240.3 335.6L242.8 335.8L245.4 335.1L247.9 335.7L250.4 336.1L252.9 335.9L255.4 334.8" stroke="#40e040" stroke-width="1.05"/><path d="M260.5 332.8L263.0 332.8L265.5 332.6L268.0 332.8L270.6 332.3L273.1 332.8L275.6 333.3L278.1 333.5L280.6 333.2L283.2 333.8" stroke="#40e040" stroke-width="1.05"/><path d="M285.7 333.6L288.2 332.3L290.7 332.9L293.2 331.8L295.8 331.3L298.3 330.7L300.8 331.2L303.3 331.2L305.8 331.0L308.4 331.7L310.9 332.2" stroke="#c0e030" stroke-width="1.05"/><path d="M310.9 332.2L313.4 332.3" stroke="#c0e030" stroke-width="1.05"/><path d="M249.8 259.6L252.3 259.1L254.8 258.2L257.3 258.4L259.8 257.9L262.4 257.0L264.9 257.3" stroke="#20c8e8" stroke-width="1.05"/><path d="M269.9 254.6L272.4 254.0L274.9 252.6L277.4 253.0L279.9 252.8L282.4 251.8L284.9 252.2" stroke="#30e070" stroke-width="1.05"/><path d="M284.9 252.2L287.4 252.5L289.9 251.6L292.4 250.2L294.9 249.2L297.4 249.0" stroke="#20c8e8" stroke-width="1.05"/><path d="M302.4 247.6L304.9 246.2L307.4 246.6L309.9 247.0" stroke="#20c8e8" stroke-width="1.05"/><path d="M309.9 247.0L312.5 247.0L315.0 247.5L317.5 246.3L320.0 246.5L322.5 246.6" stroke="#30e070" stroke-width="1.05"/><path d="M327.5 244.5L330.0 244.5L332.5 244.2L335.0 243.1" stroke="#30e070" stroke-width="1.05"/><path d="M335.0 243.1L337.5 242.6L340.0 242.9L342.5 242.3" stroke="#30e070" stroke-width="1.05"/><path d="M342.5 242.3L345.0 241.3L347.5 241.8L350.0 242.0L352.5 241.6" stroke="#30e070" stroke-width="1.05"/><path d="M352.5 241.6L355.0 241.4L357.5 240.3L360.0 240.4" stroke="#30e070" stroke-width="1.05"/><path d="M365.1 239.5L367.6 239.3L370.1 239.7L372.6 240.0L375.1 239.3L377.6 239.7L380.1 239.7" stroke="#20c8e8" stroke-width="1.05"/><path d="M380.1 239.7L382.6 240.1L385.1 239.8L387.6 239.5" stroke="#30e070" stroke-width="1.05"/><path d="M190.8 222.2L193.3 222.0L195.9 221.3L198.4 220.3L200.9 219.5L203.4 219.7L206.0 218.8L208.5 218.7L211.0 219.2L213.5 218.1L216.0 218.8" stroke="#3070ff" stroke-width="1.05"/><path d="M218.6 218.8L221.1 218.4L223.6 217.7L226.1 216.6L228.7 216.7L231.2 216.4L233.7 216.8L236.2 216.3" stroke="#20c0e0" stroke-width="1.05"/><path d="M236.2 216.3L238.8 215.6L241.3 215.2L243.8 214.7L246.3 214.1" stroke="#3070ff" stroke-width="1.05"/><path d="M248.9 213.2L251.4 212.2L253.9 212.2L256.4 211.1L258.9 210.0L261.5 209.6L264.0 209.4" stroke="#20c0e0" stroke-width="1.05"/><path d="M264.0 209.4L266.5 209.8L269.0 208.9L271.6 208.6L274.1 208.2L276.6 208.5" stroke="#3070ff" stroke-width="1.05"/><path d="M420.3 325.9L423.1 326.2L426.0 325.4L428.9 325.8L431.8 326.6" stroke="#20d0e0" stroke-width="1.05"/><path d="M431.8 326.6L434.7 326.8L437.5 327.0" stroke="#20d0e0" stroke-width="1.05"/><path d="M190.4 231.8L193.5 231.1L196.5 230.5" stroke="#e0d020" stroke-width="1.05"/><path d="M245.7 339.7L248.5 340.9L251.3 342.5L254.1 343.4L256.9 343.1L259.7 344.7L262.5 345.6L265.3 345.6" stroke="#40e080" stroke-width="1.05"/><path d="M310.6 77.5L313.5 78.5L316.5 78.5L319.4 78.2" stroke="#e0c020" stroke-width="1.05"/><path d="M207.2 287.9L209.8 288.7L212.3 288.1L214.9 287.6L217.5 288.6" stroke="#c0e030" stroke-width="1.05"/><path d="M217.5 288.6L220.0 288.3L222.6 288.7" stroke="#40e040" stroke-width="1.05"/><path d="M135.7 305.9L138.9 305.8L142.0 307.2L145.2 306.8" stroke="#c0e030" stroke-width="1.05"/><path d="M147.7 228.1L150.2 228.3L152.7 228.5L155.2 227.9L157.7 228.5L160.2 228.9L162.8 228.6L165.3 227.8L167.8 226.8L170.3 227.3" stroke="#e0c020" stroke-width="1.05"/><path d="M106.2 104.0L108.9 104.3" stroke="#30b8f0" stroke-width="1.05"/><path d="M239.1 149.1L241.7 148.8L244.4 148.6L247.1 147.5L249.7 147.2" stroke="#30b8f0" stroke-width="1.05"/><path d="M249.7 147.2L252.4 147.8L255.0 147.1" stroke="#30b8f0" stroke-width="1.05"/><path d="M423.4 57.1L426.1 56.7L428.7 57.1L431.4 56.5L434.0 56.6" stroke="#40e080" stroke-width="1.05"/><path d="M246.0 53.9L248.7 54.3L251.3 55.0L254.0 55.1L256.7 55.0L259.3 56.1L262.0 56.1" stroke="#e0c020" stroke-width="1.05"/><path d="M329.2 169.3L332.2 169.4L335.3 168.5L338.4 168.8L341.4 168.5" stroke="#e0c020" stroke-width="1.05"/><path d="M373.7 274.0L376.4 275.0L379.1 275.8L381.8 275.3L384.4 275.5L387.1 276.1" stroke="#4090ff" stroke-width="1.05"/><path d="M387.1 276.1L389.8 277.0L392.5 278.0L395.1 278.5" stroke="#30d0d0" stroke-width="1.05"/><path d="M257.8 213.0L260.7 212.5L263.6 213.0L266.4 214.2L269.3 215.4L272.2 214.9L275.1 215.3" stroke="#20c0e0" stroke-width="1.05"/><path d="M213.2 286.6L215.8 285.6L218.3 285.2L220.8 285.5L223.3 286.3L225.9 287.2L228.4 287.0" stroke="#20d0e0" stroke-width="1.05"/><path d="M278.9 124.7L282.0 123.8L285.1 122.7L288.2 123.0" stroke="#20d0e0" stroke-width="1.05"/><path d="M168.8 359.8L171.7 360.1L174.6 360.1L177.5 360.8" stroke="#20c0e0" stroke-width="1.05"/><path d="M177.5 360.8L180.4 360.9" stroke="#3070ff" stroke-width="1.05"/><path d="M390.5 82.7L393.4 82.1L396.2 81.6L399.0 81.5L401.9 80.4L404.7 80.8" stroke="#40e040" stroke-width="1.05"/><path d="M120.6 114.7L123.2 115.0L125.8 113.4L128.4 113.8L131.0 114.1L133.6 112.7L136.1 113.0L138.7 112.3L141.3 111.2" stroke="#30e070" stroke-width="1.05"/><path d="M211.5 364.8L214.1 365.0L216.6 365.2L219.1 366.0L221.6 365.1" stroke="#20c8e8" stroke-width="1.05"/><path d="M300.9 184.1L303.7 183.0L306.6 181.6" stroke="#3070ff" stroke-width="1.05"/><path d="M141.5 81.4L145.1 82.7L148.6 83.4" stroke="#20d0e0" stroke-width="1.05"/><path d="M458.3 162.6L460.8 161.6L463.4 161.1L465.9 160.6L468.4 160.2L470.9 160.0L473.4 159.5" stroke="#30e070" stroke-width="1.05"/><path d="M273.2 167.5L275.3 167.3L277.4 167.9" stroke="#30d0d0" stroke-width="1.05"/><path d="M209.7 368.4L212.7 367.7L215.7 366.4L218.6 365.5" stroke="#30e070" stroke-width="1.05"/><path d="M218.6 365.5L221.6 365.9" stroke="#30e070" stroke-width="1.05"/><path d="M284.1 297.3L286.7 296.6L289.4 295.1L292.0 294.1L294.6 293.4L297.2 292.1" stroke="#40e040" stroke-width="1.05"/><path d="M297.2 292.1L299.9 290.8L302.5 290.8L305.1 289.6" stroke="#c0e030" stroke-width="1.05"/><path d="M408.1 70.8L410.9 70.8L413.7 71.7L416.4 71.3" stroke="#20d0e0" stroke-width="1.05"/><path d="M172.2 363.5L175.0 362.8L177.8 361.6L180.6 362.1L183.4 360.9L186.2 360.2" stroke="#3070ff" stroke-width="1.05"/><path d="M186.2 360.2L189.0 359.2L191.8 358.7" stroke="#20c0e0" stroke-width="1.05"/><path d="M420.6 107.5L423.5 106.8L426.3 106.6L429.1 106.3" stroke="#20d0e0" stroke-width="1.05"/><path d="M246.6 168.9L249.7 167.4L252.9 167.8" stroke="#30b8f0" stroke-width="1.05"/><path d="M314.1 203.2L316.7 202.8L319.3 203.3L322.0 202.5L324.6 202.6L327.2 201.9L329.9 201.9L332.5 201.2" stroke="#3070ff" stroke-width="1.05"/><path d="M139.7 248.7L142.8 249.3L145.8 248.6L148.9 249.1L151.9 248.5" stroke="#40e040" stroke-width="1.05"/><path d="M297.1 127.8L300.1 127.2L303.0 128.2" stroke="#4090ff" stroke-width="1.05"/><path d="M420.7 75.9L423.3 74.9L425.9 74.2L428.5 73.3" stroke="#40e040" stroke-width="1.05"/><path d="M428.5 73.3L431.1 71.9L433.7 72.0L436.3 70.5L438.9 69.5L441.5 68.0L444.1 66.6" stroke="#30b8f0" stroke-width="1.05"/><path d="M232.4 377.8L235.0 378.2L237.6 377.4L240.3 377.5L242.9 378.4L245.5 379.2L248.1 379.7L250.7 380.3" stroke="#20d0e0" stroke-width="1.05"/><path d="M250.7 380.3L253.3 381.3L255.9 381.5" stroke="#20d0e0" stroke-width="1.05"/><path d="M179.1 338.2L181.9 337.8L184.8 337.9L187.6 338.1L190.5 339.3L193.3 339.8L196.2 340.5" stroke="#e0d020" stroke-width="1.05"/><path d="M448.4 143.8L451.1 144.1L453.8 143.9L456.5 144.8L459.2 145.0L461.9 145.7L464.5 147.2" stroke="#20c8e8" stroke-width="1.05"/><path d="M264.6 206.9L267.3 206.8L269.9 207.0L272.5 207.1L275.2 206.9L277.8 207.4L280.5 207.2L283.1 206.5L285.8 205.6L288.4 205.2" stroke="#20c0e0" stroke-width="1.05"/><path d="M383.5 276.4L386.2 276.2L389.0 276.0L391.7 276.0L394.5 275.2" stroke="#20d0e0" stroke-width="1.05"/><path d="M451.5 147.8L454.1 147.0L456.6 147.1L459.2 148.1L461.8 147.5L464.4 147.1L466.9 147.2" stroke="#e0c020" stroke-width="1.05"/><path d="M466.9 147.2L469.5 146.7L472.1 147.4" stroke="#30b8f0" stroke-width="1.05"/><path d="M366.3 208.5L369.0 208.1L371.7 207.6L374.3 207.0L377.0 205.9L379.7 205.2L382.3 204.9" stroke="#20d0e0" stroke-width="1.05"/><path d="M382.3 204.9L385.0 205.2" stroke="#20d0e0" stroke-width="1.05"/><path d="M140.3 307.0L142.9 306.9L145.5 306.4L148.1 307.0" stroke="#30b8f0" stroke-width="1.05"/><path d="M148.1 307.0L150.7 306.3L153.3 306.3L155.9 305.2" stroke="#e0c020" stroke-width="1.05"/><path d="M253.1 181.6L256.3 181.3L259.5 181.8" stroke="#3070ff" stroke-width="1.05"/><path d="M453.9 335.4L456.4 336.5L459.0 336.4L461.5 337.4" stroke="#30d0d0" stroke-width="1.05"/><path d="M347.5 327.3L350.4 326.9L353.3 326.9L356.2 326.7L359.1 326.1L362.0 324.6L365.0 324.2" stroke="#30d0d0" stroke-width="1.05"/><path d="M367.8 308.6L370.4 309.5L373.1 309.2L375.8 308.8" stroke="#20c8e8" stroke-width="1.05"/><path d="M121.5 109.1L124.7 108.2L127.9 108.2L131.1 108.5" stroke="#e0d020" stroke-width="1.05"/><path d="M204.0 77.1L207.0 76.7L209.9 76.4L212.9 74.9" stroke="#20c0e0" stroke-width="1.05"/><path d="M371.5 122.6L375.1 123.8L378.8 124.5" stroke="#20d0e0" stroke-width="1.05"/><path d="M368.3 208.5L371.2 208.5L374.2 208.5L377.1 208.5L380.0 208.3L383.0 207.0" stroke="#40e080" stroke-width="1.05"/><path d="M159.6 118.2L162.2 116.5L164.7 115.0L167.2 114.1L169.7 113.4L172.2 111.9" stroke="#e0d020" stroke-width="1.05"/><path d="M186.6 307.6L189.5 307.8L192.4 307.8L195.3 308.9" stroke="#30d0d0" stroke-width="1.05"/><path d="M124.5 144.6L127.4 143.0L130.2 142.6L133.0 141.9" stroke="#20c0e0" stroke-width="1.05"/><path d="M426.2 298.8L428.8 298.2L431.4 298.9L434.0 297.9L436.6 297.8L439.2 296.9L441.8 296.3L444.4 297.0L447.0 297.6" stroke="#20c8e8" stroke-width="1.05"/><path d="M425.8 61.5L428.8 60.5L431.9 60.2L435.0 60.2" stroke="#30d0d0" stroke-width="1.05"/><path d="M130.4 336.7L133.1 337.4L135.8 337.4L138.4 336.4L141.1 336.8L143.8 336.7L146.5 336.0L149.2 335.9L151.9 335.8" stroke="#20c0e0" stroke-width="1.05"/><path d="M257.8 186.8L260.4 186.0L263.1 185.3L265.7 183.8L268.4 182.5L271.0 181.9" stroke="#3070ff" stroke-width="1.05"/><path d="M271.0 181.9L273.7 182.4L276.4 182.0L279.0 181.0" stroke="#3070ff" stroke-width="1.05"/><path d="M330.3 73.1L333.1 72.0L335.9 72.6L338.6 72.7" stroke="#20d0e0" stroke-width="1.05"/><path d="M338.6 72.7L341.4 71.7L344.2 71.4L347.0 71.1L349.7 70.4L352.5 70.5" stroke="#20d0e0" stroke-width="1.05"/><path d="M365.8 102.1L368.5 102.0L371.3 103.1L374.0 102.8L376.8 102.4" stroke="#40e080" stroke-width="1.05"/><path d="M376.8 102.4L379.5 103.2L382.3 104.2L385.0 104.9" stroke="#e0d020" stroke-width="1.05"/><path d="M243.5 49.3L246.3 49.3L249.1 47.9L251.8 48.0" stroke="#30d0d0" stroke-width="1.05"/><path d="M251.8 48.0L254.6 46.6" stroke="#4090ff" stroke-width="1.05"/><path d="M314.0 373.2L317.3 373.8L320.6 373.3L323.8 373.5" stroke="#3070ff" stroke-width="1.05"/><path d="M413.8 165.3L416.8 164.7L419.9 164.8L422.9 164.6" stroke="#20c0e0" stroke-width="1.05"/><path d="M422.9 164.6L425.9 163.6" stroke="#3070ff" stroke-width="1.05"/><path d="M336.2 383.5L339.0 383.8L341.7 383.3" stroke="#20d0e0" stroke-width="1.05"/><path d="M107.3 200.2L109.5 200.3L111.7 200.7" stroke="#e0d020" stroke-width="1.05"/><path d="M250.4 148.2L253.1 147.3L255.7 146.6L258.4 146.7" stroke="#e0c020" stroke-width="1.05"/><path d="M272.8 295.9L275.4 295.7L277.9 296.3L280.5 295.7L283.0 296.2" stroke="#40e080" stroke-width="1.05"/><path d="M283.0 296.2L285.5 295.2L288.1 295.4L290.6 296.0L293.1 295.0L295.7 294.4" stroke="#e0d020" stroke-width="1.05"/><path d="M369.2 306.1L371.9 307.3L374.6 307.0" stroke="#30b8f0" stroke-width="1.05"/><path d="M187.4 61.1L190.1 60.8L192.8 61.1L195.5 60.2L198.2 59.2" stroke="#20c0e0" stroke-width="1.05"/><path d="M363.4 210.6L365.9 211.2L368.5 212.1L371.0 211.6L373.6 212.0" stroke="#20c0e0" stroke-width="1.05"/><path d="M373.6 212.0L376.1 212.8L378.7 213.1L381.3 213.3" stroke="#3070ff" stroke-width="1.05"/><path d="M204.8 115.5L207.6 115.5L210.4 115.3L213.2 115.7L216.0 114.7L218.8 115.4" stroke="#40e080" stroke-width="1.05"/><path d="M207.8 246.6L210.5 247.9L213.1 248.0L215.8 249.2" stroke="#4090ff" stroke-width="1.05"/><path d="M215.8 249.2L218.4 249.7L221.0 250.0L223.7 250.8L226.3 251.9" stroke="#30d0d0" stroke-width="1.05"/><path d="M431.2 85.8L433.8 86.4L436.5 87.1L439.1 88.5" stroke="#c0e030" stroke-width="1.05"/><path d="M180.5 337.6L183.1 338.4L185.7 339.9L188.3 340.1L190.9 339.7L193.5 341.3L196.2 341.9L198.8 342.7" stroke="#30b8f0" stroke-width="1.05"/><path d="M187.6 278.2L190.4 277.3L193.3 277.3L196.1 275.9L198.9 276.0L201.8 275.7L204.6 274.5" stroke="#3070ff" stroke-width="1.05"/><path d="M278.4 87.2L281.1 87.0L283.8 87.3L286.6 85.8L289.3 84.6" stroke="#40e040" stroke-width="1.05"/><path d="M355.5 382.8L358.8 382.0L362.0 381.6" stroke="#e0d020" stroke-width="1.05"/><path d="M404.8 247.7L407.9 247.6L410.9 248.0" stroke="#30e070" stroke-width="1.05"/><path d="M262.0 84.1L264.8 84.4L267.6 84.2L270.4 83.3L273.2 83.2" stroke="#e0d020" stroke-width="1.05"/><path d="M273.2 83.2L276.0 82.4L278.8 83.0L281.6 83.5L284.4 83.6" stroke="#40e080" stroke-width="1.05"/><path d="M106.6 281.9L109.2 281.5L111.8 281.7L114.4 282.9L117.0 284.4L119.7 284.4L122.3 285.6" stroke="#40e080" stroke-width="1.05"/><path d="M122.3 285.6L124.9 285.4" stroke="#40e080" stroke-width="1.05"/><path d="M437.9 231.5L440.7 231.6L443.4 231.6L446.2 232.6L449.0 233.3" stroke="#20c0e0" stroke-width="1.05"/><path d="M151.2 99.7L153.9 99.3L156.5 99.0L159.2 97.7L161.9 98.4" stroke="#20d0e0" stroke-width="1.05"/><path d="M161.9 98.4L164.6 98.3L167.3 98.9L170.0 97.8L172.7 97.8" stroke="#20d0e0" stroke-width="1.05"/><path d="M360.8 300.1L363.4 300.5L366.0 300.0L368.5 300.5" stroke="#4090ff" stroke-width="1.05"/><path d="M435.8 116.5L438.8 117.3L441.7 118.3L444.6 118.5" stroke="#20d0e0" stroke-width="1.05"/><path d="M292.0 275.5L294.6 275.8L297.3 275.8L299.9 275.1" stroke="#e0d020" stroke-width="1.05"/><path d="M299.9 275.1L302.5 275.4L305.1 274.7" stroke="#e0d020" stroke-width="1.05"/><path d="M473.2 261.3L475.9 261.9L478.5 261.2L481.2 262.1L483.9 261.7L486.5 261.8L489.2 261.5" stroke="#40e040" stroke-width="1.05"/><path d="M250.7 185.9L253.3 186.4L255.9 186.7L258.5 186.3L261.1 187.3L263.7 187.0L266.3 186.5L268.9 187.4L271.5 187.4" stroke="#40e080" stroke-width="1.05"/><path d="M411.5 309.9L414.1 309.4L416.7 308.5L419.4 307.6L422.0 307.6" stroke="#20c0e0" stroke-width="1.05"/><path d="M116.0 347.8L119.0 347.1L122.1 346.7" stroke="#20d0e0" stroke-width="1.05"/><path d="M440.3 302.4L443.1 302.7L445.9 302.5L448.7 303.1L451.5 304.1" stroke="#30d0d0" stroke-width="1.05"/><path d="M394.8 368.1L397.3 367.4L399.9 366.8L402.4 366.2L404.9 365.8L407.4 364.7" stroke="#e0c020" stroke-width="1.05"/><path d="M198.2 380.9L201.0 381.7L203.9 381.2L206.7 381.2L209.5 382.1" stroke="#4090ff" stroke-width="1.05"/><path d="M209.5 382.1L212.4 383.0L215.2 382.8L218.0 383.4" stroke="#30d0d0" stroke-width="1.05"/><path d="M377.4 367.6L380.0 367.1L382.5 367.6L385.1 367.3L387.6 366.8L390.2 366.1L392.7 365.7L395.3 364.4" stroke="#4090ff" stroke-width="1.05"/><path d="M395.3 364.4L397.8 363.7" stroke="#30d0d0" stroke-width="1.05"/><path d="M452.2 234.3L454.9 235.0L457.5 233.8L460.1 232.9L462.7 232.2L465.4 232.4L468.0 232.4L470.6 231.6L473.2 231.8" stroke="#30d0d0" stroke-width="1.05"/><path d="M311.0 269.7L313.8 269.3L316.6 270.2L319.3 269.7L322.1 270.2L324.9 270.4" stroke="#20c0e0" stroke-width="1.05"/><path d="M324.9 270.4L327.6 271.2" stroke="#20c0e0" stroke-width="1.05"/><path d="M308.6 172.1L311.4 173.2L314.3 172.8L317.1 174.2L319.9 173.8" stroke="#40e040" stroke-width="1.05"/><path d="M413.5 373.3L416.1 372.9L418.7 373.5L421.3 373.0" stroke="#40e040" stroke-width="1.05"/><path d="M421.3 373.0L423.9 373.8" stroke="#c0e030" stroke-width="1.05"/><path d="M138.3 207.2L139.5 206.7" stroke="#e0e030" stroke-width="1.0"/><path d="M137.4 351.7L138.6 351.2" stroke="#e0e030" stroke-width="1.0"/><path d="M396.4 62.3L397.6 61.8" stroke="#e0e030" stroke-width="1.0"/><path d="M413.3 200.6L414.5 200.1" stroke="#e0e030" stroke-width="1.0"/><path d="M417.7 301.2L418.9 300.7" stroke="#20c0e0" stroke-width="1.0"/><path d="M405.9 172.7L407.1 172.2" stroke="#e0e030" stroke-width="1.0"/><path d="M448.3 85.7L449.5 85.2" stroke="#e0e030" stroke-width="1.0"/><path d="M359.8 355.4L361.0 354.9" stroke="#e0e030" stroke-width="1.0"/><path d="M341.0 278.3L342.2 277.8" stroke="#20c0e0" stroke-width="1.0"/><path d="M269.1 172.0L270.3 171.5" stroke="#20c0e0" stroke-width="1.0"/><path d="M381.5 241.3L382.7 240.8" stroke="#c020d0" stroke-width="1.0"/><path d="M487.2 307.9L488.4 307.4" stroke="#20c0e0" stroke-width="1.0"/><path d="M163.6 56.7L164.8 56.2" stroke="#20c0e0" stroke-width="1.0"/><path d="M309.9 285.4L311.1 284.9" stroke="#30e040" stroke-width="1.0"/><path d="M206.9 164.1L208.1 163.6" stroke="#20c0e0" stroke-width="1.0"/><path d="M440.3 236.3L441.5 235.8" stroke="#30e040" stroke-width="1.0"/><path d="M251.4 126.7L252.6 126.2" stroke="#20c0e0" stroke-width="1.0"/><path d="M200.6 128.9L201.8 128.4" stroke="#20c0e0" stroke-width="1.0"/><path d="M251.5 168.6L252.7 168.1" stroke="#c020d0" stroke-width="1.0"/><path d="M198.0 113.2L199.2 112.7" stroke="#c020d0" stroke-width="1.0"/><path d="M194.4 270.6L195.6 270.1" stroke="#30e040" stroke-width="1.0"/><path d="M383.4 235.4L384.6 234.9" stroke="#30e040" stroke-width="1.0"/><path d="M182.9 382.9L184.1 382.4" stroke="#e0e030" stroke-width="1.0"/><path d="M379.7 91.5L380.9 91.0" stroke="#c020d0" stroke-width="1.0"/><path d="M429.5 47.2L430.7 46.7" stroke="#e0e030" stroke-width="1.0"/><path d="M412.7 90.1L413.9 89.6" stroke="#e0e030" stroke-width="1.0"/><path d="M224.2 152.7L225.4 152.2" stroke="#e0e030" stroke-width="1.0"/><path d="M332.6 103.1L333.8 102.6" stroke="#20c0e0" stroke-width="1.0"/><path d="M319.7 318.5L320.9 318.0" stroke="#c020d0" stroke-width="1.0"/><path d="M345.9 308.0L347.1 307.5" stroke="#c020d0" stroke-width="1.0"/><path d="M108.4 358.8L109.6 358.3" stroke="#e0e030" stroke-width="1.0"/><path d="M136.2 260.1L137.4 259.6" stroke="#20c0e0" stroke-width="1.0"/><path d="M409.5 167.8L410.7 167.3" stroke="#c020d0" stroke-width="1.0"/><path d="M137.8 165.9L139.0 165.4" stroke="#30e040" stroke-width="1.0"/><path d="M472.6 41.2L473.8 40.7" stroke="#20c0e0" stroke-width="1.0"/><path d="M467.6 279.4L468.8 278.9" stroke="#20c0e0" stroke-width="1.0"/><path d="M389.6 78.5L390.8 78.0" stroke="#20c0e0" stroke-width="1.0"/><path d="M444.0 58.7L445.2 58.2" stroke="#20c0e0" stroke-width="1.0"/><path d="M384.9 277.3L386.1 276.8" stroke="#c020d0" stroke-width="1.0"/><path d="M357.5 133.2L358.7 132.7" stroke="#c020d0" stroke-width="1.0"/><path d="M113.4 366.0L114.6 365.5" stroke="#c020d0" stroke-width="1.0"/><path d="M312.2 107.4L313.4 106.9" stroke="#30e040" stroke-width="1.0"/><path d="M387.8 348.6L389.0 348.1" stroke="#e0e030" stroke-width="1.0"/><path d="M447.3 206.0L448.5 205.5" stroke="#c020d0" stroke-width="1.0"/><path d="M126.0 258.3L127.2 257.8" stroke="#c020d0" stroke-width="1.0"/><path d="M311.4 151.0L312.6 150.5" stroke="#c020d0" stroke-width="1.0"/><path d="M262.7 175.3L263.9 174.8" stroke="#c020d0" stroke-width="1.0"/><path d="M123.9 47.8L125.1 47.3" stroke="#20c0e0" stroke-width="1.0"/><path d="M111.7 233.4L112.9 232.9" stroke="#e0e030" stroke-width="1.0"/><path d="M196.8 216.4L198.0 215.9" stroke="#c020d0" stroke-width="1.0"/><path d="M120.4 122.5L121.6 122.0" stroke="#30e040" stroke-width="1.0"/><path d="M204.8 42.5L206.0 42.0" stroke="#20c0e0" stroke-width="1.0"/><path d="M195.4 345.6L196.6 345.1" stroke="#e0e030" stroke-width="1.0"/><path d="M244.2 271.3L245.4 270.8" stroke="#e0e030" stroke-width="1.0"/><path d="M445.4 298.8L446.6 298.3" stroke="#20c0e0" stroke-width="1.0"/><path d="M438.3 50.9L439.5 50.4" stroke="#e0e030" stroke-width="1.0"/><path d="M282.1 376.7L283.3 376.2" stroke="#20c0e0" stroke-width="1.0"/><path d="M155.0 247.5L156.2 247.0" stroke="#e0e030" stroke-width="1.0"/><path d="M337.1 42.7L338.3 42.2" stroke="#c020d0" stroke-width="1.0"/><path d="M257.9 309.7L259.1 309.2" stroke="#30e040" stroke-width="1.0"/></g></svg><div class="a" style="left:34px;top:63px;width:8px;height:48px;background:linear-gradient(#ff0000 0%,#ff0000 30%,#ff9900 38%,#ffff00 47%,#00ee00 58%,#00e0e0 68%,#4060ff 78%,#c000ff 88%,#ff00b0 100%)"></div><div class="a" style="left:42px;top:65px;width:1.2px;height:0.8px;background:#fff"></div><div class="t" style="left:43.5px;transform:scaleY(1.35);top:64.10px;font-size:4.2px;line-height:4.2px;color:#fff;">180</div><div class="t" style="left:42px;transform:scaleY(1.35);top:108.10px;font-size:4.2px;line-height:4.2px;color:#fff;">0</div><div class="t" style="left:24px;transform:scaleY(1.35);top:114.40px;font-size:4.2px;line-height:4.2px;color:#fff;">FaultTrends#test_degree</div><svg class="a" style="left:28px;top:327px" width="44" height="44">
<defs><linearGradient id="rim" x1="0" y1="0" x2="0" y2="1"><stop offset="0" stop-color="#e02020"/><stop offset="0.5" stop-color="#d08030"/><stop offset="1" stop-color="#20a030"/></linearGradient>
<linearGradient id="arr" x1="0" y1="0" x2="1" y2="0"><stop offset="0" stop-color="#f05020"/><stop offset="0.5" stop-color="#40a868"/><stop offset="1" stop-color="#2070e0"/></linearGradient></defs>
<circle cx="21.8" cy="21.5" r="18.8" fill="#d4d4d4" stroke="url(#rim)" stroke-width="1.3"/>
<path d="M21.8 12L27.2 31L21.8 27.6L16.4 31z" fill="url(#arr)"/>
<text x="21.8" y="9.6" font-size="5.6" font-weight="bold" text-anchor="middle" fill="#202020" font-family="Liberation Sans">N</text>
<text x="21.8" y="38.6" font-size="4.8" font-weight="bold" text-anchor="middle" fill="#202020" font-family="Liberation Sans">S</text>
<text x="7.6" y="23.6" font-size="4.8" font-weight="bold" text-anchor="middle" fill="#202020" font-family="Liberation Sans">W</text>
<text x="36.4" y="23.6" font-size="4.8" font-weight="bold" text-anchor="middle" fill="#202020" font-family="Liberation Sans">E</text>
</svg><svg class="a" style="left:293px;top:33px" width="14" height="8"><path d="M1.5 0.5A5.5 5.5 0 0 0 12.5 0.5" fill="none" stroke="#d0d0d0" stroke-width="2"/></svg><svg class="a" style="left:3px;top:337px" width="7" height="48"><defs><linearGradient id="vw" x1="0" y1="0" x2="0" y2="1"><stop offset="0" stop-color="#202020"/><stop offset="0.12" stop-color="#888"/><stop offset="0.5" stop-color="#c4c4c4"/><stop offset="0.88" stop-color="#888"/><stop offset="1" stop-color="#202020"/></linearGradient></defs><rect x="0" y="0" width="7" height="48" fill="#c8c8c8"/><rect x="0.8" y="1.5" width="5.4" height="45" rx="1" fill="#303030"/><rect x="1.5" y="2.5" width="4" height="43" fill="url(#vw)"/><rect x="2" y="6" width="3" height="1" fill="#fff" fill-opacity="0.45"/><rect x="2" y="9" width="3" height="1" fill="#fff" fill-opacity="0.45"/><rect x="2" y="12" width="3" height="1" fill="#fff" fill-opacity="0.45"/><rect x="2" y="15" width="3" height="1" fill="#fff" fill-opacity="0.45"/><rect x="2" y="18" width="3" height="1" fill="#fff" fill-opacity="0.45"/><rect x="2" y="21" width="3" height="1" fill="#fff" fill-opacity="0.45"/><rect x="2" y="24" width="3" height="1" fill="#fff" fill-opacity="0.45"/><rect x="2" y="27" width="3" height="1" fill="#fff" fill-opacity="0.45"/><rect x="2" y="30" width="3" height="1" fill="#fff" fill-opacity="0.45"/><rect x="2" y="33" width="3" height="1" fill="#fff" fill-opacity="0.45"/><rect x="2" y="36" width="3" height="1" fill="#fff" fill-opacity="0.45"/><rect x="2" y="39" width="3" height="1" fill="#fff" fill-opacity="0.45"/><rect x="2" y="42" width="3" height="1" fill="#fff" fill-opacity="0.45"/></svg><svg class="a" style="left:591px;top:337px" width="7" height="48"><defs><linearGradient id="vw" x1="0" y1="0" x2="0" y2="1"><stop offset="0" stop-color="#202020"/><stop offset="0.12" stop-color="#888"/><stop offset="0.5" stop-color="#c4c4c4"/><stop offset="0.88" stop-color="#888"/><stop offset="1" stop-color="#202020"/></linearGradient></defs><rect x="0" y="0" width="7" height="48" fill="#c8c8c8"/><rect x="0.8" y="1.5" width="5.4" height="45" rx="1" fill="#303030"/><rect x="1.5" y="2.5" width="4" height="43" fill="url(#vw)"/><rect x="2" y="6" width="3" height="1" fill="#fff" fill-opacity="0.45"/><rect x="2" y="9" width="3" height="1" fill="#fff" fill-opacity="0.45"/><rect x="2" y="12" width="3" height="1" fill="#fff" fill-opacity="0.45"/><rect x="2" y="15" width="3" height="1" fill="#fff" fill-opacity="0.45"/><rect x="2" y="18" width="3" height="1" fill="#fff" fill-opacity="0.45"/><rect x="2" y="21" width="3" height="1" fill="#fff" fill-opacity="0.45"/><rect x="2" y="24" width="3" height="1" fill="#fff" fill-opacity="0.45"/><rect x="2" y="27" width="3" height="1" fill="#fff" fill-opacity="0.45"/><rect x="2" y="30" width="3" height="1" fill="#fff" fill-opacity="0.45"/><rect x="2" y="33" width="3" height="1" fill="#fff" fill-opacity="0.45"/><rect x="2" y="36" width="3" height="1" fill="#fff" fill-opacity="0.45"/><rect x="2" y="39" width="3" height="1" fill="#fff" fill-opacity="0.45"/><rect x="2" y="42" width="3" height="1" fill="#fff" fill-opacity="0.45"/></svg><svg class="a" style="left:16px;top:390px" width="46" height="6"><defs><linearGradient id="hw" x1="0" y1="0" x2="1" y2="0"><stop offset="0" stop-color="#202020"/><stop offset="0.1" stop-color="#888"/><stop offset="0.5" stop-color="#c4c4c4"/><stop offset="0.9" stop-color="#888"/><stop offset="1" stop-color="#202020"/></linearGradient></defs><rect width="46" height="6" fill="#c8c8c8"/><rect x="1.5" y="0.6" width="43" height="4.8" rx="1" fill="#303030"/><rect x="2.5" y="1.3" width="41" height="3.4" fill="url(#hw)"/><rect x="6" y="1.8" width="1" height="2.4" fill="#fff" fill-opacity="0.45"/><rect x="9" y="1.8" width="1" height="2.4" fill="#fff" fill-opacity="0.45"/><rect x="12" y="1.8" width="1" height="2.4" fill="#fff" fill-opacity="0.45"/><rect x="15" y="1.8" width="1" height="2.4" fill="#fff" fill-opacity="0.45"/><rect x="18" y="1.8" width="1" height="2.4" fill="#fff" fill-opacity="0.45"/><rect x="21" y="1.8" width="1" height="2.4" fill="#fff" fill-opacity="0.45"/><rect x="24" y="1.8" width="1" height="2.4" fill="#fff" fill-opacity="0.45"/><rect x="27" y="1.8" width="1" height="2.4" fill="#fff" fill-opacity="0.45"/><rect x="30" y="1.8" width="1" height="2.4" fill="#fff" fill-opacity="0.45"/><rect x="33" y="1.8" width="1" height="2.4" fill="#fff" fill-opacity="0.45"/><rect x="36" y="1.8" width="1" height="2.4" fill="#fff" fill-opacity="0.45"/><rect x="39" y="1.8" width="1" height="2.4" fill="#fff" fill-opacity="0.45"/></svg><div class="a" style="left:588px;top:386px;width:12px;height:12px;background:#f0f0f0"></div><div class="t" style="left:1.8px;transform:scaleY(1.0);top:390.30px;font-size:6px;line-height:6px;color:#333;font-weight:bold;-webkit-font-smoothing:antialiased;">Y</div><div class="t" style="left:10px;transform:scaleY(1.0);top:390.30px;font-size:6px;line-height:6px;color:#333;font-weight:bold;-webkit-font-smoothing:antialiased;">X</div><div class="t" style="left:584.3px;transform:scaleY(1.35);top:391.40px;font-size:5.6px;line-height:5.6px;color:#222;font-weight:bold;">Dolly</div><div class="a" style="left:600px;top:36px;width:3px;height:362px;background:linear-gradient(90deg,#e6e6e6,#d4d4d4,#ececec)"></div><div class="a" style="left:603px;top:36px;width:150px;height:362px;background:#f0f0f0"></div><div class="a" style="left:603px;top:36px;width:150px;height:9px;background:linear-gradient(#dcdcdc,#ececec 60%,#f0f0f0)"></div><div class="a" style="left:605px;top:45px;width:146px;height:11px;background:#fff;border:1px solid #d6d6d6;box-sizing:border-box"></div><svg class="a" style="left:741.5px;top:46.5px" width="8" height="8"><circle cx="4" cy="4" r="3.4" fill="#9a9a9a"/><path d="M2.6 2.6L5.4 5.4M5.4 2.6L2.6 5.4" stroke="#fff" stroke-width="0.9"/></svg><div class="a" style="left:605px;top:57px;width:146px;height:141px;background:#fff;border:1px solid #e0e0e0;box-sizing:border-box"></div><div class="a" style="left:745px;top:58px;width:6px;height:139px;background:#f0f0f0"></div><div class="a" style="left:746px;top:130px;width:4px;height:27px;background:#cdcdcd"></div><svg class="a" style="left:745px;top:59px" width="6" height="5"><path d="M1 3.5L3 1.5L5 3.5" stroke="#555" stroke-width="0.8" fill="none"/></svg><svg class="a" style="left:745px;top:191px" width="6" height="5"><path d="M1 1.5L3 3.5L5 1.5" stroke="#555" stroke-width="0.8" fill="none"/></svg><div class="t" style="left:688px;transform:translateX(-100%) scaleY(1.15);top:68.65px;font-size:4.7px;line-height:4.7px;color:#1a1a1a;">Dip &amp; Azimuth - Sm.g</div><div class="t" style="left:692px;transform:translateX(-100%) scaleY(1.15);top:96.65px;font-size:4.7px;line-height:4.7px;color:#1a1a1a;">FaultTrends#test_deg_old</div><div class="t" style="left:687px;transform:translateX(-100%) scaleY(1.15);top:110.65px;font-size:4.7px;line-height:4.7px;color:#1a1a1a;">Magnitude Filter r</div><div class="t" style="left:712px;transform:translateX(-100%) scaleY(1.15);top:117.95px;font-size:4.7px;line-height:4.7px;color:#1a1a1a;">FDR_HDR_3D_Magnitude</div><div class="t" style="left:712px;transform:translateX(-100%) scaleY(1.15);top:124.95px;font-size:4.7px;line-height:4.7px;color:#1a1a1a;">FDR_HDR_5D_Magnitude</div><div class="t" style="left:712px;transform:translateX(-100%) scaleY(1.15);top:131.95px;font-size:4.7px;line-height:4.7px;color:#1a1a1a;">FDR_HDR_7D_Magnitude</div><div class="t" style="left:689px;transform:translateX(-100%) scaleY(1.15);top:145.65px;font-size:4.7px;line-height:4.7px;color:#1a1a1a;">Structure 35</div><div class="t" style="left:690px;transform:translateX(-100%) scaleY(1.15);top:152.65px;font-size:4.7px;line-height:4.7px;color:#1a1a1a;">Intensity</div><div class="t" style="left:694px;transform:translateX(-100%) scaleY(1.15);top:159.65px;font-size:4.7px;line-height:4.7px;color:#1a1a1a;">Struct 35_v2</div><div class="t" style="left:688px;transform:translateX(-100%) scaleY(1.15);top:174.65px;font-size:4.7px;line-height:4.7px;color:#1a1a1a;font-weight:bold;">Seismic Base</div><div class="a" style="left:605px;top:198px;width:148px;height:18px;background:linear-gradient(90deg,#8cc8d4 0%,#98c8e0 55%,#a2c2e6 62%,#a4c4e8 100%)"></div><svg class="a" style="left:605px;top:198px" width="148" height="18"><path d="M97.5 0L106.5 0L122.5 18L84.5 18z" fill="#fff" fill-opacity="0.2"/></svg><div class="t" style="left:703.5px;transform:translateX(-100%) scaleY(1.2);top:205.90px;font-size:6.2px;line-height:6.2px;color:#f8fbff;text-shadow:0 0 1px rgba(0,0,0,0.5);">Colour Maps...</div><div class="a" style="left:603px;top:216px;width:150px;height:2.5px;background:#d6d6d6"></div><div class="a" style="left:603px;top:218.5px;width:150px;height:7px;background:linear-gradient(#c4c4c4,#dadada)"></div><div class="a" style="left:603px;top:234.5px;width:148px;height:162.5px;border:1px solid #d8d8d8;background:#fff;box-sizing:border-box"></div><div class="a" style="left:605px;top:238px;width:143px;height:98px;border:1px solid #e0e0e0;background:#fff;box-sizing:border-box"></div><div class="a" style="left:608px;top:243.5px;width:139px;height:8px;background:#e5e5e5;border:1px solid #c0c0c0;box-sizing:border-box"></div><div class="t" style="left:611px;transform:scaleY(1.35);top:246.80px;font-size:4.2px;line-height:4.2px;color:#444;">FaultTrends#test_degree</div><svg class="a" style="left:740px;top:245px" width="5" height="4"><path d="M0.5 0.8L2.5 2.8L4.5 0.8" stroke="#555" stroke-width="0.7" fill="none"/></svg><div class="a" style="left:608px;top:253px;width:139px;height:8px;background:linear-gradient(90deg,#ff0000 0%,#ff00ff 10%,#4848f0 21%,#40e0f0 30%,#00ff00 41%,#ffff00 51%,#ff9900 62%,#ff0000 71%,#ff0000 100%)"></div><div class="a" style="left:611px;top:265.5px;width:98px;height:1px;background:#d4d4d4"></div><div class="a" style="left:611px;top:276.5px;width:98px;height:1px;background:#d4d4d4"></div><svg class="a" style="left:611px;top:262.5px" width="6" height="8"><path d="M0.5 0.5H5.5V5.5L3 7.5L0.5 5.5z" fill="#1a74d4"/></svg><svg class="a" style="left:677px;top:273px" width="6" height="8"><path d="M0.5 0.5H5.5V5.5L3 7.5L0.5 5.5z" fill="#1a74d4"/></svg><div class="a" style="left:711px;top:262px;width:28px;height:8px;background:#fff;border:1px solid #b8b8b8;box-sizing:border-box"></div><div class="t" style="left:713px;transform:scaleY(1.35);top:264.55px;font-size:4.3px;line-height:4.3px;color:#222;">0.00%</div><div class="a" style="left:740px;top:262px;width:6px;height:8px;background:#f4f4f4;border:1px solid #c8c8c8;box-sizing:border-box"></div><svg class="a" style="left:741px;top:263px" width="4" height="6"><path d="M0.5 2.3L2 0.8L3.5 2.3zM0.5 3.7L2 5.2L3.5 3.7z" fill="#444"/></svg><div class="a" style="left:711px;top:273px;width:28px;height:8px;background:#fff;border:1px solid #b8b8b8;box-sizing:border-box"></div><div class="t" style="left:713px;transform:scaleY(1.35);top:275.55px;font-size:4.3px;line-height:4.3px;color:#222;">70.59%</div><div class="a" style="left:740px;top:273px;width:6px;height:8px;background:#f4f4f4;border:1px solid #c8c8c8;box-sizing:border-box"></div><svg class="a" style="left:741px;top:274px" width="4" height="6"><path d="M0.5 2.3L2 0.8L3.5 2.3zM0.5 3.7L2 5.2L3.5 3.7z" fill="#444"/></svg><div class="a" style="left:711px;top:284px;width:28px;height:8px;background:#fff;border:1px solid #b8b8b8;box-sizing:border-box"></div><div class="t" style="left:713px;transform:scaleY(1.35);top:286.55px;font-size:4.3px;line-height:4.3px;color:#222;">35.30%</div><div class="a" style="left:740px;top:284px;width:6px;height:8px;background:#f4f4f4;border:1px solid #c8c8c8;box-sizing:border-box"></div><svg class="a" style="left:741px;top:285px" width="4" height="6"><path d="M0.5 2.3L2 0.8L3.5 2.3zM0.5 3.7L2 5.2L3.5 3.7z" fill="#444"/></svg><div class="a" style="left:679px;top:285px;width:6px;height:6px;background:#fff;border:1px solid #7a7a7a;box-sizing:border-box"></div><div class="t" style="left:685px;transform:scaleY(1.35);top:287.15px;font-size:4.1px;line-height:4.1px;color:#222;">lock centre at:</div><div class="t" style="left:607px;transform:scaleY(1.35);top:294.05px;font-size:4.1px;line-height:4.1px;color:#222;">Minimum Value:</div><div class="t" style="left:641px;transform:scaleY(1.35);top:294.05px;font-size:4.1px;line-height:4.1px;color:#222;">0.0</div><div class="t" style="left:607px;transform:scaleY(1.35);top:301.15px;font-size:4.1px;line-height:4.1px;color:#222;">Maximum Value:</div><div class="t" style="left:641px;transform:scaleY(1.35);top:301.15px;font-size:4.1px;line-height:4.1px;color:#222;">180.0</div><div class="t" style="left:607px;transform:scaleY(1.35);top:308.45px;font-size:4.1px;line-height:4.1px;color:#222;">Centre Value:</div><div class="t" style="left:641px;transform:scaleY(1.35);top:308.45px;font-size:4.1px;line-height:4.1px;color:#222;">90.0</div><div class="t" style="left:607px;transform:scaleY(1.35);top:315.45px;font-size:4.1px;line-height:4.1px;color:#222;">Volume Min:</div><div class="t" style="left:641px;transform:scaleY(1.35);top:315.45px;font-size:4.1px;line-height:4.1px;color:#222;">0.0</div><div class="t" style="left:607px;transform:scaleY(1.35);top:322.45px;font-size:4.1px;line-height:4.1px;color:#222;">Volume Max:</div><div class="t" style="left:641px;transform:scaleY(1.35);top:322.45px;font-size:4.1px;line-height:4.1px;color:#222;">180.0</div><div class="a" style="left:659px;top:327px;width:37px;height:8px;background:#e1e1e1;border:1px solid #adadad;box-sizing:border-box"></div><div class="t" style="left:677.5px;transform:translateX(-50%) scaleY(1.35);top:330.05px;font-size:4.3px;line-height:4.3px;color:#111;">Align Colourmap</div><div class="a" style="left:661px;top:339px;width:6px;height:6px;background:#fff;border:1px solid #7a7a7a;box-sizing:border-box"></div><div class="t" style="left:667px;transform:scaleY(1.35);top:340.45px;font-size:4.5px;line-height:4.5px;color:#222;">Interpolation</div><div class="a" style="left:639px;top:346px;width:37px;height:8px;background:#e1e1e1;border:1px solid #adadad;box-sizing:border-box"></div><div class="t" style="left:657.5px;transform:translateX(-50%) scaleY(1.35);top:349.05px;font-size:4.3px;line-height:4.3px;color:#111;">Opacity ...</div><div class="a" style="left:678px;top:346px;width:38px;height:8px;background:#e1e1e1;border:1px solid #adadad;box-sizing:border-box"></div><div class="t" style="left:697.0px;transform:translateX(-50%) scaleY(1.35);top:349.05px;font-size:4.3px;line-height:4.3px;color:#111;">Voxel Pick</div><div class="a" style="left:639px;top:356px;width:37px;height:8px;background:#e1e1e1;border:1px solid #adadad;box-sizing:border-box"></div><div class="t" style="left:657.5px;transform:translateX(-50%) scaleY(1.35);top:359.05px;font-size:4.3px;line-height:4.3px;color:#111;">Extents ...</div><div class="a" style="left:603px;top:36px;width:2px;height:361px;background:#f0f0f0"></div><div class="a" style="left:603px;top:396px;width:150px;height:2px;background:#e8e8e8"></div><div class="a" style="left:0px;top:398px;width:753px;height:10px;background:#f0f0f0;border-top:1px solid #e2e2e2;box-sizing:border-box"></div><div class="a" style="left:287px;top:399px;width:1px;height:9px;background:#dadada"></div><div class="a" style="left:347px;top:399px;width:1px;height:9px;background:#dadada"></div><div class="t" style="left:1px;transform:scaleY(1.35);top:403.50px;font-size:4.4px;line-height:4.4px;color:#1a1a1a;">Inline : 309, Crossline : 12804, Time : 1880.00, World X : 176012, World Y : 7623485, Value : 0</div><div class="t" style="left:467px;transform:scaleY(1.35);top:403.47px;font-size:4.45px;line-height:4.45px;color:#1a1a1a;">FaultTrends#test_degree</div><div class="a" style="left:408px;top:36px;width:277px;height:212px;background:#f0f0f0;box-shadow:0 1px 4px rgba(0,0,0,0.18)"><div class="a" style="left:0px;top:0px;width:277px;height:12px;background:#fff"></div><div class="a" style="left:4px;top:4px;width:2px;height:4px;background:#e8506a"></div><div class="a" style="left:6px;top:4px;width:2px;height:4px;background:#f0b030"></div><div class="a" style="left:8px;top:4px;width:2px;height:4px;background:#3aa0e0"></div><div class="t" style="left:11.5px;transform:scaleY(1.3);top:4.70px;font-size:4.6px;line-height:4.6px;color:#111;">Opacity Editor</div><div class="a" style="left:229px;top:5.7px;width:6px;height:0.5px;background:#777"></div><div class="a" style="left:246.2px;top:3.4px;width:4.6px;height:4.6px;border:0.5px solid #777;box-sizing:border-box"></div><svg class="a" style="left:264px;top:3px" width="6" height="6"><path d="M0.8 0.8L5.2 5.2M5.2 0.8L0.8 5.2" stroke="#666" stroke-width="0.55"/></svg><div class="t" style="left:5.5px;transform:scaleY(1.35);top:15.65px;font-size:4.1px;line-height:4.1px;color:#222;">Histogram</div><div class="a" style="left:4.5px;top:19px;width:268px;height:178px;border:1px solid #e2e2e2;box-sizing:border-box"></div><div class="a" style="left:5px;top:20px;width:267px;height:11px;background:#fdfdfd;border-top:1px solid #dadada;border-bottom:1px solid #e2e2e2;box-sizing:border-box"></div><div class="a" style="left:5px;top:21px;width:8px;height:9px;background:#cce4f7;border:1px solid #99c8ee;box-sizing:border-box"></div><svg class="a" style="left:5.5px;top:21.5px" width="8" height="8"><path d="M1 7L3 2L4 4L5 1L7 7z" fill="#1020c0"/><path d="M1.5 6L6.5 2" stroke="#e03030" stroke-width="0.7"/></svg><svg class="a" style="left:14px;top:21.5px" width="8" height="8"><path d="M1 7L3 3L4 4L5 3L7 7z" fill="#1020c0"/><path d="M0.5 3H7.5" stroke="#e03030" stroke-width="0.8"/></svg><div class="t" style="left:25.5px;transform:scaleY(1.35);top:25.25px;font-size:4.1px;line-height:4.1px;color:#111;">Normalisation:</div><div class="a" style="left:54px;top:21.8px;width:33px;height:8px;background:#e6e6e6;border:1px solid #c4c4c4;box-sizing:border-box"></div><div class="t" style="left:55px;transform:scaleY(1.35);top:25.15px;font-size:4.3px;line-height:4.3px;color:#111;">Logarithmic</div><svg class="a" style="left:83px;top:24px" width="5" height="3"><path d="M0.5 0.3L2.5 2.3L4.5 0.3" stroke="#555" stroke-width="0.6" fill="none"/></svg><svg class="a" style="left:89px;top:21px" width="5" height="9"><path d="M1 3L2.5 1.5L4 3M1 6L2.5 7.5L4 6" stroke="#777" stroke-width="0.6" fill="none"/></svg><div class="a" style="left:97px;top:22.5px;width:28.5px;height:7px;background:#e1e1e1;border:1px solid #b4b4b4;box-sizing:border-box"></div><div class="t" style="left:112px;transform:translateX(-50%) scaleY(1.35);top:24.80px;font-size:4.6px;line-height:4.6px;color:#111;">Reset Line</div><div class="a" style="left:6px;top:32px;width:264px;height:161px;background:#fff"></div><div class="t" style="left:42px;transform:scaleY(1.35);top:43.60px;font-size:4.2px;line-height:4.2px;color:#222;">Opacity : 0.05</div><div class="t" style="left:235px;transform:translateX(-100%) scaleY(1.35);top:43.60px;font-size:4.2px;line-height:4.2px;color:#222;">Bin : 0.00 -&gt; 0.35</div><svg class="a" style="left:0;top:0" width="276" height="212"><rect x="42" y="110.0" width="1" height="63.0" fill="#a9a9f6"/><rect x="43" y="109.9" width="1" height="63.1" fill="#a9a9f6"/><rect x="44" y="110.8" width="1" height="62.2" fill="#a9a9f6"/><rect x="45" y="108.1" width="1" height="64.9" fill="#a9a9f6"/><rect x="46" y="108.0" width="1" height="65.0" fill="#a9a9f6"/><rect x="47" y="108.0" width="1" height="65.0" fill="#a9a9f6"/><rect x="48" y="105.9" width="1" height="67.1" fill="#a9a9f6"/><rect x="49" y="107.1" width="1" height="65.9" fill="#a9a9f6"/><rect x="50" y="107.3" width="1" height="65.7" fill="#a9a9f6"/><rect x="51" y="107.8" width="1" height="65.2" fill="#a9a9f6"/><rect x="52" y="104.3" width="1" height="68.7" fill="#a9a9f6"/><rect x="53" y="105.0" width="1" height="68.0" fill="#a9a9f6"/><rect x="54" y="103.7" width="1" height="69.3" fill="#a9a9f6"/><rect x="55" y="106.6" width="1" height="66.4" fill="#a9a9f6"/><rect x="56" y="105.7" width="1" height="67.3" fill="#a9a9f6"/><rect x="57" y="102.4" width="1" height="70.6" fill="#a9a9f6"/><rect x="58" y="106.2" width="1" height="66.8" fill="#a9a9f6"/><rect x="59" y="105.7" width="1" height="67.3" fill="#a9a9f6"/><rect x="60" y="103.9" width="1" height="69.1" fill="#a9a9f6"/><rect x="61" y="103.3" width="1" height="69.7" fill="#a9a9f6"/><rect x="62" y="100.8" width="1" height="72.2" fill="#a9a9f6"/><rect x="63" y="99.7" width="1" height="73.3" fill="#a9a9f6"/><rect x="64" y="101.6" width="1" height="71.4" fill="#a9a9f6"/><rect x="65" y="99.1" width="1" height="73.9" fill="#a9a9f6"/><rect x="66" y="99.3" width="1" height="73.7" fill="#a9a9f6"/><rect x="67" y="99.1" width="1" height="73.9" fill="#a9a9f6"/><rect x="68" y="98.3" width="1" height="74.7" fill="#a9a9f6"/><rect x="69" y="100.5" width="1" height="72.5" fill="#a9a9f6"/><rect x="70" y="100.6" width="1" height="72.4" fill="#a9a9f6"/><rect x="71" y="102.6" width="1" height="70.4" fill="#a9a9f6"/><rect x="72" y="101.3" width="1" height="71.7" fill="#a9a9f6"/><rect x="73" y="102.1" width="1" height="70.9" fill="#a9a9f6"/><rect x="74" y="101.6" width="1" height="71.4" fill="#a9a9f6"/><rect x="75" y="102.6" width="1" height="70.4" fill="#a9a9f6"/><rect x="76" y="101.9" width="1" height="71.1" fill="#a9a9f6"/><rect x="77" y="101.3" width="1" height="71.7" fill="#a9a9f6"/><rect x="78" y="104.7" width="1" height="68.3" fill="#a9a9f6"/><rect x="79" y="104.9" width="1" height="68.1" fill="#a9a9f6"/><rect x="80" y="104.4" width="1" height="68.6" fill="#a9a9f6"/><rect x="81" y="104.0" width="1" height="69.0" fill="#a9a9f6"/><rect x="82" y="102.4" width="1" height="70.6" fill="#a9a9f6"/><rect x="83" y="102.3" width="1" height="70.7" fill="#a9a9f6"/><rect x="84" y="102.9" width="1" height="70.1" fill="#a9a9f6"/><rect x="85" y="102.1" width="1" height="70.9" fill="#a9a9f6"/><rect x="86" y="105.6" width="1" height="67.4" fill="#a9a9f6"/><rect x="87" y="104.2" width="1" height="68.8" fill="#a9a9f6"/><rect x="88" y="106.5" width="1" height="66.5" fill="#a9a9f6"/><rect x="89" y="104.7" width="1" height="68.3" fill="#a9a9f6"/><rect x="90" y="107.5" width="1" height="65.5" fill="#a9a9f6"/><rect x="91" y="107.3" width="1" height="65.7" fill="#a9a9f6"/><rect x="92" y="103.8" width="1" height="69.2" fill="#a9a9f6"/><rect x="93" y="105.0" width="1" height="68.0" fill="#a9a9f6"/><rect x="94" y="108.4" width="1" height="64.6" fill="#a9a9f6"/><rect x="95" y="106.7" width="1" height="66.3" fill="#a9a9f6"/><rect x="96" y="109.3" width="1" height="63.7" fill="#a9a9f6"/><rect x="97" y="107.0" width="1" height="66.0" fill="#a9a9f6"/><rect x="98" y="105.8" width="1" height="67.2" fill="#a9a9f6"/><rect x="99" y="108.6" width="1" height="64.4" fill="#a9a9f6"/><rect x="100" y="109.5" width="1" height="63.5" fill="#a9a9f6"/><rect x="101" y="107.4" width="1" height="65.6" fill="#a9a9f6"/><rect x="102" y="106.8" width="1" height="66.2" fill="#a9a9f6"/><rect x="103" y="108.1" width="1" height="64.9" fill="#a9a9f6"/><rect x="104" y="111.1" width="1" height="61.9" fill="#a9a9f6"/><rect x="105" y="110.4" width="1" height="62.6" fill="#a9a9f6"/><rect x="106" y="107.7" width="1" height="65.3" fill="#a9a9f6"/><rect x="107" y="108.5" width="1" height="64.5" fill="#a9a9f6"/><rect x="108" y="108.1" width="1" height="64.9" fill="#a9a9f6"/><rect x="109" y="108.1" width="1" height="64.9" fill="#a9a9f6"/><rect x="110" y="111.6" width="1" height="61.4" fill="#a9a9f6"/><rect x="111" y="109.0" width="1" height="64.0" fill="#a9a9f6"/><rect x="112" y="110.9" width="1" height="62.1" fill="#a9a9f6"/><rect x="113" y="110.6" width="1" height="62.4" fill="#a9a9f6"/><rect x="114" y="109.7" width="1" height="63.3" fill="#a9a9f6"/><rect x="115" y="112.3" width="1" height="60.7" fill="#a9a9f6"/><rect x="116" y="109.8" width="1" height="63.2" fill="#a9a9f6"/><rect x="117" y="112.3" width="1" height="60.7" fill="#a9a9f6"/><rect x="118" y="110.1" width="1" height="62.9" fill="#a9a9f6"/><rect x="119" y="111.7" width="1" height="61.3" fill="#a9a9f6"/><rect x="120" y="111.0" width="1" height="62.0" fill="#a9a9f6"/><rect x="121" y="111.3" width="1" height="61.7" fill="#a9a9f6"/><rect x="122" y="114.6" width="1" height="58.4" fill="#a9a9f6"/><rect x="123" y="114.0" width="1" height="59.0" fill="#a9a9f6"/><rect x="124" y="111.8" width="1" height="61.2" fill="#a9a9f6"/><rect x="125" y="114.6" width="1" height="58.4" fill="#a9a9f6"/><rect x="126" y="111.7" width="1" height="61.3" fill="#a9a9f6"/><rect x="127" y="112.6" width="1" height="60.4" fill="#a9a9f6"/><rect x="128" y="114.8" width="1" height="58.2" fill="#a9a9f6"/><rect x="129" y="113.9" width="1" height="59.1" fill="#a9a9f6"/><rect x="130" y="111.6" width="1" height="61.4" fill="#a9a9f6"/><rect x="131" y="115.7" width="1" height="57.3" fill="#a9a9f6"/><rect x="132" y="112.4" width="1" height="60.6" fill="#a9a9f6"/><rect x="133" y="112.7" width="1" height="60.3" fill="#a9a9f6"/><rect x="134" y="115.1" width="1" height="57.9" fill="#a9a9f6"/><rect x="135" y="113.2" width="1" height="59.8" fill="#a9a9f6"/><rect x="136" y="113.2" width="1" height="59.8" fill="#a9a9f6"/><rect x="137" y="112.3" width="1" height="60.7" fill="#a9a9f6"/><rect x="138" y="112.1" width="1" height="60.9" fill="#a9a9f6"/><rect x="139" y="114.0" width="1" height="59.0" fill="#a9a9f6"/><rect x="140" y="112.2" width="1" height="60.8" fill="#a9a9f6"/><rect x="141" y="113.5" width="1" height="59.5" fill="#a9a9f6"/><rect x="142" y="112.1" width="1" height="60.9" fill="#a9a9f6"/><rect x="143" y="112.2" width="1" height="60.8" fill="#a9a9f6"/><rect x="144" y="114.2" width="1" height="58.8" fill="#a9a9f6"/><rect x="145" y="111.7" width="1" height="61.3" fill="#a9a9f6"/><rect x="146" y="111.8" width="1" height="61.2" fill="#a9a9f6"/><rect x="147" y="112.8" width="1" height="60.2" fill="#a9a9f6"/><rect x="148" y="109.4" width="1" height="63.6" fill="#a9a9f6"/><rect x="149" y="109.0" width="1" height="64.0" fill="#a9a9f6"/><rect x="150" y="112.1" width="1" height="60.9" fill="#a9a9f6"/><rect x="151" y="111.8" width="1" height="61.2" fill="#a9a9f6"/><rect x="152" y="109.4" width="1" height="63.6" fill="#a9a9f6"/><rect x="153" y="109.3" width="1" height="63.7" fill="#a9a9f6"/><rect x="154" y="111.9" width="1" height="61.1" fill="#a9a9f6"/><rect x="155" y="113.0" width="1" height="60.0" fill="#a9a9f6"/><rect x="156" y="109.8" width="1" height="63.2" fill="#a9a9f6"/><rect x="157" y="113.3" width="1" height="59.7" fill="#a9a9f6"/><rect x="158" y="113.2" width="1" height="59.8" fill="#a9a9f6"/><rect x="159" y="112.1" width="1" height="60.9" fill="#a9a9f6"/><rect x="160" y="111.4" width="1" height="61.6" fill="#a9a9f6"/><rect x="161" y="110.1" width="1" height="62.9" fill="#a9a9f6"/><rect x="162" y="110.0" width="1" height="63.0" fill="#a9a9f6"/><rect x="163" y="114.3" width="1" height="58.7" fill="#a9a9f6"/><rect x="164" y="111.2" width="1" height="61.8" fill="#a9a9f6"/><rect x="165" y="113.4" width="1" height="59.6" fill="#a9a9f6"/><rect x="166" y="111.6" width="1" height="61.4" fill="#a9a9f6"/><rect x="167" y="114.3" width="1" height="58.7" fill="#a9a9f6"/><rect x="168" y="113.4" width="1" height="59.6" fill="#a9a9f6"/><rect x="169" y="112.2" width="1" height="60.8" fill="#a9a9f6"/><rect x="170" y="111.8" width="1" height="61.2" fill="#a9a9f6"/><rect x="171" y="114.4" width="1" height="58.6" fill="#a9a9f6"/><rect x="172" y="111.6" width="1" height="61.4" fill="#a9a9f6"/><rect x="173" y="112.4" width="1" height="60.6" fill="#a9a9f6"/><rect x="174" y="114.1" width="1" height="58.9" fill="#a9a9f6"/><rect x="175" y="115.5" width="1" height="57.5" fill="#a9a9f6"/><rect x="176" y="114.6" width="1" height="58.4" fill="#a9a9f6"/><rect x="177" y="113.2" width="1" height="59.8" fill="#a9a9f6"/><rect x="178" y="116.2" width="1" height="56.8" fill="#a9a9f6"/><rect x="179" y="113.1" width="1" height="59.9" fill="#a9a9f6"/><rect x="180" y="112.4" width="1" height="60.6" fill="#a9a9f6"/><rect x="181" y="113.7" width="1" height="59.3" fill="#a9a9f6"/><rect x="182" y="114.6" width="1" height="58.4" fill="#a9a9f6"/><rect x="183" y="113.0" width="1" height="60.0" fill="#a9a9f6"/><rect x="184" y="113.7" width="1" height="59.3" fill="#a9a9f6"/><rect x="185" y="114.7" width="1" height="58.3" fill="#a9a9f6"/><rect x="186" y="115.8" width="1" height="57.2" fill="#a9a9f6"/><rect x="187" y="114.1" width="1" height="58.9" fill="#a9a9f6"/><rect x="188" y="115.3" width="1" height="57.7" fill="#a9a9f6"/><rect x="189" y="118.0" width="1" height="55.0" fill="#a9a9f6"/><rect x="190" y="118.6" width="1" height="54.4" fill="#a9a9f6"/><rect x="191" y="117.4" width="1" height="55.6" fill="#a9a9f6"/><rect x="192" y="117.8" width="1" height="55.2" fill="#a9a9f6"/><rect x="193" y="117.5" width="1" height="55.5" fill="#a9a9f6"/><rect x="194" y="115.7" width="1" height="57.3" fill="#a9a9f6"/><rect x="195" y="115.5" width="1" height="57.5" fill="#a9a9f6"/><rect x="196" y="115.7" width="1" height="57.3" fill="#a9a9f6"/><rect x="197" y="119.9" width="1" height="53.1" fill="#a9a9f6"/><rect x="198" y="119.2" width="1" height="53.8" fill="#a9a9f6"/><rect x="199" y="120.6" width="1" height="52.4" fill="#a9a9f6"/><rect x="200" y="116.6" width="1" height="56.4" fill="#a9a9f6"/><rect x="201" y="119.6" width="1" height="53.4" fill="#a9a9f6"/><rect x="202" y="119.2" width="1" height="53.8" fill="#a9a9f6"/><rect x="203" y="120.2" width="1" height="52.8" fill="#a9a9f6"/><rect x="204" y="118.2" width="1" height="54.8" fill="#a9a9f6"/><rect x="205" y="121.2" width="1" height="51.8" fill="#a9a9f6"/><rect x="206" y="116.9" width="1" height="56.1" fill="#a9a9f6"/><rect x="207" y="119.0" width="1" height="54.0" fill="#a9a9f6"/><rect x="208" y="119.7" width="1" height="53.3" fill="#a9a9f6"/><rect x="209" y="120.4" width="1" height="52.6" fill="#a9a9f6"/><rect x="210" y="119.5" width="1" height="53.5" fill="#a9a9f6"/><rect x="211" y="119.3" width="1" height="53.7" fill="#a9a9f6"/><rect x="212" y="119.6" width="1" height="53.4" fill="#a9a9f6"/><rect x="213" y="119.6" width="1" height="53.4" fill="#a9a9f6"/><rect x="214" y="116.6" width="1" height="56.4" fill="#a9a9f6"/><rect x="215" y="117.6" width="1" height="55.4" fill="#a9a9f6"/><rect x="216" y="118.1" width="1" height="54.9" fill="#a9a9f6"/><rect x="217" y="117.4" width="1" height="55.6" fill="#a9a9f6"/><rect x="218" y="114.9" width="1" height="58.1" fill="#a9a9f6"/><rect x="219" y="116.1" width="1" height="56.9" fill="#a9a9f6"/><rect x="220" y="115.9" width="1" height="57.1" fill="#a9a9f6"/><rect x="221" y="114.1" width="1" height="58.9" fill="#a9a9f6"/><rect x="222" y="113.8" width="1" height="59.2" fill="#a9a9f6"/><rect x="223" y="112.4" width="1" height="60.6" fill="#a9a9f6"/><rect x="224" y="113.0" width="1" height="60.0" fill="#a9a9f6"/><rect x="225" y="112.8" width="1" height="60.2" fill="#a9a9f6"/><rect x="226" y="110.2" width="1" height="62.8" fill="#a9a9f6"/><rect x="227" y="112.4" width="1" height="60.6" fill="#a9a9f6"/><rect x="228" y="113.7" width="1" height="59.3" fill="#a9a9f6"/><rect x="229" y="112.9" width="1" height="60.1" fill="#a9a9f6"/><rect x="230" y="111.9" width="1" height="61.1" fill="#a9a9f6"/><rect x="231" y="110.0" width="1" height="63.0" fill="#a9a9f6"/><rect x="232" y="111.3" width="1" height="61.7" fill="#a9a9f6"/><rect x="233" y="110.3" width="1" height="62.7" fill="#a9a9f6"/><rect x="234" y="109.3" width="1" height="63.7" fill="#a9a9f6"/><rect x="235" y="110.8" width="1" height="62.2" fill="#a9a9f6"/><rect x="43" y="108.7" width="0.8" height="64.3" fill="#7070f0" fill-opacity="0.85"/><rect x="48" y="106.2" width="0.8" height="66.8" fill="#7070f0" fill-opacity="0.85"/><rect x="53" y="105.0" width="0.8" height="68.0" fill="#7070f0" fill-opacity="0.85"/><rect x="55" y="104.9" width="0.8" height="68.1" fill="#7070f0" fill-opacity="0.85"/><rect x="61" y="102.0" width="0.8" height="71.0" fill="#7070f0" fill-opacity="0.85"/><rect x="66" y="102.1" width="0.8" height="70.9" fill="#7070f0" fill-opacity="0.85"/><rect x="70" y="100.6" width="0.8" height="72.4" fill="#7070f0" fill-opacity="0.85"/><rect x="72" y="101.5" width="0.8" height="71.5" fill="#7070f0" fill-opacity="0.85"/><rect x="75" y="103.3" width="0.8" height="69.7" fill="#7070f0" fill-opacity="0.85"/><rect x="78" y="103.3" width="0.8" height="69.7" fill="#7070f0" fill-opacity="0.85"/><rect x="81" y="104.4" width="0.8" height="68.6" fill="#7070f0" fill-opacity="0.85"/><rect x="85" y="104.8" width="0.8" height="68.2" fill="#7070f0" fill-opacity="0.85"/><rect x="88" y="105.0" width="0.8" height="68.0" fill="#7070f0" fill-opacity="0.85"/><rect x="94" y="106.3" width="0.8" height="66.7" fill="#7070f0" fill-opacity="0.85"/><rect x="100" y="108.7" width="0.8" height="64.3" fill="#7070f0" fill-opacity="0.85"/><rect x="103" y="111.1" width="0.8" height="61.9" fill="#7070f0" fill-opacity="0.85"/><rect x="107" y="109.3" width="0.8" height="63.7" fill="#7070f0" fill-opacity="0.85"/><rect x="110" y="109.8" width="0.8" height="63.2" fill="#7070f0" fill-opacity="0.85"/><rect x="113" y="111.6" width="0.8" height="61.4" fill="#7070f0" fill-opacity="0.85"/><rect x="115" y="112.8" width="0.8" height="60.2" fill="#7070f0" fill-opacity="0.85"/><rect x="118" y="113.9" width="0.8" height="59.1" fill="#7070f0" fill-opacity="0.85"/><rect x="120" y="112.8" width="0.8" height="60.2" fill="#7070f0" fill-opacity="0.85"/><rect x="123" y="115.1" width="0.8" height="57.9" fill="#7070f0" fill-opacity="0.85"/><rect x="127" y="113.4" width="0.8" height="59.6" fill="#7070f0" fill-opacity="0.85"/><rect x="132" y="114.4" width="0.8" height="58.6" fill="#7070f0" fill-opacity="0.85"/><rect x="135" y="115.6" width="0.8" height="57.4" fill="#7070f0" fill-opacity="0.85"/><rect x="140" y="113.9" width="0.8" height="59.1" fill="#7070f0" fill-opacity="0.85"/><rect x="142" y="114.8" width="0.8" height="58.2" fill="#7070f0" fill-opacity="0.85"/><rect x="145" y="114.0" width="0.8" height="59.0" fill="#7070f0" fill-opacity="0.85"/><rect x="147" y="112.6" width="0.8" height="60.4" fill="#7070f0" fill-opacity="0.85"/><rect x="150" y="111.3" width="0.8" height="61.7" fill="#7070f0" fill-opacity="0.85"/><rect x="153" y="112.0" width="0.8" height="61.0" fill="#7070f0" fill-opacity="0.85"/><rect x="158" y="110.3" width="0.8" height="62.7" fill="#7070f0" fill-opacity="0.85"/><rect x="161" y="112.3" width="0.8" height="60.7" fill="#7070f0" fill-opacity="0.85"/><rect x="164" y="111.2" width="0.8" height="61.8" fill="#7070f0" fill-opacity="0.85"/><rect x="167" y="112.5" width="0.8" height="60.5" fill="#7070f0" fill-opacity="0.85"/><rect x="170" y="115.2" width="0.8" height="57.8" fill="#7070f0" fill-opacity="0.85"/><rect x="176" y="113.3" width="0.8" height="59.7" fill="#7070f0" fill-opacity="0.85"/><rect x="178" y="115.6" width="0.8" height="57.4" fill="#7070f0" fill-opacity="0.85"/><rect x="184" y="116.4" width="0.8" height="56.6" fill="#7070f0" fill-opacity="0.85"/><rect x="187" y="118.3" width="0.8" height="54.7" fill="#7070f0" fill-opacity="0.85"/><rect x="193" y="116.7" width="0.8" height="56.3" fill="#7070f0" fill-opacity="0.85"/><rect x="197" y="117.8" width="0.8" height="55.2" fill="#7070f0" fill-opacity="0.85"/><rect x="203" y="117.9" width="0.8" height="55.1" fill="#7070f0" fill-opacity="0.85"/><rect x="207" y="119.6" width="0.8" height="53.4" fill="#7070f0" fill-opacity="0.85"/><rect x="209" y="118.0" width="0.8" height="55.0" fill="#7070f0" fill-opacity="0.85"/><rect x="212" y="120.1" width="0.8" height="52.9" fill="#7070f0" fill-opacity="0.85"/><rect x="217" y="117.3" width="0.8" height="55.7" fill="#7070f0" fill-opacity="0.85"/><rect x="222" y="114.0" width="0.8" height="59.0" fill="#7070f0" fill-opacity="0.85"/><rect x="225" y="112.7" width="0.8" height="60.3" fill="#7070f0" fill-opacity="0.85"/><rect x="231" y="112.9" width="0.8" height="60.1" fill="#7070f0" fill-opacity="0.85"/><rect x="233" y="110.3" width="0.8" height="62.7" fill="#7070f0" fill-opacity="0.85"/><rect x="123" y="100" width="0.8" height="73" fill="#ffffff" fill-opacity="0.85"/><rect x="174" y="100" width="0.8" height="73" fill="#ffffff" fill-opacity="0.85"/><rect x="194" y="100" width="0.8" height="73" fill="#ffffff" fill-opacity="0.85"/><rect x="42" y="52" width="1.2" height="121" fill="#8080f4"/><rect x="137" y="96" width="1" height="77" fill="#8a8af4"/><rect x="234" y="101" width="1" height="72" fill="#8a8af4"/><rect x="39" y="173" width="197" height="0.8" fill="#c8c8c8"/><rect x="42" y="173" width="0.8" height="3" fill="#b0b0b0"/><rect x="90" y="173" width="0.8" height="3" fill="#b0b0b0"/><rect x="138" y="173" width="0.8" height="3" fill="#b0b0b0"/><rect x="187" y="173" width="0.8" height="3" fill="#b0b0b0"/><rect x="235" y="173" width="0.8" height="3" fill="#b0b0b0"/><rect x="42" y="51.6" width="193" height="0.8" fill="#f05050"/></svg><div class="t" style="left:42px;transform:scaleY(1.35);top:182.60px;font-size:4.2px;line-height:4.2px;color:#222;">0.00</div><div class="t" style="left:235px;transform:translateX(-100%) scaleY(1.35);top:182.60px;font-size:4.2px;line-height:4.2px;color:#222;">180.71</div><div class="a" style="left:42px;top:186px;width:193px;height:3px;background:linear-gradient(90deg,#ff0000 0%,#ff00ff 16%,#5050ff 33%,#30e0ff 50%,#00ff00 66%,#ffff00 80%,#ff9900 90%,#ff0000 100%)"></div><div class="a" style="left:149px;top:202px;width:29px;height:8px;background:#e1e1e1;border:1.2px solid #3c8ddc;box-sizing:border-box"></div><div class="t" style="left:163.5px;transform:translateX(-50%) scaleY(1.35);top:204.90px;font-size:4.6px;line-height:4.6px;color:#111;">OK</div><div class="a" style="left:181px;top:202px;width:29px;height:8px;background:#e1e1e1;border:1px solid #adadad;box-sizing:border-box"></div><div class="t" style="left:195.5px;transform:translateX(-50%) scaleY(1.35);top:204.90px;font-size:4.6px;line-height:4.6px;color:#111;">Cancel</div><div class="a" style="left:213px;top:202px;width:28px;height:8px;background:#e1e1e1;border:1px solid #adadad;box-sizing:border-box"></div><div class="t" style="left:227.0px;transform:translateX(-50%) scaleY(1.35);top:204.90px;font-size:4.6px;line-height:4.6px;color:#111;">Apply</div><div class="a" style="left:244px;top:202px;width:29px;height:8px;background:#e1e1e1;border:1px solid #adadad;box-sizing:border-box"></div><div class="t" style="left:258.5px;transform:translateX(-50%) scaleY(1.35);top:204.90px;font-size:4.6px;line-height:4.6px;color:#111;">Help</div><div class="a" style="left:0px;top:0px;width:277px;height:212px;border:1px solid #78a4dc;box-sizing:border-box"></div></div><svg class="a" style="left:377px;top:314px" width="8" height="9"><path d="M2 8C1 6 0.5 4.5 1 4C1.5 3.5 2 4.5 2.5 5V1.5C2.5 0.8 3.5 0.8 3.5 1.5V4V1C3.5 0.3 4.5 0.3 4.5 1V4V1.5C4.5 0.8 5.5 0.8 5.5 1.5V4.2V2.5C5.5 1.8 6.5 1.8 6.5 2.5V5.5C6.5 7 6 8 5.5 8.5z" fill="none" stroke="#c8c8c8" stroke-width="0.7"/></svg></div>
<div class="w" style="left:761px;width:754px"><div class="a" style="left:0px;top:0px;width:754px;height:17px;background:#fff"></div><div class="a" style="left:1px;top:3px;width:2px;height:4px;background:#e8506a"></div><div class="a" style="left:3px;top:3px;width:2px;height:4px;background:#f0b030"></div><div class="a" style="left:5px;top:3px;width:2px;height:4px;background:#3aa0e0"></div><div class="t" style="left:9px;transform:scaleY(1.2);top:3.25px;font-size:4.5px;line-height:4.5px;color:#999999;">Stybarrow_CI_Demo-2017 - GeoTeric</div><div class="a" style="left:705px;top:4px;width:5px;height:0.8px;background:#b0b0b0"></div><div class="a" style="left:723.5px;top:2px;width:4px;height:4px;border:0.8px solid #b0b0b0;box-sizing:border-box"></div><svg class="a" style="left:740px;top:1.5px" width="6" height="6"><path d="M0.5 0.5L5.5 5.5M5.5 0.5L0.5 5.5" stroke="#a8a8a8" stroke-width="0.8"/></svg><div class="t" style="left:3px;transform:scaleY(1.1);top:11.10px;font-size:5px;line-height:5px;color:#4a4a4a;">File</div><div class="t" style="left:15px;transform:scaleY(1.1);top:11.10px;font-size:5px;line-height:5px;color:#4a4a4a;">Workflows</div><div class="t" style="left:44px;transform:scaleY(1.1);top:11.10px;font-size:5px;line-height:5px;color:#4a4a4a;">Tools</div><div class="t" style="left:60px;transform:scaleY(1.1);top:11.10px;font-size:5px;line-height:5px;color:#4a4a4a;">View</div><div class="t" style="left:75px;transform:scaleY(1.1);top:11.10px;font-size:5px;line-height:5px;color:#4a4a4a;">Help</div><svg class="a" style="left:0;top:17px" width="754" height="18"><defs><linearGradient id="tbg" gradientUnits="userSpaceOnUse" x1="0" y1="0" x2="753" y2="0"><stop offset="0" stop-color="#f3b29e"/><stop offset="0.2" stop-color="#f4b6a0"/><stop offset="0.355" stop-color="#f2bb90"/><stop offset="0.43" stop-color="#dcc48e"/><stop offset="0.47" stop-color="#c8c894"/><stop offset="0.53" stop-color="#aad4a8"/><stop offset="0.6" stop-color="#a0d0bc"/><stop offset="0.67" stop-color="#9cd0d4"/><stop offset="0.75" stop-color="#a8cce8"/><stop offset="1" stop-color="#b2d0f0"/></linearGradient></defs><rect width="754" height="18" fill="url(#tbg)"/><polygon points="14,0 142,0 155,18 4,18" fill="#fff" fill-opacity="0.13"/><polygon points="272,0 352,0 368,18 262,18" fill="#a06000" fill-opacity="0.03"/><polygon points="352,0 753,0 753,18 368,18" fill="#fff" fill-opacity="0.1"/></svg><div class="a" style="left:0px;top:34px;width:754px;height:2px;background:linear-gradient(#b8a8a0 0,#98a0a0 50%,#c8cccc 100%)"></div><div class="a" style="left:20px;top:18px;width:14px;height:15px;background:rgba(255,235,225,0.45);border:1px solid #c9a58a;border-right-color:#f7d8c8;border-bottom-color:#f7d8c8;box-sizing:border-box"></div><div class="a" style="left:123px;top:18px;width:14px;height:15px;background:rgba(255,235,225,0.45);border:1px solid #c9a58a;border-right-color:#f7d8c8;border-bottom-color:#f7d8c8;box-sizing:border-box"></div><svg class="a" style="left:3.5px;top:20.5px" width="11" height="11"><polygon points="5.5,0.5 10.2,3 10.2,8 5.5,10.5 0.8,8 0.8,3" fill="#3c3340" fill-opacity="0.72"/><path d="M3 3.5L5.5 5L8 3.5M5.5 5V8.5M2.5 6.5L5 6M8.5 6.5L6 6" stroke="#f0b0a0" stroke-width="0.6" fill="none" stroke-opacity="0.7"/></svg><svg class="a" style="left:21.5px;top:20.5px" width="11" height="11"><polygon points="5.5,0.8 10,3.2 10,7.8 5.5,10.2 1,7.8 1,3.2" fill="none" stroke="#3c3340" stroke-width="1.5" stroke-dasharray="2.6 1"/><rect x="3.8" y="3.8" width="3.4" height="3.4" fill="#3c3340"/></svg><svg class="a" style="left:38.2px;top:20.5px" width="11" height="11"><polygon points="5.5,0.8 10,3.2 10,7.8 5.5,10.2 1,7.8 1,3.2" fill="none" stroke="#3c3340" stroke-width="1.1" stroke-dasharray="1.6 1.2"/><path d="M3.5 3.5H7.5L5.5 5.5zM5.5 5.5V7.5M3.8 8H7.2" stroke="#3c3340" stroke-width="1.1" fill="#3c3340"/></svg><svg class="a" style="left:55px;top:20px" width="12" height="12"><polygon points="6,0.8 10.8,3.4 10.8,8.6 6,11.2 1.2,8.6 1.2,3.4" fill="none" stroke="#3c3340" stroke-width="1" stroke-dasharray="1.8 2"/><path d="M4.5 5L6 7.5L7.5 5z" fill="#3c3340"/><rect x="5" y="10" width="2" height="1.5" fill="#3c3340"/></svg><svg class="a" style="left:73px;top:20px" width="12" height="12"><path d="M1.5 1.5h4v3h-4zM1.5 5.5h3v5h-3zM5.5 5.5h2v3h-2z" fill="#3c3340"/><path d="M5 8.5L7.5 11L11 5" stroke="#3c3340" stroke-width="1.6" fill="none"/></svg><svg class="a" style="left:89px;top:19px" width="13" height="13"><rect x="1" y="4" width="11" height="8" fill="#3c3340"/><rect x="2.5" y="2.5" width="3" height="2" fill="#3c3340"/><circle cx="7" cy="8" r="2.4" fill="#f4b8a2"/><circle cx="7" cy="8" r="1.2" fill="#3c3340"/><path d="M9 3L11 0.5M10 3L12.5 1" stroke="#3c3340" stroke-width="0.7"/></svg><div class="a" style="left:107px;top:23.5px;width:12px;height:5px;border:1px solid #9a8a88;box-sizing:border-box;background:rgba(255,255,255,0.25)"></div><svg class="a" style="left:108px;top:24.5px" width="10" height="3"><path d="M1.5 3V1.5M3.5 3V1M5.5 3V1.5M7.5 3V1M9 3V1.5" stroke="#8a7a78" stroke-width="0.6"/></svg><svg class="a" style="left:124px;top:19px" width="13" height="14"><path d="M1 1L1 6L2.3 4.8L3.5 7L4.3 6.6L3.2 4.4L5 4.2z" fill="#3c3340"/><path d="M8 2L8 7L9.3 5.8L10.5 8L11.3 7.6L10.2 5.4L12 5.2z" fill="#3c3340"/><path d="M5 7.5L5 12.5L6.3 11.3L7.5 13.5L8.3 13.1L7.2 10.9L9 10.7z" fill="#3c3340"/><path d="M4 4H8M3 6L5.5 8.5M10 7L7 9" stroke="#7a6a6a" stroke-width="0.5" stroke-dasharray="1 0.8" fill="none"/></svg><svg class="a" style="left:142px;top:20px" width="12" height="12"><path d="M2 3h7v8h-7z" fill="#3c3340"/><path d="M3 5h5M3 7h5M3 9h5" stroke="#f4b8a2" stroke-width="0.6"/><circle cx="8.5" cy="3.5" r="2.6" fill="#3c3340"/></svg><svg class="a" style="left:158px;top:22px" width="8" height="8"><path d="M6 0.5V7.5L1 4z" fill="#3c3340"/></svg><svg class="a" style="left:170px;top:22px" width="10" height="8"><path d="M6 0.5V7.5L1 4z" fill="#3c3340"/><rect x="7" y="0.5" width="1.4" height="7" fill="#3c3340"/></svg><div class="a" style="left:183px;top:21px;width:17px;height:9px;background:#fff;border:1px solid #bdbdbd;box-sizing:border-box"></div><div class="t" style="left:185px;transform:scaleY(1.35);top:23.70px;font-size:5px;line-height:5px;color:#303060;">36</div><svg class="a" style="left:195px;top:24px" width="4" height="3"><path d="M0.3 0.3L2 2L3.7 0.3" stroke="#666" stroke-width="0.6" fill="none"/></svg><svg class="a" style="left:204px;top:22px" width="10" height="8"><rect x="1" y="0.5" width="1.4" height="7" fill="#3c3340"/><path d="M3.5 0.5V7.5L8.5 4z" fill="#3c3340"/></svg><svg class="a" style="left:219px;top:22px" width="8" height="8"><path d="M1.5 0.5V7.5L6.5 4z" fill="#3c3340"/></svg><svg class="a" style="left:231px;top:20px" width="11" height="11"><path d="M1 3L5 1H10V8L6 10H1z" fill="#3c3340"/><circle cx="6" cy="6" r="2" fill="#f4c0a0"/><circle cx="6" cy="6" r="1" fill="#3c3340"/></svg><svg class="a" style="left:244px;top:29px" width="4" height="3"><path d="M0 0H3.5L1.75 2z" fill="#3c3340"/></svg><div class="a" style="left:513px;top:20px;width:235px;height:12px;background:#d7d7d7;border:1px solid #9c9c9c;box-sizing:border-box"></div><svg class="a" style="left:550px;top:20px" width="6" height="12"><path d="M0 0.5L4.5 6L0 11.5" stroke="#8f8f8f" stroke-width="0.8" fill="none"/></svg><svg class="a" style="left:590px;top:20px" width="6" height="12"><path d="M0 0.5L4.5 6L0 11.5" stroke="#8f8f8f" stroke-width="0.8" fill="none"/></svg><svg class="a" style="left:629px;top:20px" width="6" height="12"><path d="M0 0.5L4.5 6L0 11.5" stroke="#8f8f8f" stroke-width="0.8" fill="none"/></svg><svg class="a" style="left:668px;top:20px" width="6" height="12"><path d="M0 0.5L4.5 6L0 11.5" stroke="#8f8f8f" stroke-width="0.8" fill="none"/></svg><svg class="a" style="left:708px;top:20px" width="6" height="12"><path d="M0 0.5L4.5 6L0 11.5" stroke="#8f8f8f" stroke-width="0.8" fill="none"/></svg><svg class="a" style="left:516px;top:21px" width="9" height="10"><circle cx="3.5" cy="3.5" r="3" fill="#e8202a"/><rect x="3" y="4" width="5" height="5.5" fill="#e8202a" stroke="#d7d7d7" stroke-width="0.6"/></svg><div class="t" style="left:527px;transform:scaleY(1.2);top:24.20px;font-size:5px;line-height:5px;color:#505050;">Condition</div><svg class="a" style="left:558px;top:21px" width="10" height="10"><rect x="0.5" y="0.5" width="7" height="7" fill="#f08030"/><rect x="2.5" y="2.5" width="7" height="7" fill="#f89a50"/><path d="M5 8L8 5" stroke="#c05010" stroke-width="0.8"/></svg><div class="t" style="left:571px;transform:scaleY(1.2);top:24.20px;font-size:5px;line-height:5px;color:#505050;">Reveal</div><svg class="a" style="left:597px;top:21px" width="11" height="10"><path d="M5.5 0L9 4H7V8H4V4H2z" fill="#28a848"/><ellipse cx="5.5" cy="8.5" rx="5" ry="1.2" fill="#28a848"/></svg><div class="t" style="left:609px;transform:scaleY(1.2);top:24.20px;font-size:5px;line-height:5px;color:#505050;">Interpret</div><svg class="a" style="left:636px;top:21px" width="9" height="10"><rect x="0" y="0" width="8.5" height="9.5" fill="#40c0e8"/><path d="M2 2h1v1h-1zM5 2h1v1h-1zM2 6h1v1h-1zM6 5h1v1h-1zM4 4h1v1h-1z" fill="#d0f0ff"/></svg><div class="t" style="left:648px;transform:scaleY(1.2);top:24.20px;font-size:5px;line-height:5px;color:#505050;">Classify</div><svg class="a" style="left:676px;top:21px" width="10" height="10"><path d="M0.5 5L4 8.5L9.5 1" stroke="#e0106a" stroke-width="2" fill="none"/></svg><div class="t" style="left:688px;transform:scaleY(1.2);top:24.20px;font-size:5px;line-height:5px;color:#505050;">Validate</div><svg class="a" style="left:714px;top:22px" width="12" height="8"><ellipse cx="4" cy="4" rx="3.2" ry="2.6" fill="none" stroke="#2070c0" stroke-width="1.4"/><ellipse cx="8" cy="4" rx="3.2" ry="2.6" fill="none" stroke="#2070c0" stroke-width="1.4"/></svg><div class="t" style="left:729px;transform:scaleY(1.2);top:24.20px;font-size:5px;line-height:5px;color:#505050;">Links</div><div class="a" style="left:0px;top:36px;width:754px;height:362px;background:#f0f0f0"></div><div class="a" style="left:0px;top:36px;width:12px;height:351px;background:#f4f4f4"></div><div class="a" style="left:12px;top:36px;width:576px;height:351px;background:#000"></div><svg class="a" style="left:0;top:0" width="600" height="390"><g fill="none" stroke-linecap="round" stroke-opacity="0.85"><path d="M381.3 350.4L383.4 347.4L384.4 344.4L386.0 341.4L388.2 338.4L390.0 335.4L392.2 332.4L393.4 329.4L395.0 326.4" stroke="#d020d0" stroke-width="0.85"/><path d="M395.0 326.4L396.4 323.4L398.1 320.4L399.9 317.4L401.0 314.4" stroke="#d020d0" stroke-width="0.85"/><path d="M401.0 314.4L402.4 311.4L403.8 308.4L406.0 305.4" stroke="#d020d0" stroke-width="0.85"/><path d="M406.0 305.4L408.1 302.4L409.4 299.4L411.5 296.4L412.9 293.4L414.8 290.4L416.1 287.4" stroke="#d020d0" stroke-width="0.85"/><path d="M417.3 284.4L419.5 281.4L420.9 278.4" stroke="#d020d0" stroke-width="0.85"/><path d="M422.4 275.4L424.8 272.4L427.1 269.4L428.6 266.4L431.0 263.4L432.9 260.4L435.0 257.4L436.5 254.4" stroke="#d020d0" stroke-width="0.85"/><path d="M436.5 254.4L438.9 251.4L441.0 248.4L443.5 245.4L445.8 242.4" stroke="#d020d0" stroke-width="0.85"/><path d="M495.7 235.1L496.4 232.1L498.3 229.1L499.1 226.1L500.7 223.1L502.4 220.1L503.2 217.1L504.9 214.1" stroke="#c818c8" stroke-width="0.85"/><path d="M504.9 214.1L506.1 211.1L507.6 208.1" stroke="#c818c8" stroke-width="0.85"/><path d="M507.6 208.1L508.4 205.1L509.3 202.1L510.3 199.1" stroke="#c818c8" stroke-width="0.85"/><path d="M510.3 199.1L512.3 196.1L513.4 193.1L515.2 190.1L517.1 187.1L519.2 184.1L520.5 181.1L521.8 178.1" stroke="#c818c8" stroke-width="0.85"/><path d="M391.8 383.3L393.1 380.3L394.3 377.3L395.6 374.3L397.6 371.3" stroke="#b820c8" stroke-width="0.85"/><path d="M399.9 368.3L401.2 365.3L402.4 362.3L404.7 359.3L406.5 356.3L408.2 353.3L409.6 350.3L411.5 347.3L413.6 344.3" stroke="#b820c8" stroke-width="0.85"/><path d="M413.6 344.3L415.3 341.3L417.0 338.3L418.2 335.3L420.4 332.3" stroke="#b820c8" stroke-width="0.85"/><path d="M420.4 332.3L421.7 329.3L423.4 326.3" stroke="#b820c8" stroke-width="0.85"/><path d="M121.3 205.3L122.6 202.3L124.3 199.3L126.5 196.3L128.4 193.3L129.9 190.3L131.4 187.3" stroke="#a81048" stroke-width="0.85"/><path d="M133.1 184.3L135.3 181.3L136.6 178.3L138.7 175.3L140.5 172.3L141.9 169.3L144.3 166.3L146.5 163.3" stroke="#a81048" stroke-width="0.85"/><path d="M468.4 356.9L469.6 353.9L471.3 350.9L472.4 347.9" stroke="#9038d8" stroke-width="0.85"/><path d="M473.8 344.9L475.6 341.9L477.3 338.9L478.5 335.9L480.5 332.9L482.1 329.9L483.7 326.9L484.6 323.9L486.1 320.9" stroke="#9038d8" stroke-width="0.85"/><path d="M486.1 320.9L487.3 317.9L489.1 314.9" stroke="#9038d8" stroke-width="0.85"/><path d="M388.9 354.0L390.4 351.0L392.2 348.0L394.2 345.0L395.7 342.0L397.7 339.0L399.6 336.0" stroke="#d020d0" stroke-width="0.85"/><path d="M399.6 336.0L400.8 333.0L402.6 330.0L404.0 327.0L405.1 324.0" stroke="#d020d0" stroke-width="0.85"/><path d="M405.1 324.0L406.4 321.0L407.8 318.0L409.1 315.0L410.4 312.0L411.4 309.0L413.0 306.0L414.4 303.0L416.1 300.0" stroke="#d020d0" stroke-width="0.85"/><path d="M417.8 297.0L419.0 294.0L421.0 291.0L421.9 288.0L423.2 285.0L424.4 282.0L425.7 279.0L426.7 276.0" stroke="#d020d0" stroke-width="0.85"/><path d="M426.7 276.0L428.5 273.0L429.7 270.0L430.5 267.0L432.0 264.0" stroke="#d020d0" stroke-width="0.85"/><path d="M432.0 264.0L432.8 261.0" stroke="#d020d0" stroke-width="0.85"/><path d="M333.1 127.4L334.2 124.4L335.0 121.4L335.8 118.4L337.3 115.4L338.4 112.4L339.2 109.4" stroke="#b820c8" stroke-width="0.85"/><path d="M340.8 106.4L341.9 103.4L343.0 100.4L344.8 97.4L345.9 94.4L347.1 91.4L348.7 88.4" stroke="#b820c8" stroke-width="0.85"/><path d="M348.7 88.4L349.8 85.4" stroke="#b820c8" stroke-width="0.85"/><path d="M107.4 379.2L109.1 376.2L110.9 373.2" stroke="#c818c8" stroke-width="0.85"/><path d="M110.9 373.2L112.7 370.2L114.2 367.2L115.9 364.2L117.1 361.2L118.8 358.2L120.9 355.2" stroke="#c818c8" stroke-width="0.85"/><path d="M120.9 355.2L122.8 352.2L124.2 349.2L125.8 346.2L128.0 343.2L129.6 340.2L131.6 337.2" stroke="#c818c8" stroke-width="0.85"/><path d="M235.1 259.7L236.4 256.7L237.0 253.7L237.9 250.7L239.1 247.7L240.8 244.7L242.5 241.7" stroke="#a81048" stroke-width="0.85"/><path d="M242.5 241.7L243.8 238.7L244.5 235.7L246.1 232.7L247.3 229.7" stroke="#a81048" stroke-width="0.85"/><path d="M247.3 229.7L248.6 226.7L250.2 223.7L251.7 220.7L253.0 217.7L254.8 214.7L256.0 211.7L257.2 208.7L259.0 205.7L260.1 202.7" stroke="#a81048" stroke-width="0.85"/><path d="M260.1 202.7L261.2 199.7L263.0 196.7L263.9 193.7L265.8 190.7" stroke="#a81048" stroke-width="0.85"/><path d="M265.8 190.7L267.4 187.7L268.8 184.7" stroke="#a81048" stroke-width="0.85"/><path d="M460.6 148.8L461.2 145.8L462.0 142.8L462.4 139.8L463.3 136.8" stroke="#a81048" stroke-width="0.85"/><path d="M463.3 136.8L464.3 133.8L464.9 130.8L465.5 127.8L466.8 124.8" stroke="#a81048" stroke-width="0.85"/><path d="M466.8 124.8L468.4 121.8L469.1 118.8L470.9 115.8L472.8 112.8" stroke="#a81048" stroke-width="0.85"/><path d="M404.0 71.7L405.1 68.7L406.7 65.7L408.5 62.7L410.4 59.7L411.4 56.7L412.7 53.7" stroke="#9038d8" stroke-width="0.85"/><path d="M413.9 50.7L415.3 47.7L416.6 44.7L418.3 41.7L419.4 38.7" stroke="#9038d8" stroke-width="0.85"/><path d="M239.8 384.7L241.9 381.7L244.2 378.7" stroke="#d020d0" stroke-width="0.85"/><path d="M245.8 375.7L247.8 372.7L249.8 369.7L251.0 366.7L253.2 363.7L254.9 360.7" stroke="#d020d0" stroke-width="0.85"/><path d="M256.2 357.7L258.1 354.7L259.7 351.7L261.8 348.7L263.2 345.7" stroke="#d020d0" stroke-width="0.85"/><path d="M263.2 345.7L265.4 342.7L267.3 339.7L269.4 336.7" stroke="#d020d0" stroke-width="0.85"/><path d="M269.4 336.7L270.9 333.7L272.8 330.7" stroke="#d020d0" stroke-width="0.85"/><path d="M272.8 330.7L274.3 327.7L275.8 324.7" stroke="#d020d0" stroke-width="0.85"/><path d="M169.9 269.4L171.5 266.4L172.9 263.4L175.0 260.4L177.2 257.4L178.6 254.4L180.1 251.4L181.4 248.4L183.2 245.4L184.3 242.4" stroke="#c818c8" stroke-width="0.85"/><path d="M184.3 242.4L186.3 239.4L188.3 236.4L189.9 233.4L191.5 230.4L192.6 227.4" stroke="#c818c8" stroke-width="0.85"/><path d="M192.6 227.4L194.6 224.4L196.5 221.4L198.2 218.4L199.2 215.4L201.3 212.4" stroke="#c818c8" stroke-width="0.85"/><path d="M201.3 212.4L202.6 209.4L204.5 206.4L205.8 203.4L206.8 200.4L207.8 197.4L209.3 194.4L211.2 191.4L212.3 188.4" stroke="#c818c8" stroke-width="0.85"/><path d="M214.2 185.4L215.5 182.4L216.9 179.4L218.1 176.4L220.2 173.4L221.2 170.4L222.9 167.4" stroke="#c818c8" stroke-width="0.85"/><path d="M222.9 167.4L224.5 164.4L226.1 161.4L227.8 158.4L229.7 155.4L231.4 152.4L233.1 149.4L234.2 146.4" stroke="#c818c8" stroke-width="0.85"/><path d="M320.8 298.0L322.1 295.0L323.1 292.0L324.5 289.0L325.8 286.0L326.4 283.0" stroke="#c818c8" stroke-width="0.85"/><path d="M326.4 283.0L327.8 280.0L328.3 277.0L329.4 274.0L330.7 271.0L332.0 268.0L333.1 265.0L334.6 262.0L335.3 259.0" stroke="#c818c8" stroke-width="0.85"/><path d="M335.3 259.0L336.9 256.0L338.1 253.0" stroke="#c818c8" stroke-width="0.85"/><path d="M358.1 123.7L359.8 120.7L361.1 117.7" stroke="#c818c8" stroke-width="0.85"/><path d="M362.9 114.7L364.6 111.7L366.6 108.7L368.7 105.7L370.9 102.7L372.8 99.7L374.3 96.7L375.9 93.7L377.3 90.7" stroke="#c818c8" stroke-width="0.85"/><path d="M377.3 90.7L379.2 87.7L381.2 84.7L383.3 81.7" stroke="#c818c8" stroke-width="0.85"/><path d="M383.3 81.7L385.4 78.7L386.5 75.7L388.4 72.7L389.8 69.7" stroke="#c818c8" stroke-width="0.85"/><path d="M389.8 69.7L391.8 66.7L392.7 63.7L394.0 60.7" stroke="#c818c8" stroke-width="0.85"/><path d="M394.0 60.7L396.1 57.7L397.2 54.7L398.2 51.7L399.2 48.7" stroke="#c818c8" stroke-width="0.85"/><path d="M399.2 48.7L401.0 45.7" stroke="#c818c8" stroke-width="0.85"/><path d="M429.7 154.1L430.8 151.1L431.8 148.1L433.0 145.1" stroke="#b820c8" stroke-width="0.85"/><path d="M433.0 145.1L434.4 142.1L436.4 139.1L438.6 136.1L440.4 133.1" stroke="#b820c8" stroke-width="0.85"/><path d="M441.7 130.1L443.2 127.1L444.7 124.1L446.1 121.1L447.2 118.1" stroke="#b820c8" stroke-width="0.85"/><path d="M467.7 224.6L468.7 221.6L470.2 218.6L471.1 215.6L471.9 212.6L473.4 209.6L474.3 206.6L475.6 203.6" stroke="#d020d0" stroke-width="0.85"/><path d="M475.6 203.6L476.9 200.6L477.6 197.6" stroke="#d020d0" stroke-width="0.85"/><path d="M478.5 194.6L480.2 191.6L481.7 188.6L482.7 185.6L483.4 182.6L485.2 179.6L486.1 176.6L487.7 173.6L488.8 170.6L490.0 167.6" stroke="#d020d0" stroke-width="0.85"/><path d="M490.0 167.6L490.9 164.6L492.6 161.6L493.7 158.6L494.9 155.6L496.5 152.6" stroke="#d020d0" stroke-width="0.85"/><path d="M129.3 227.6L130.6 224.6L132.0 221.6L133.0 218.6L134.0 215.6L135.1 212.6L135.7 209.6L136.4 206.6L137.8 203.6" stroke="#9038d8" stroke-width="0.85"/><path d="M137.8 203.6L138.4 200.6L139.7 197.6" stroke="#9038d8" stroke-width="0.85"/><path d="M139.7 197.6L141.0 194.6L142.5 191.6L143.1 188.6L144.5 185.6L145.9 182.6" stroke="#9038d8" stroke-width="0.85"/><path d="M145.9 182.6L147.1 179.6L148.4 176.6" stroke="#9038d8" stroke-width="0.85"/><path d="M148.4 176.6L149.7 173.6L151.2 170.6L152.4 167.6L154.0 164.6L155.4 161.6L157.3 158.6" stroke="#9038d8" stroke-width="0.85"/><path d="M157.3 158.6L158.7 155.6L159.5 152.6L160.5 149.6L161.7 146.6L163.7 143.6" stroke="#9038d8" stroke-width="0.85"/><path d="M163.7 143.6L164.5 140.6L166.3 137.6L167.4 134.6" stroke="#9038d8" stroke-width="0.85"/><path d="M167.4 134.6L168.6 131.6L169.5 128.6L171.3 125.6L172.9 122.6" stroke="#9038d8" stroke-width="0.85"/><path d="M584.6 237.1L585.7 234.1L587.1 231.1L588.0 228.1" stroke="#c01870" stroke-width="0.85"/><path d="M200.8 249.9L201.6 246.9L203.3 243.9L204.4 240.9" stroke="#d020d0" stroke-width="0.85"/><path d="M205.6 237.9L206.4 234.9L207.5 231.9L208.8 228.9L210.1 225.9L211.3 222.9L212.3 219.9L213.1 216.9L214.7 213.9L215.7 210.9" stroke="#d020d0" stroke-width="0.85"/><path d="M216.5 207.9L218.2 204.9L219.0 201.9L220.3 198.9L221.0 195.9L221.9 192.9L223.0 189.9L224.1 186.9" stroke="#d020d0" stroke-width="0.85"/><path d="M224.1 186.9L225.8 183.9L227.5 180.9L228.8 177.9" stroke="#d020d0" stroke-width="0.85"/><path d="M228.8 177.9L230.4 174.9L232.0 171.9L232.6 168.9" stroke="#d020d0" stroke-width="0.85"/><path d="M232.6 168.9L234.0 165.9L234.7 162.9" stroke="#d020d0" stroke-width="0.85"/><path d="M229.9 156.1L231.2 153.1L233.4 150.1L235.0 147.1" stroke="#b820c8" stroke-width="0.85"/><path d="M235.0 147.1L236.1 144.1L238.3 141.1L240.6 138.1L241.8 135.1L242.9 132.1L244.4 129.1L246.0 126.1" stroke="#b820c8" stroke-width="0.85"/><path d="M246.0 126.1L248.0 123.1L249.7 120.1L251.9 117.1" stroke="#b820c8" stroke-width="0.85"/><path d="M251.9 117.1L253.9 114.1L255.1 111.1L257.2 108.1L259.6 105.1" stroke="#b820c8" stroke-width="0.85"/><path d="M259.6 105.1L261.6 102.1L263.1 99.1" stroke="#b820c8" stroke-width="0.85"/><path d="M263.1 99.1L264.7 96.1L266.0 93.1L268.3 90.1L270.3 87.1L272.4 84.1L273.8 81.1" stroke="#b820c8" stroke-width="0.85"/><path d="M275.1 78.1L276.9 75.1L279.3 72.1L280.6 69.1L282.4 66.1L283.9 63.1L286.4 60.1L288.0 57.1L290.2 54.1L291.7 51.1" stroke="#b820c8" stroke-width="0.85"/><path d="M291.7 51.1L294.1 48.1L296.1 45.1L298.0 42.1" stroke="#b820c8" stroke-width="0.85"/><path d="M298.0 42.1L299.5 39.1" stroke="#b820c8" stroke-width="0.85"/><path d="M572.9 229.5L574.7 226.5L576.2 223.5L577.4 220.5L578.1 217.5L579.2 214.5" stroke="#d020d0" stroke-width="0.85"/><path d="M579.2 214.5L580.7 211.5L581.8 208.5L583.1 205.5L584.8 202.5L586.1 199.5L587.4 196.5L588.0 193.5" stroke="#d020d0" stroke-width="0.85"/><path d="M223.9 229.8L225.3 226.8L227.0 223.8L228.2 220.8L229.8 217.8L232.0 214.8L234.1 211.8L235.4 208.8" stroke="#d020d0" stroke-width="0.85"/><path d="M235.4 208.8L236.4 205.8L238.4 202.8L240.5 199.8L242.1 196.8" stroke="#d020d0" stroke-width="0.85"/><path d="M242.1 196.8L243.2 193.8L244.4 190.8L246.4 187.8" stroke="#d020d0" stroke-width="0.85"/><path d="M246.4 187.8L248.3 184.8L249.2 181.8L250.2 178.8" stroke="#d020d0" stroke-width="0.85"/><path d="M250.2 178.8L251.5 175.8L252.6 172.8" stroke="#d020d0" stroke-width="0.85"/><path d="M239.4 383.6L240.5 380.6L241.5 377.6L242.9 374.6L243.6 371.6L244.4 368.6L245.3 365.6" stroke="#a81048" stroke-width="0.85"/><path d="M245.3 365.6L246.3 362.6L247.9 359.6L248.9 356.6" stroke="#a81048" stroke-width="0.85"/><path d="M250.1 353.6L251.8 350.6L252.9 347.6L254.5 344.6L256.4 341.6L258.2 338.6L259.7 335.6L261.2 332.6L262.2 329.6L263.2 326.6" stroke="#a81048" stroke-width="0.85"/><path d="M263.2 326.6L265.2 323.6L266.9 320.6L268.2 317.6L269.8 314.6L271.5 311.6" stroke="#a81048" stroke-width="0.85"/><path d="M389.0 111.1L390.6 108.1L392.3 105.1L393.5 102.1L394.6 99.1L396.4 96.1L398.2 93.1L399.4 90.1" stroke="#9038d8" stroke-width="0.85"/><path d="M401.4 87.1L402.6 84.1L404.7 81.1L406.3 78.1" stroke="#9038d8" stroke-width="0.85"/><path d="M406.3 78.1L407.8 75.1L409.8 72.1L411.5 69.1L412.7 66.1L413.9 63.1L415.3 60.1L416.3 57.1L417.7 54.1L418.9 51.1" stroke="#9038d8" stroke-width="0.85"/><path d="M418.9 51.1L420.9 48.1L422.7 45.1L424.5 42.1L426.5 39.1L428.6 36.1" stroke="#9038d8" stroke-width="0.85"/><path d="M519.4 94.4L520.6 91.4L521.7 88.4L522.4 85.4L524.0 82.4" stroke="#c818c8" stroke-width="0.85"/><path d="M524.0 82.4L524.6 79.4L525.1 76.4L526.4 73.4" stroke="#c818c8" stroke-width="0.85"/><path d="M527.0 70.4L527.5 67.4L528.6 64.4L529.8 61.4L531.4 58.4L532.8 55.4L533.4 52.4L534.7 49.4L536.3 46.4" stroke="#c818c8" stroke-width="0.85"/><path d="M536.3 46.4L537.0 43.4L538.4 40.4L539.3 37.4" stroke="#c818c8" stroke-width="0.85"/><path d="M191.2 379.8L192.2 376.8L192.8 373.8L193.9 370.8L195.3 367.8L196.6 364.8L198.5 361.8" stroke="#c01870" stroke-width="0.85"/><path d="M198.5 361.8L199.5 358.8L200.6 355.8L201.7 352.8" stroke="#c01870" stroke-width="0.85"/><path d="M201.7 352.8L203.2 349.8L204.4 346.8L205.7 343.8" stroke="#c01870" stroke-width="0.85"/><path d="M205.7 343.8L207.5 340.8L208.7 337.8L210.3 334.8" stroke="#c01870" stroke-width="0.85"/><path d="M515.2 188.4L516.2 185.4L516.9 182.4L517.7 179.4L519.1 176.4L519.7 173.4L521.2 170.4L522.7 167.4L523.6 164.4" stroke="#a81048" stroke-width="0.85"/><path d="M523.6 164.4L524.4 161.4L525.3 158.4L527.0 155.4L528.0 152.4L528.6 149.4L529.3 146.4" stroke="#a81048" stroke-width="0.85"/><path d="M529.3 146.4L529.9 143.4L530.5 140.4L532.0 137.4L533.7 134.4L534.8 131.4L535.9 128.4L536.6 125.4L537.8 122.4L539.5 119.4" stroke="#a81048" stroke-width="0.85"/><path d="M539.5 119.4L540.8 116.4L542.2 113.4" stroke="#a81048" stroke-width="0.85"/><path d="M542.2 113.4L543.7 110.4L544.8 107.4L545.9 104.4L546.6 101.4" stroke="#a81048" stroke-width="0.85"/><path d="M546.6 101.4L547.8 98.4L548.7 95.4L549.7 92.4L551.2 89.4" stroke="#a81048" stroke-width="0.85"/><path d="M551.2 89.4L552.0 86.4L553.5 83.4" stroke="#a81048" stroke-width="0.85"/><path d="M356.5 102.5L358.2 99.5L360.5 96.5L362.4 93.5" stroke="#9038d8" stroke-width="0.85"/><path d="M362.4 93.5L364.1 90.5L365.6 87.5L367.7 84.5L369.1 81.5L370.8 78.5" stroke="#9038d8" stroke-width="0.85"/><path d="M370.8 78.5L372.9 75.5L374.8 72.5L376.1 69.5" stroke="#9038d8" stroke-width="0.85"/><path d="M410.1 315.6L411.8 312.6L413.0 309.6L414.1 306.6L415.9 303.6L417.4 300.6L419.0 297.6L420.4 294.6L421.8 291.6" stroke="#c01870" stroke-width="0.85"/><path d="M421.8 291.6L422.9 288.6L423.7 285.6L425.2 282.6L426.6 279.6L428.4 276.6L430.3 273.6L431.8 270.6L433.4 267.6" stroke="#c01870" stroke-width="0.85"/><path d="M433.4 267.6L435.0 264.6L436.0 261.6" stroke="#c01870" stroke-width="0.85"/><path d="M411.2 352.4L411.8 349.4L413.0 346.4L414.0 343.4L414.8 340.4L416.0 337.4L417.1 334.4L417.8 331.4" stroke="#9038d8" stroke-width="0.85"/><path d="M417.8 331.4L419.0 328.4L419.9 325.4L421.1 322.4L422.1 319.4L423.4 316.4L424.0 313.4" stroke="#9038d8" stroke-width="0.85"/><path d="M424.0 313.4L425.0 310.4L425.4 307.4L426.8 304.4" stroke="#9038d8" stroke-width="0.85"/><path d="M426.8 304.4L428.1 301.4L429.6 298.4L430.1 295.4L431.2 292.4L432.3 289.4L433.0 286.4L433.7 283.4L435.4 280.4L437.0 277.4" stroke="#9038d8" stroke-width="0.85"/><path d="M437.9 274.4L439.5 271.4L440.9 268.4" stroke="#9038d8" stroke-width="0.85"/><path d="M440.9 268.4L441.9 265.4L443.4 262.4" stroke="#9038d8" stroke-width="0.85"/><path d="M443.4 262.4L444.3 259.4L445.3 256.4L446.0 253.4L447.5 250.4" stroke="#9038d8" stroke-width="0.85"/><path d="M324.8 126.8L326.2 123.8L327.2 120.8L327.9 117.8L328.5 114.8L329.8 111.8L331.2 108.8L332.4 105.8" stroke="#9038d8" stroke-width="0.85"/><path d="M332.4 105.8L333.5 102.8L334.9 99.8L336.2 96.8" stroke="#9038d8" stroke-width="0.85"/><path d="M337.9 93.8L339.6 90.8L340.6 87.8L342.1 84.8L343.3 81.8L344.7 78.8" stroke="#9038d8" stroke-width="0.85"/><path d="M184.1 191.1L185.9 188.1L187.0 185.1L188.5 182.1L189.2 179.1L190.2 176.1L191.0 173.1" stroke="#b820c8" stroke-width="0.85"/><path d="M191.0 173.1L191.6 170.1L193.1 167.1L193.7 164.1L195.3 161.1L195.9 158.1" stroke="#b820c8" stroke-width="0.85"/><path d="M472.9 229.6L474.4 226.6L475.7 223.6L476.7 220.6L477.8 217.6L478.9 214.6L480.5 211.6" stroke="#a81048" stroke-width="0.85"/><path d="M482.2 208.6L483.3 205.6L484.7 202.6L486.6 199.6L487.9 196.6L488.9 193.6L490.5 190.6L491.9 187.6L492.9 184.6L494.2 181.6" stroke="#a81048" stroke-width="0.85"/><path d="M494.2 181.6L495.2 178.6L496.3 175.6L497.8 172.6L498.9 169.6L500.0 166.6L501.6 163.6L503.8 160.6L505.9 157.6" stroke="#a81048" stroke-width="0.85"/><path d="M505.9 157.6L507.4 154.6L509.5 151.6L510.7 148.6L512.0 145.6L513.2 142.6L514.4 139.6L516.3 136.6" stroke="#a81048" stroke-width="0.85"/><path d="M379.3 385.2L380.3 382.2L381.9 379.2L383.1 376.2L384.0 373.2L385.1 370.2L385.9 367.2" stroke="#c818c8" stroke-width="0.85"/><path d="M425.3 120.2L426.8 117.2L428.0 114.2L428.5 111.2L429.6 108.2L430.6 105.2L431.6 102.2L432.2 99.2L433.0 96.2L434.1 93.2" stroke="#9038d8" stroke-width="0.85"/><path d="M434.6 90.2L435.9 87.2L436.7 84.2" stroke="#9038d8" stroke-width="0.85"/><path d="M437.6 81.2L438.2 78.2L439.1 75.2L440.7 72.2L441.6 69.2L442.2 66.2" stroke="#9038d8" stroke-width="0.85"/><path d="M442.2 66.2L443.2 63.2L444.9 60.2L445.5 57.2L446.5 54.2L447.3 51.2L448.7 48.2" stroke="#9038d8" stroke-width="0.85"/><path d="M448.7 48.2L449.8 45.2L450.5 42.2L452.1 39.2" stroke="#9038d8" stroke-width="0.85"/><path d="M356.0 235.3L357.1 232.3L357.9 229.3" stroke="#d020d0" stroke-width="0.85"/><path d="M359.5 226.3L361.3 223.3L362.2 220.3L363.1 217.3" stroke="#d020d0" stroke-width="0.85"/><path d="M364.3 214.3L365.2 211.3L367.0 208.3" stroke="#d020d0" stroke-width="0.85"/><path d="M367.0 208.3L368.4 205.3L370.5 202.3L371.6 199.3" stroke="#d020d0" stroke-width="0.85"/><path d="M371.6 199.3L372.7 196.3" stroke="#d020d0" stroke-width="0.85"/><path d="M303.3 153.9L304.4 150.9L306.2 147.9" stroke="#a81048" stroke-width="0.85"/><path d="M307.5 144.9L308.5 141.9L309.7 138.9L310.8 135.9L311.5 132.9L312.6 129.9L314.4 126.9L316.0 123.9L316.8 120.9" stroke="#a81048" stroke-width="0.85"/><path d="M316.8 120.9L318.0 117.9L319.0 114.9L320.8 111.9L321.9 108.9L323.3 105.9L324.2 102.9" stroke="#a81048" stroke-width="0.85"/><path d="M324.2 102.9L325.4 99.9L326.7 96.9L327.7 93.9L328.6 90.9" stroke="#a81048" stroke-width="0.85"/><path d="M328.6 90.9L330.4 87.9L331.8 84.9L333.0 81.9" stroke="#a81048" stroke-width="0.85"/><path d="M218.0 104.3L219.7 101.3L221.5 98.3L223.1 95.3L225.3 92.3L227.3 89.3L228.7 86.3L230.2 83.3L231.9 80.3L233.2 77.3" stroke="#9038d8" stroke-width="0.85"/><path d="M233.2 77.3L235.3 74.3L236.4 71.3L238.0 68.3L239.3 65.3L240.9 62.3L242.0 59.3" stroke="#9038d8" stroke-width="0.85"/><path d="M242.0 59.3L243.2 56.3L245.4 53.3L247.3 50.3L248.5 47.3L250.0 44.3" stroke="#9038d8" stroke-width="0.85"/><path d="M250.0 44.3L250.9 41.3L252.0 38.3" stroke="#9038d8" stroke-width="0.85"/><path d="M413.8 109.2L415.2 106.2L417.3 103.2L419.7 100.2L421.2 97.2" stroke="#9038d8" stroke-width="0.85"/><path d="M421.2 97.2L422.7 94.2L424.6 91.2L425.7 88.2L427.7 85.2" stroke="#9038d8" stroke-width="0.85"/><path d="M427.7 85.2L428.8 82.2L430.9 79.2L432.6 76.2L434.0 73.2L435.4 70.2L436.6 67.2L438.5 64.2L440.1 61.2L441.6 58.2" stroke="#9038d8" stroke-width="0.85"/><path d="M441.6 58.2L443.3 55.2L444.8 52.2L445.9 49.2L447.8 46.2L449.3 43.2L450.1 40.2L451.2 37.2" stroke="#9038d8" stroke-width="0.85"/><path d="M234.2 169.7L235.7 166.7L237.2 163.7L238.7 160.7L240.1 157.7L242.0 154.7L244.0 151.7L244.8 148.7" stroke="#9038d8" stroke-width="0.85"/><path d="M244.8 148.7L245.6 145.7L246.6 142.7L247.6 139.7" stroke="#9038d8" stroke-width="0.85"/><path d="M249.4 136.7L250.7 133.7L252.6 130.7L254.5 127.7L256.1 124.7L257.4 121.7" stroke="#9038d8" stroke-width="0.85"/><path d="M257.4 121.7L258.5 118.7L260.1 115.7L261.8 112.7L263.7 109.7L265.4 106.7" stroke="#9038d8" stroke-width="0.85"/><path d="M265.4 106.7L267.3 103.7L269.4 100.7L270.6 97.7L272.3 94.7L273.6 91.7L275.5 88.7L276.8 85.7L278.9 82.7" stroke="#9038d8" stroke-width="0.85"/><path d="M484.3 94.3L486.6 91.3L489.1 88.3L491.4 85.3L492.7 82.3L495.1 79.3L496.8 76.3L498.7 73.3L500.2 70.3" stroke="#b820c8" stroke-width="0.85"/><path d="M500.2 70.3L502.3 67.3L503.8 64.3L505.6 61.3L507.0 58.3L508.7 55.3L510.9 52.3L512.8 49.3L514.2 46.3L515.8 43.3" stroke="#b820c8" stroke-width="0.85"/><path d="M518.0 40.3L520.2 37.3" stroke="#b820c8" stroke-width="0.85"/><path d="M324.1 254.3L325.7 251.3L326.8 248.3" stroke="#d020d0" stroke-width="0.85"/><path d="M327.7 245.3L328.6 242.3L329.9 239.3L331.2 236.3L332.7 233.3L333.4 230.3L335.0 227.3L335.7 224.3" stroke="#d020d0" stroke-width="0.85"/><path d="M335.7 224.3L337.2 221.3L338.7 218.3L339.5 215.3L340.3 212.3L341.0 209.3L342.6 206.3L344.2 203.3L345.3 200.3L346.2 197.3" stroke="#d020d0" stroke-width="0.85"/><path d="M346.2 197.3L346.9 194.3L347.5 191.3L349.0 188.3L350.1 185.3L351.8 182.3" stroke="#d020d0" stroke-width="0.85"/><path d="M351.8 182.3L353.0 179.3L354.5 176.3L355.4 173.3L356.2 170.3L356.9 167.3L358.0 164.3" stroke="#d020d0" stroke-width="0.85"/><path d="M358.0 164.3L359.5 161.3" stroke="#d020d0" stroke-width="0.85"/><path d="M483.1 168.9L484.3 165.9L485.3 162.9L486.3 159.9L487.4 156.9L488.1 153.9L489.0 150.9L489.9 147.9L491.0 144.9" stroke="#9038d8" stroke-width="0.85"/><path d="M492.7 141.9L494.6 138.9L495.8 135.9L496.9 132.9" stroke="#9038d8" stroke-width="0.85"/><path d="M496.9 132.9L498.1 129.9L499.7 126.9" stroke="#9038d8" stroke-width="0.85"/><path d="M499.7 126.9L501.1 123.9L502.1 120.9L503.6 117.9L504.8 114.9L505.9 111.9L507.8 108.9" stroke="#9038d8" stroke-width="0.85"/><path d="M508.8 105.9L510.3 102.9L512.2 99.9L513.8 96.9L515.9 93.9L517.2 90.9L519.4 87.9L520.5 84.9L522.6 81.9L524.2 78.9" stroke="#9038d8" stroke-width="0.85"/><path d="M524.2 78.9L525.3 75.9L526.7 72.9" stroke="#9038d8" stroke-width="0.85"/><path d="M302.6 383.5L304.6 380.5L305.9 377.5L307.6 374.5L309.0 371.5L309.9 368.5L311.1 365.5L312.3 362.5L313.8 359.5L315.8 356.5" stroke="#9038d8" stroke-width="0.85"/><path d="M317.0 353.5L318.4 350.5L320.2 347.5L322.2 344.5L323.7 341.5" stroke="#9038d8" stroke-width="0.85"/><path d="M323.7 341.5L325.1 338.5L327.3 335.5" stroke="#9038d8" stroke-width="0.85"/><path d="M326.2 376.0L328.6 373.0L330.9 370.0" stroke="#9038d8" stroke-width="0.85"/><path d="M330.9 370.0L333.3 367.0L335.4 364.0" stroke="#9038d8" stroke-width="0.85"/><path d="M335.4 364.0L336.7 361.0L338.3 358.0L340.3 355.0L342.6 352.0L344.6 349.0" stroke="#9038d8" stroke-width="0.85"/><path d="M345.9 346.0L347.5 343.0L349.0 340.0L350.4 337.0L351.8 334.0L353.6 331.0L355.1 328.0L356.6 325.0L358.2 322.0" stroke="#9038d8" stroke-width="0.85"/><path d="M386.0 253.7L387.2 250.7L388.3 247.7" stroke="#b820c8" stroke-width="0.85"/><path d="M389.2 244.7L391.3 241.7L393.4 238.7L394.7 235.7L396.1 232.7L397.3 229.7L399.1 226.7L400.5 223.7" stroke="#b820c8" stroke-width="0.85"/><path d="M401.6 220.7L403.5 217.7L405.4 214.7L406.3 211.7L407.6 208.7L408.7 205.7L410.3 202.7" stroke="#b820c8" stroke-width="0.85"/><path d="M410.3 202.7L411.5 199.7L412.6 196.7" stroke="#b820c8" stroke-width="0.85"/><path d="M413.7 193.7L415.2 190.7L416.5 187.7L417.8 184.7L419.3 181.7L420.6 178.7L422.4 175.7L423.6 172.7" stroke="#b820c8" stroke-width="0.85"/><path d="M423.6 172.7L425.2 169.7L427.0 166.7L428.4 163.7" stroke="#b820c8" stroke-width="0.85"/><path d="M429.7 160.7L431.3 157.7L432.7 154.7L433.6 151.7" stroke="#b820c8" stroke-width="0.85"/><path d="M572.1 144.3L574.2 141.3L576.0 138.3L577.9 135.3L579.1 132.3L581.1 129.3L582.5 126.3" stroke="#c01870" stroke-width="0.85"/><path d="M582.5 126.3L584.2 123.3L586.1 120.3L587.5 117.3" stroke="#c01870" stroke-width="0.85"/><path d="M412.5 291.2L413.5 288.2L414.1 285.2L414.8 282.2L415.8 279.2L417.2 276.2L418.6 273.2L419.8 270.2L421.4 267.2" stroke="#9038d8" stroke-width="0.85"/><path d="M421.4 267.2L422.4 264.2L423.4 261.2L425.0 258.2L426.4 255.2L427.6 252.2L429.3 249.2L430.0 246.2" stroke="#9038d8" stroke-width="0.85"/><path d="M430.0 246.2L431.4 243.2L433.1 240.2L434.8 237.2L435.8 234.2L437.5 231.2L438.8 228.2L440.7 225.2L441.8 222.2" stroke="#9038d8" stroke-width="0.85"/><path d="M156.3 293.8L157.8 290.8L160.2 287.8L162.1 284.8L164.2 281.8L165.7 278.8L167.2 275.8L168.7 272.8L170.9 269.8" stroke="#9038d8" stroke-width="0.85"/><path d="M172.2 266.8L174.2 263.8L176.2 260.8L178.0 257.8" stroke="#9038d8" stroke-width="0.85"/><path d="M527.3 169.7L529.0 166.7L530.4 163.7L532.5 160.7L534.4 157.7L536.3 154.7L537.9 151.7L539.5 148.7" stroke="#c818c8" stroke-width="0.85"/><path d="M539.5 148.7L540.9 145.7L541.9 142.7L543.7 139.7" stroke="#c818c8" stroke-width="0.85"/><path d="M543.7 139.7L544.7 136.7L546.4 133.7" stroke="#c818c8" stroke-width="0.85"/><path d="M547.2 130.7L548.9 127.7" stroke="#c818c8" stroke-width="0.85"/><path d="M321.7 71.8L322.8 68.8L324.0 65.8L325.3 62.8L326.5 59.8L328.5 56.8" stroke="#c818c8" stroke-width="0.85"/><path d="M328.5 56.8L330.0 53.8L331.5 50.8L332.6 47.8L333.5 44.8L335.3 41.8L337.1 38.8" stroke="#c818c8" stroke-width="0.85"/><path d="M163.6 384.8L165.0 381.8L167.1 378.8L168.4 375.8" stroke="#c818c8" stroke-width="0.85"/><path d="M170.2 372.8L172.3 369.8L173.9 366.8L174.9 363.8L176.2 360.8" stroke="#c818c8" stroke-width="0.85"/><path d="M176.2 360.8L177.1 357.8L178.1 354.8L179.2 351.8L180.1 348.8L181.5 345.8L182.7 342.8L183.7 339.8" stroke="#c818c8" stroke-width="0.85"/><path d="M183.7 339.8L184.5 336.8L185.2 333.8" stroke="#c818c8" stroke-width="0.85"/><path d="M185.2 333.8L185.8 330.8" stroke="#c818c8" stroke-width="0.85"/><path d="M546.8 239.4L547.9 236.4L549.2 233.4L550.4 230.4L551.9 227.4L552.7 224.4L554.1 221.4" stroke="#b820c8" stroke-width="0.85"/><path d="M554.1 221.4L555.9 218.4L557.9 215.4L559.5 212.4" stroke="#b820c8" stroke-width="0.85"/><path d="M559.5 212.4L561.1 209.4L562.6 206.4L564.6 203.4" stroke="#b820c8" stroke-width="0.85"/><path d="M564.6 203.4L566.4 200.4L567.7 197.4L569.1 194.4L571.0 191.4L572.5 188.4L574.0 185.4L575.2 182.4" stroke="#b820c8" stroke-width="0.85"/><path d="M576.8 179.4L578.2 176.4L580.1 173.4L582.1 170.4" stroke="#b820c8" stroke-width="0.85"/><path d="M582.1 170.4L584.1 167.4L586.1 164.4L587.0 161.4L587.9 158.4" stroke="#b820c8" stroke-width="0.85"/><path d="M374.0 372.3L375.8 369.3L377.0 366.3L378.0 363.3L379.8 360.3L381.5 357.3L382.3 354.3L384.1 351.3L385.1 348.3L386.7 345.3" stroke="#c818c8" stroke-width="0.85"/><path d="M386.7 345.3L387.9 342.3L388.8 339.3L389.6 336.3" stroke="#c818c8" stroke-width="0.85"/><path d="M390.6 333.3L392.1 330.3L393.2 327.3L393.9 324.3L395.2 321.3L395.9 318.3L396.8 315.3L398.1 312.3" stroke="#c818c8" stroke-width="0.85"/><path d="M398.1 312.3L399.6 309.3L400.9 306.3L402.1 303.3L403.3 300.3" stroke="#c818c8" stroke-width="0.85"/><path d="M403.3 300.3L404.8 297.3L406.0 294.3L406.6 291.3L408.1 288.3L408.9 285.3L409.4 282.3L410.6 279.3" stroke="#c818c8" stroke-width="0.85"/><path d="M108.1 96.8L109.0 93.8L110.7 90.8L112.1 87.8" stroke="#b820c8" stroke-width="0.85"/><path d="M112.8 84.8L113.9 81.8L115.7 78.8L117.5 75.8L119.4 72.8L120.9 69.8" stroke="#b820c8" stroke-width="0.85"/><path d="M122.8 66.8L124.3 63.8L125.9 60.8L126.7 57.8L128.2 54.8L129.3 51.8L131.1 48.8L132.9 45.8L134.6 42.8L135.9 39.8" stroke="#b820c8" stroke-width="0.85"/><path d="M410.0 385.2L411.5 382.2L412.6 379.2L413.8 376.2L414.6 373.2L416.1 370.2L417.6 367.2L419.0 364.2L420.1 361.2" stroke="#9038d8" stroke-width="0.85"/><path d="M420.1 361.2L421.2 358.2L422.1 355.2L423.2 352.2L424.0 349.2L425.0 346.2L426.6 343.2L428.0 340.2L428.5 337.2L429.7 334.2" stroke="#9038d8" stroke-width="0.85"/><path d="M429.7 334.2L431.0 331.2L431.8 328.2L433.2 325.2L434.6 322.2" stroke="#9038d8" stroke-width="0.85"/><path d="M259.4 214.1L261.2 211.1L263.2 208.1L264.2 205.1L265.6 202.1L266.5 199.1L268.4 196.1L269.9 193.1L271.1 190.1" stroke="#b820c8" stroke-width="0.85"/><path d="M272.9 187.1L273.7 184.1L274.7 181.1L276.3 178.1L277.4 175.1L278.5 172.1L280.3 169.1" stroke="#b820c8" stroke-width="0.85"/><path d="M280.3 169.1L281.6 166.1L282.5 163.1" stroke="#b820c8" stroke-width="0.85"/><path d="M232.2 148.6L233.1 145.6L234.2 142.6L235.0 139.6L236.3 136.6L238.0 133.6L239.7 130.6" stroke="#c818c8" stroke-width="0.85"/><path d="M240.9 127.6L242.3 124.6L243.7 121.6L245.3 118.6" stroke="#c818c8" stroke-width="0.85"/><path d="M245.3 118.6L246.8 115.6L248.0 112.6L249.2 109.6L250.6 106.6L251.3 103.6" stroke="#c818c8" stroke-width="0.85"/><path d="M251.3 103.6L252.0 100.6L253.7 97.6L255.1 94.6L255.9 91.6L257.6 88.6L258.5 85.6L260.2 82.6" stroke="#c818c8" stroke-width="0.85"/><path d="M260.9 79.6L262.2 76.6L264.1 73.6" stroke="#c818c8" stroke-width="0.85"/><path d="M264.1 73.6L265.8 70.6L267.2 67.6L268.4 64.6L270.2 61.6" stroke="#c818c8" stroke-width="0.85"/><path d="M271.2 58.6L273.1 55.6L274.9 52.6L275.8 49.6" stroke="#c818c8" stroke-width="0.85"/><path d="M275.8 49.6L276.7 46.6L278.2 43.6L279.1 40.6L279.9 37.6" stroke="#c818c8" stroke-width="0.85"/><path d="M462.9 345.6L464.9 342.6L465.8 339.6L467.7 336.6L468.8 333.6L470.1 330.6L471.1 327.6L473.1 324.6L474.5 321.6" stroke="#c01870" stroke-width="0.85"/><path d="M476.2 318.6L478.0 315.6L479.9 312.6L481.2 309.6L483.0 306.6" stroke="#c01870" stroke-width="0.85"/><path d="M483.0 306.6L484.8 303.6L486.6 300.6L488.6 297.6" stroke="#c01870" stroke-width="0.85"/><path d="M395.7 246.1L397.1 243.1L399.1 240.1" stroke="#c01870" stroke-width="0.85"/><path d="M399.1 240.1L401.0 237.1L402.8 234.1L404.6 231.1L406.3 228.1L407.4 225.1L408.9 222.1" stroke="#c01870" stroke-width="0.85"/><path d="M408.9 222.1L410.1 219.1L411.3 216.1L413.3 213.1L414.5 210.1L416.4 207.1L418.3 204.1L419.8 201.1L420.7 198.1" stroke="#c01870" stroke-width="0.85"/><path d="M421.9 195.1L423.6 192.1L425.4 189.1L426.8 186.1" stroke="#c01870" stroke-width="0.85"/><path d="M426.8 186.1L428.5 183.1L429.6 180.1L431.4 177.1L433.3 174.1" stroke="#c01870" stroke-width="0.85"/><path d="M415.3 282.3L416.8 279.3L418.3 276.3L420.5 273.3L422.7 270.3L423.9 267.3L425.9 264.3L427.8 261.3L429.2 258.3" stroke="#d020d0" stroke-width="0.85"/><path d="M429.2 258.3L431.1 255.3L432.5 252.3L434.5 249.3" stroke="#d020d0" stroke-width="0.85"/><path d="M434.5 249.3L436.2 246.3L438.0 243.3L439.2 240.3L441.3 237.3L443.6 234.3L445.6 231.3L447.1 228.3L449.0 225.3" stroke="#d020d0" stroke-width="0.85"/><path d="M450.3 222.3L452.1 219.3L453.6 216.3L455.3 213.3L456.8 210.3L458.0 207.3L459.7 204.3L461.1 201.3" stroke="#d020d0" stroke-width="0.85"/><path d="M461.1 201.3L462.5 198.3L464.1 195.3" stroke="#d020d0" stroke-width="0.85"/><path d="M464.1 195.3L465.4 192.3L466.6 189.3L468.9 186.3" stroke="#d020d0" stroke-width="0.85"/><path d="M446.1 355.5L447.0 352.5L447.7 349.5L448.5 346.5L450.2 343.5L451.2 340.5" stroke="#d020d0" stroke-width="0.85"/><path d="M452.7 337.5L454.5 334.5L456.0 331.5L457.0 328.5L458.4 325.5L459.6 322.5L461.1 319.5" stroke="#d020d0" stroke-width="0.85"/><path d="M461.1 319.5L462.7 316.5L464.8 313.5L466.7 310.5" stroke="#d020d0" stroke-width="0.85"/><path d="M325.5 80.3L327.1 77.3L328.8 74.3L330.8 71.3" stroke="#b820c8" stroke-width="0.85"/><path d="M330.8 71.3L332.6 68.3L334.2 65.3L336.1 62.3L337.6 59.3" stroke="#b820c8" stroke-width="0.85"/><path d="M337.6 59.3L339.6 56.3L341.3 53.3L343.3 50.3L344.9 47.3L346.8 44.3" stroke="#b820c8" stroke-width="0.85"/><path d="M346.8 44.3L348.2 41.3L350.0 38.3" stroke="#b820c8" stroke-width="0.85"/><path d="M163.1 379.6L164.5 376.6L165.2 373.6L166.4 370.6L167.7 367.6L168.9 364.6L170.2 361.6L171.7 358.6" stroke="#9038d8" stroke-width="0.85"/><path d="M173.3 355.6L175.0 352.6L176.0 349.6L176.7 346.6L177.9 343.6L178.6 340.6L180.0 337.6L181.3 334.6" stroke="#9038d8" stroke-width="0.85"/><path d="M282.5 123.5L283.9 120.5L285.3 117.5L286.7 114.5L289.0 111.5L290.7 108.5L292.9 105.5L295.2 102.5" stroke="#c818c8" stroke-width="0.85"/><path d="M295.2 102.5L296.8 99.5L298.7 96.5L300.0 93.5L302.2 90.5" stroke="#c818c8" stroke-width="0.85"/><path d="M304.1 87.5L305.1 84.5L306.9 81.5L308.7 78.5" stroke="#c818c8" stroke-width="0.85"/><path d="M310.4 75.5L311.4 72.5L312.8 69.5" stroke="#c818c8" stroke-width="0.85"/><path d="M313.8 66.5L315.3 63.5L316.9 60.5L318.3 57.5" stroke="#c818c8" stroke-width="0.85"/><path d="M318.3 57.5L319.8 54.5L321.1 51.5" stroke="#c818c8" stroke-width="0.85"/><path d="M322.8 48.5L324.4 45.5L325.9 42.5L327.6 39.5L329.3 36.5" stroke="#c818c8" stroke-width="0.85"/><path d="M223.5 156.1L224.9 153.1L226.8 150.1L227.7 147.1L228.6 144.1L230.4 141.1L231.4 138.1L232.8 135.1L233.9 132.1" stroke="#b820c8" stroke-width="0.85"/><path d="M233.9 132.1L235.6 129.1L237.5 126.1L238.9 123.1L239.7 120.1L240.8 117.1L242.3 114.1L243.7 111.1L244.7 108.1L245.9 105.1" stroke="#b820c8" stroke-width="0.85"/><path d="M172.1 321.3L173.0 318.3L173.7 315.3L175.0 312.3L176.5 309.3" stroke="#c818c8" stroke-width="0.85"/><path d="M176.5 309.3L177.2 306.3L178.3 303.3L180.0 300.3L181.3 297.3L182.5 294.3L183.4 291.3" stroke="#c818c8" stroke-width="0.85"/><path d="M183.4 291.3L184.4 288.3L185.9 285.3L187.7 282.3L189.3 279.3L191.2 276.3" stroke="#c818c8" stroke-width="0.85"/><path d="M191.2 276.3L192.5 273.3L193.4 270.3" stroke="#c818c8" stroke-width="0.85"/><path d="M193.4 270.3L194.6 267.3L195.9 264.3L196.8 261.3L197.7 258.3L199.7 255.3L201.7 252.3" stroke="#c818c8" stroke-width="0.85"/><path d="M473.8 100.5L475.3 97.5L476.7 94.5" stroke="#c818c8" stroke-width="0.85"/><path d="M476.7 94.5L477.7 91.5L478.3 88.5L479.6 85.5L480.1 82.5" stroke="#c818c8" stroke-width="0.85"/><path d="M481.5 79.5L482.4 76.5L483.9 73.5L484.8 70.5L486.2 67.5L487.3 64.5" stroke="#c818c8" stroke-width="0.85"/><path d="M488.1 61.5L489.2 58.5L490.3 55.5L491.1 52.5" stroke="#c818c8" stroke-width="0.85"/><path d="M491.1 52.5L492.3 49.5L493.6 46.5" stroke="#c818c8" stroke-width="0.85"/><path d="M493.6 46.5L495.0 43.5L496.1 40.5L497.4 37.5" stroke="#c818c8" stroke-width="0.85"/><path d="M110.6 384.1L111.4 381.1L112.9 378.1L113.8 375.1L115.5 372.1L116.5 369.1L118.2 366.1" stroke="#9038d8" stroke-width="0.85"/><path d="M118.2 366.1L119.1 363.1L120.2 360.1L121.5 357.1L123.2 354.1" stroke="#9038d8" stroke-width="0.85"/><path d="M124.3 351.1L125.3 348.1L126.1 345.1" stroke="#9038d8" stroke-width="0.85"/><path d="M126.1 345.1L126.9 342.1L127.8 339.1L129.3 336.1" stroke="#9038d8" stroke-width="0.85"/><path d="M129.3 336.1L130.7 333.1L131.5 330.1L132.0 327.1L132.5 324.1" stroke="#9038d8" stroke-width="0.85"/><path d="M132.5 324.1L133.8 321.1L134.7 318.1L135.7 315.1L136.3 312.1" stroke="#9038d8" stroke-width="0.85"/><path d="M423.4 357.1L424.4 354.1L425.3 351.1L426.9 348.1" stroke="#c818c8" stroke-width="0.85"/><path d="M426.9 348.1L428.7 345.1L429.8 342.1L431.2 339.1L432.6 336.1L433.8 333.1L435.6 330.1L436.8 327.1L438.6 324.1L440.0 321.1" stroke="#c818c8" stroke-width="0.85"/><path d="M440.0 321.1L441.0 318.1L443.1 315.1L444.2 312.1L445.2 309.1L446.2 306.1" stroke="#c818c8" stroke-width="0.85"/><path d="M446.2 306.1L447.6 303.1L448.6 300.1" stroke="#c818c8" stroke-width="0.85"/><path d="M449.8 297.1L452.0 294.1L453.3 291.1L455.2 288.1L456.6 285.1" stroke="#c818c8" stroke-width="0.85"/><path d="M392.5 384.5L393.9 381.5L395.7 378.5L397.9 375.5L399.6 372.5L401.6 369.5" stroke="#c01870" stroke-width="0.85"/><path d="M401.6 369.5L403.1 366.5L404.6 363.5L406.6 360.5L408.3 357.5L409.6 354.5" stroke="#c01870" stroke-width="0.85"/><path d="M411.2 351.5L413.1 348.5L414.6 345.5L415.6 342.5" stroke="#c01870" stroke-width="0.85"/><path d="M417.3 339.5L418.9 336.5L419.9 333.5L421.6 330.5L423.2 327.5L425.2 324.5L427.0 321.5L428.9 318.5" stroke="#c01870" stroke-width="0.85"/><path d="M428.9 318.5L430.9 315.5L432.3 312.5L433.9 309.5L435.7 306.5L436.6 303.5L437.4 300.5L438.6 297.5" stroke="#c01870" stroke-width="0.85"/><path d="M438.6 297.5L440.2 294.5L441.0 291.5L442.3 288.5" stroke="#c01870" stroke-width="0.85"/><path d="M443.8 285.5L444.6 282.5" stroke="#c01870" stroke-width="0.85"/><path d="M214.8 316.9L217.0 313.9L219.1 310.9L221.5 307.9L223.8 304.9L225.9 301.9L228.1 298.9L229.9 295.9" stroke="#c818c8" stroke-width="0.85"/><path d="M231.7 292.9L233.2 289.9L234.7 286.9L236.3 283.9L238.4 280.9L239.6 277.9L241.1 274.9L242.9 271.9L244.5 268.9" stroke="#c818c8" stroke-width="0.85"/><path d="M246.3 265.9L247.7 262.9L249.5 259.9L250.4 256.9L252.0 253.9L253.9 250.9L254.7 247.9L255.5 244.9L256.5 241.9" stroke="#c818c8" stroke-width="0.85"/><path d="M256.5 241.9L257.7 238.9L259.6 235.9L260.6 232.9L262.3 229.9L263.9 226.9L264.7 223.9" stroke="#c818c8" stroke-width="0.85"/><path d="M479.8 93.2L482.1 90.2L483.5 87.2" stroke="#c818c8" stroke-width="0.85"/><path d="M485.1 84.2L486.5 81.2L488.1 78.2L489.8 75.2L491.0 72.2L492.6 69.2" stroke="#c818c8" stroke-width="0.85"/><path d="M492.6 69.2L494.6 66.2L495.6 63.2L496.6 60.2" stroke="#c818c8" stroke-width="0.85"/><path d="M496.6 60.2L497.6 57.2L498.4 54.2" stroke="#c818c8" stroke-width="0.85"/><path d="M415.9 164.6L417.4 161.6L418.7 158.6L420.0 155.6L421.2 152.6L423.0 149.6L423.9 146.6L424.7 143.6L426.5 140.6" stroke="#a81048" stroke-width="0.85"/><path d="M428.1 137.6L429.8 134.6L431.7 131.6L433.5 128.6L434.4 125.6L435.6 122.6L436.4 119.6" stroke="#a81048" stroke-width="0.85"/><path d="M436.4 119.6L438.2 116.6L439.8 113.6L441.4 110.6L443.1 107.6L444.1 104.6L445.4 101.6" stroke="#a81048" stroke-width="0.85"/><path d="M447.1 98.6L448.0 95.6L448.9 92.6L450.5 89.6L451.9 86.6" stroke="#a81048" stroke-width="0.85"/><path d="M451.9 86.6L453.3 83.6L454.9 80.6L456.7 77.6L458.7 74.6L460.6 71.6L462.0 68.6L463.2 65.6" stroke="#a81048" stroke-width="0.85"/><path d="M465.2 62.6L466.1 59.6L467.7 56.6L468.9 53.6L470.3 50.6L471.8 47.6L473.1 44.6L475.2 41.6" stroke="#a81048" stroke-width="0.85"/><path d="M475.2 41.6L477.2 38.6" stroke="#a81048" stroke-width="0.85"/><path d="M299.5 302.1L301.5 299.1L302.8 296.1L304.8 293.1" stroke="#c01870" stroke-width="0.85"/><path d="M304.8 293.1L306.9 290.1L308.1 287.1L309.2 284.1L311.2 281.1L313.5 278.1" stroke="#c01870" stroke-width="0.85"/><path d="M313.5 278.1L314.8 275.1L317.1 272.1L319.2 269.1L321.1 266.1" stroke="#c01870" stroke-width="0.85"/><path d="M445.7 193.6L446.8 190.6L447.8 187.6L449.5 184.6L450.7 181.6L452.5 178.6" stroke="#a81048" stroke-width="0.85"/><path d="M452.5 178.6L453.6 175.6L454.8 172.6" stroke="#a81048" stroke-width="0.85"/><path d="M456.2 169.6L457.3 166.6L458.3 163.6L460.0 160.6L461.7 157.6L463.2 154.6" stroke="#a81048" stroke-width="0.85"/><path d="M464.9 151.6L466.6 148.6L467.3 145.6L468.0 142.6" stroke="#a81048" stroke-width="0.85"/><path d="M108.8 242.5L109.1 239.5L110.1 236.5L110.7 233.5L111.0 230.5L112.3 227.5" stroke="#9038d8" stroke-width="0.85"/><path d="M112.3 227.5L113.6 224.5L114.8 221.5L115.9 218.5L117.2 215.5L117.9 212.5L119.4 209.5L120.6 206.5L121.6 203.5" stroke="#9038d8" stroke-width="0.85"/><path d="M122.4 200.5L123.0 197.5L124.7 194.5L125.7 191.5L126.4 188.5L128.0 185.5L129.0 182.5" stroke="#9038d8" stroke-width="0.85"/><path d="M130.5 179.5L131.4 176.5L132.8 173.5L134.4 170.5" stroke="#9038d8" stroke-width="0.85"/><path d="M132.1 241.2L134.1 238.2L135.9 235.2L137.9 232.2L139.2 229.2" stroke="#9038d8" stroke-width="0.85"/><path d="M140.4 226.2L142.3 223.2L143.8 220.2" stroke="#9038d8" stroke-width="0.85"/><path d="M143.8 220.2L145.9 217.2L147.8 214.2L148.8 211.2L150.4 208.2L151.7 205.2L153.0 202.2L154.8 199.2L156.2 196.2L158.0 193.2" stroke="#9038d8" stroke-width="0.85"/><path d="M158.0 193.2L159.1 190.2L160.6 187.2L162.4 184.2L164.6 181.2L166.5 178.2" stroke="#9038d8" stroke-width="0.85"/><path d="M168.2 175.2L169.2 172.2L170.4 169.2L172.5 166.2L173.8 163.2L175.2 160.2L176.6 157.2L178.0 154.2L179.4 151.2" stroke="#9038d8" stroke-width="0.85"/><path d="M179.4 151.2L181.4 148.2L183.3 145.2L185.1 142.2L186.7 139.2" stroke="#9038d8" stroke-width="0.85"/><path d="M186.7 139.2L188.3 136.2L190.2 133.2L191.8 130.2L192.7 127.2L194.1 124.2" stroke="#9038d8" stroke-width="0.85"/><path d="M218.2 332.6L219.7 329.6L220.4 326.6L221.2 323.6L222.2 320.6L222.9 317.6" stroke="#9038d8" stroke-width="0.85"/><path d="M222.9 317.6L224.1 314.6L225.0 311.6L225.5 308.6L226.3 305.6" stroke="#9038d8" stroke-width="0.85"/><path d="M226.3 305.6L227.2 302.6L227.8 299.6L229.3 296.6L230.8 293.6L231.9 290.6" stroke="#9038d8" stroke-width="0.85"/><path d="M231.9 290.6L233.1 287.6L234.5 284.6L235.2 281.6L236.3 278.6L237.3 275.6L238.8 272.6L240.3 269.6L241.0 266.6" stroke="#9038d8" stroke-width="0.85"/><path d="M310.1 155.2L311.4 152.2L313.1 149.2L314.3 146.2" stroke="#9038d8" stroke-width="0.85"/><path d="M315.4 143.2L316.6 140.2L318.3 137.2L320.2 134.2L321.7 131.2" stroke="#9038d8" stroke-width="0.85"/><path d="M321.7 131.2L323.3 128.2L325.3 125.2L326.9 122.2L328.9 119.2L330.1 116.2L332.0 113.2L333.8 110.2" stroke="#9038d8" stroke-width="0.85"/><path d="M335.3 107.2L336.9 104.2L338.0 101.2" stroke="#9038d8" stroke-width="0.85"/><path d="M338.0 101.2L338.9 98.2L339.8 95.2L341.8 92.2L343.2 89.2L344.8 86.2L346.3 83.2L348.2 80.2L350.0 77.2L351.4 74.2" stroke="#9038d8" stroke-width="0.85"/><path d="M351.4 74.2L353.1 71.2L354.3 68.2L356.4 65.2L357.5 62.2L359.6 59.2L361.2 56.2L362.3 53.2L364.5 50.2" stroke="#9038d8" stroke-width="0.85"/><path d="M365.7 47.2L367.5 44.2L368.8 41.2L369.9 38.2" stroke="#9038d8" stroke-width="0.85"/><path d="M108.1 279.9L109.4 276.9L110.6 273.9L112.3 270.9L113.3 267.9L114.5 264.9L115.0 261.9L115.7 258.9L116.5 255.9" stroke="#9038d8" stroke-width="0.85"/><path d="M116.5 255.9L117.2 252.9L117.9 249.9" stroke="#9038d8" stroke-width="0.85"/><path d="M117.9 249.9L118.6 246.9L120.2 243.9" stroke="#9038d8" stroke-width="0.85"/><path d="M120.2 243.9L121.4 240.9L122.4 237.9L123.6 234.9L124.4 231.9" stroke="#9038d8" stroke-width="0.85"/><path d="M209.0 205.4L210.1 202.4L211.1 199.4L212.6 196.4L213.5 193.4L215.2 190.4L216.1 187.4" stroke="#d020d0" stroke-width="0.85"/><path d="M216.1 187.4L217.4 184.4L218.4 181.4L219.3 178.4L221.1 175.4L222.6 172.4L224.0 169.4L225.3 166.4" stroke="#d020d0" stroke-width="0.85"/><path d="M227.0 163.4L227.9 160.4L229.1 157.4L230.5 154.4L231.3 151.4L232.2 148.4L233.1 145.4" stroke="#d020d0" stroke-width="0.85"/><path d="M233.1 145.4L234.3 142.4L236.3 139.4" stroke="#d020d0" stroke-width="0.85"/><path d="M238.1 136.4L239.6 133.4L240.5 130.4L242.5 127.4L244.2 124.4" stroke="#d020d0" stroke-width="0.85"/><path d="M245.5 121.4L247.0 118.4L248.2 115.4L249.3 112.4L250.3 109.4" stroke="#d020d0" stroke-width="0.85"/><path d="M446.9 257.2L448.4 254.2L450.1 251.2" stroke="#c818c8" stroke-width="0.85"/><path d="M451.6 248.2L452.8 245.2L453.9 242.2" stroke="#c818c8" stroke-width="0.85"/><path d="M455.0 239.2L456.5 236.2L458.1 233.2L459.0 230.2L460.0 227.2" stroke="#c818c8" stroke-width="0.85"/><path d="M460.0 227.2L461.6 224.2L462.6 221.2L464.2 218.2" stroke="#c818c8" stroke-width="0.85"/><path d="M466.2 215.2L468.0 212.2L469.8 209.2L471.3 206.2L472.4 203.2L474.2 200.2L475.4 197.2L477.4 194.2" stroke="#c818c8" stroke-width="0.85"/><path d="M477.4 194.2L479.4 191.2L481.0 188.2L482.6 185.2L483.7 182.2L485.0 179.2L486.1 176.2L487.1 173.2" stroke="#c818c8" stroke-width="0.85"/><path d="M488.1 170.2L489.9 167.2" stroke="#c818c8" stroke-width="0.85"/><path d="M108.2 198.0L109.2 195.0L110.4 192.0L110.9 189.0L111.5 186.0" stroke="#c818c8" stroke-width="0.85"/><path d="M112.1 183.0L113.4 180.0L114.4 177.0L115.1 174.0L116.0 171.0L117.4 168.0L118.6 165.0L119.9 162.0" stroke="#c818c8" stroke-width="0.85"/><path d="M119.9 162.0L121.2 159.0L121.9 156.0L123.6 153.0L124.2 150.0L125.9 147.0L127.0 144.0L127.8 141.0L129.5 138.0L130.9 135.0" stroke="#c818c8" stroke-width="0.85"/><path d="M130.9 135.0L132.4 132.0L133.2 129.0L134.0 126.0" stroke="#c818c8" stroke-width="0.85"/><path d="M135.6 123.0L136.5 120.0L137.3 117.0L138.4 114.0" stroke="#c818c8" stroke-width="0.85"/><path d="M138.4 114.0L139.6 111.0L141.0 108.0L142.3 105.0L143.7 102.0" stroke="#c818c8" stroke-width="0.85"/><path d="M143.7 102.0L144.7 99.0L145.7 96.0L147.6 93.0L149.2 90.0L150.9 87.0L152.6 84.0L153.7 81.0L154.7 78.0" stroke="#c818c8" stroke-width="0.85"/><path d="M154.7 78.0L155.5 75.0" stroke="#c818c8" stroke-width="0.85"/><path d="M389.3 170.0L391.3 167.0L392.7 164.0L394.8 161.0L396.3 158.0L398.2 155.0" stroke="#c818c8" stroke-width="0.85"/><path d="M398.2 155.0L399.4 152.0L401.5 149.0L403.4 146.0" stroke="#c818c8" stroke-width="0.85"/><path d="M405.0 143.0L406.4 140.0L407.6 137.0" stroke="#c818c8" stroke-width="0.85"/><path d="M107.7 264.4L109.1 261.4L109.7 258.4L111.0 255.4L112.4 252.4L113.1 249.4L114.2 246.4L115.4 243.4L116.3 240.4" stroke="#c01870" stroke-width="0.85"/><path d="M116.3 240.4L117.0 237.4L117.9 234.4L119.0 231.4L120.5 228.4L122.3 225.4" stroke="#c01870" stroke-width="0.85"/><path d="M122.3 225.4L123.9 222.4L125.6 219.4L127.4 216.4L128.6 213.4L130.0 210.4L130.7 207.4L132.2 204.4L133.8 201.4" stroke="#c01870" stroke-width="0.85"/><path d="M134.9 198.4L136.3 195.4" stroke="#c01870" stroke-width="0.85"/><path d="M537.6 238.2L539.3 235.2L541.0 232.2" stroke="#a81048" stroke-width="0.85"/><path d="M541.0 232.2L542.0 229.2L543.6 226.2L545.3 223.2L546.1 220.2" stroke="#a81048" stroke-width="0.85"/><path d="M546.1 220.2L547.6 217.2L548.5 214.2L550.2 211.2L551.1 208.2L552.1 205.2" stroke="#a81048" stroke-width="0.85"/><path d="M552.1 205.2L553.4 202.2L554.6 199.2L555.6 196.2L556.9 193.2L557.8 190.2" stroke="#a81048" stroke-width="0.85"/><path d="M557.8 190.2L559.1 187.2L559.8 184.2" stroke="#a81048" stroke-width="0.85"/><path d="M559.8 184.2L561.6 181.2L562.8 178.2L564.6 175.2L566.0 172.2L567.3 169.2L568.5 166.2L570.0 163.2" stroke="#a81048" stroke-width="0.85"/><path d="M570.0 163.2L571.2 160.2" stroke="#a81048" stroke-width="0.85"/><path d="M549.1 124.4L550.6 121.4L551.8 118.4L552.6 115.4L554.2 112.4L555.2 109.4L556.8 106.4L557.8 103.4" stroke="#d020d0" stroke-width="0.85"/><path d="M557.8 103.4L558.6 100.4L560.1 97.4L561.9 94.4L563.0 91.4L563.9 88.4L565.4 85.4L567.2 82.4L568.6 79.4L569.6 76.4" stroke="#d020d0" stroke-width="0.85"/><path d="M571.0 73.4L572.0 70.4L573.6 67.4L574.6 64.4L575.7 61.4L577.1 58.4L578.7 55.4" stroke="#d020d0" stroke-width="0.85"/><path d="M580.7 52.4L582.3 49.4L583.4 46.4" stroke="#d020d0" stroke-width="0.85"/><path d="M583.4 46.4L585.4 43.4L586.6 40.4" stroke="#d020d0" stroke-width="0.85"/><path d="M317.5 225.8L318.3 222.8L319.6 219.8" stroke="#c01870" stroke-width="0.85"/><path d="M321.4 216.8L322.2 213.8L323.8 210.8L325.0 207.8L326.4 204.8L328.1 201.8L329.3 198.8" stroke="#c01870" stroke-width="0.85"/><path d="M330.2 195.8L331.9 192.8L334.0 189.8L335.5 186.8L337.6 183.8L339.3 180.8L341.1 177.8L343.0 174.8L345.0 171.8" stroke="#c01870" stroke-width="0.85"/><path d="M345.0 171.8L346.9 168.8L348.8 165.8L350.8 162.8" stroke="#c01870" stroke-width="0.85"/><path d="M277.3 383.4L278.5 380.4L279.4 377.4L281.1 374.4L282.2 371.4L283.7 368.4L285.3 365.4L286.3 362.4" stroke="#d020d0" stroke-width="0.85"/><path d="M287.7 359.4L288.7 356.4L290.0 353.4L290.8 350.4L292.4 347.4L293.7 344.4L294.8 341.4" stroke="#d020d0" stroke-width="0.85"/><path d="M296.1 338.4L297.7 335.4" stroke="#d020d0" stroke-width="0.85"/><path d="M353.4 329.2L354.9 326.2L356.3 323.2L357.7 320.2L359.3 317.2L361.1 314.2" stroke="#c01870" stroke-width="0.85"/><path d="M361.1 314.2L362.4 311.2L363.4 308.2L365.4 305.2L366.7 302.2L367.7 299.2L368.7 296.2L370.3 293.2" stroke="#c01870" stroke-width="0.85"/><path d="M371.4 290.2L373.4 287.2L374.8 284.2L376.7 281.2L378.8 278.2L380.3 275.2L381.3 272.2L383.2 269.2L384.2 266.2" stroke="#c01870" stroke-width="0.85"/><path d="M386.2 263.2L387.2 260.2L388.3 257.2L389.4 254.2L391.6 251.2L392.9 248.2L395.0 245.2" stroke="#c01870" stroke-width="0.85"/><path d="M395.0 245.2L397.1 242.2L399.1 239.2L400.4 236.2L402.4 233.2L404.3 230.2L406.2 227.2L408.2 224.2" stroke="#c01870" stroke-width="0.85"/><path d="M339.0 237.1L340.1 234.1L341.0 231.1L341.6 228.1L342.7 225.1L343.7 222.1L345.0 219.1L346.4 216.1L347.4 213.1L349.0 210.1" stroke="#9038d8" stroke-width="0.85"/><path d="M349.0 210.1L350.8 207.1L352.4 204.1L353.5 201.1" stroke="#9038d8" stroke-width="0.85"/><path d="M266.2 207.4L266.9 204.4L268.4 201.4L269.3 198.4L270.0 195.4L271.3 192.4L272.6 189.4L274.2 186.4" stroke="#a81048" stroke-width="0.85"/><path d="M275.5 183.4L277.1 180.4L278.5 177.4L280.1 174.4L281.6 171.4L282.8 168.4L283.4 165.4L284.6 162.4" stroke="#a81048" stroke-width="0.85"/><path d="M566.7 184.2L567.8 181.2L569.4 178.2L570.4 175.2L571.8 172.2L572.4 169.2" stroke="#9038d8" stroke-width="0.85"/><path d="M572.4 169.2L574.0 166.2L574.6 163.2L575.4 160.2L577.1 157.2L577.7 154.2L579.5 151.2" stroke="#9038d8" stroke-width="0.85"/><path d="M579.5 151.2L581.2 148.2L581.9 145.2" stroke="#9038d8" stroke-width="0.85"/><path d="M581.9 145.2L583.0 142.2L584.6 139.2L586.5 136.2L587.8 133.2" stroke="#9038d8" stroke-width="0.85"/><path d="M472.5 385.0L474.0 382.0L475.1 379.0L476.8 376.0L478.5 373.0L479.7 370.0L481.1 367.0" stroke="#c01870" stroke-width="0.85"/><path d="M481.1 367.0L482.6 364.0L484.1 361.0L485.6 358.0L486.5 355.0L488.0 352.0" stroke="#c01870" stroke-width="0.85"/><path d="M568.9 237.6L570.3 234.6L571.4 231.6L573.1 228.6L574.3 225.6" stroke="#a81048" stroke-width="0.85"/><path d="M195.8 385.0L197.7 382.0L199.0 379.0" stroke="#d020d0" stroke-width="0.85"/><path d="M199.0 379.0L200.6 376.0L202.0 373.0L203.8 370.0L206.0 367.0L207.8 364.0" stroke="#d020d0" stroke-width="0.85"/><path d="M207.8 364.0L209.9 361.0L212.0 358.0L213.1 355.0L214.3 352.0L216.4 349.0L218.1 346.0L219.8 343.0" stroke="#d020d0" stroke-width="0.85"/><path d="M221.9 340.0L223.3 337.0L225.0 334.0L227.0 331.0L229.0 328.0L230.2 325.0" stroke="#d020d0" stroke-width="0.85"/><path d="M107.7 344.2L109.8 341.2L111.5 338.2L113.1 335.2" stroke="#b820c8" stroke-width="0.85"/><path d="M113.1 335.2L114.3 332.2L115.8 329.2L117.1 326.2" stroke="#b820c8" stroke-width="0.85"/><path d="M117.1 326.2L118.9 323.2L120.7 320.2L122.4 317.2L123.8 314.2L125.6 311.2" stroke="#b820c8" stroke-width="0.85"/><path d="M125.6 311.2L127.2 308.2L129.6 305.2L131.7 302.2L133.1 299.2" stroke="#b820c8" stroke-width="0.85"/><path d="M275.3 281.9L276.1 278.9L277.2 275.9L278.0 272.9L279.4 269.9L280.7 266.9L281.7 263.9L282.9 260.9L283.6 257.9L285.5 254.9" stroke="#d020d0" stroke-width="0.85"/><path d="M285.5 254.9L287.3 251.9L288.4 248.9L290.3 245.9L292.0 242.9L293.3 239.9" stroke="#d020d0" stroke-width="0.85"/><path d="M293.3 239.9L294.4 236.9L296.0 233.9L297.8 230.9L299.5 227.9" stroke="#d020d0" stroke-width="0.85"/><path d="M299.5 227.9L300.8 224.9L302.6 221.9L303.6 218.9L305.3 215.9L307.2 212.9L308.0 209.9" stroke="#d020d0" stroke-width="0.85"/><path d="M308.0 209.9L309.0 206.9L310.5 203.9L312.1 200.9L313.0 197.9" stroke="#d020d0" stroke-width="0.85"/><path d="M313.0 197.9L313.8 194.9L315.7 191.9L317.7 188.9L319.5 185.9L320.4 182.9L322.0 179.9" stroke="#d020d0" stroke-width="0.85"/><path d="M427.8 300.4L429.3 297.4L430.8 294.4L432.6 291.4L434.2 288.4L435.4 285.4L436.9 282.4L438.4 279.4L440.0 276.4" stroke="#b820c8" stroke-width="0.85"/><path d="M440.0 276.4L441.5 273.4L443.1 270.4L444.8 267.4L446.2 264.4L447.4 261.4L449.6 258.4L451.6 255.4" stroke="#b820c8" stroke-width="0.85"/><path d="M451.6 255.4L453.0 252.4L455.0 249.4L457.0 246.4L458.5 243.4L459.9 240.4L461.3 237.4" stroke="#b820c8" stroke-width="0.85"/><path d="M461.3 237.4L462.4 234.4L463.8 231.4L466.1 228.4L468.4 225.4L470.3 222.4" stroke="#b820c8" stroke-width="0.85"/><path d="M470.3 222.4L472.6 219.4L473.9 216.4L475.7 213.4L478.1 210.4L479.6 207.4" stroke="#b820c8" stroke-width="0.85"/><path d="M479.6 207.4L480.9 204.4L483.2 201.4L485.2 198.4L487.6 195.4L489.0 192.4L491.2 189.4" stroke="#b820c8" stroke-width="0.85"/><path d="M491.2 189.4L493.2 186.4L495.6 183.4L497.3 180.4" stroke="#b820c8" stroke-width="0.85"/><path d="M498.6 177.4L500.7 174.4" stroke="#b820c8" stroke-width="0.85"/><path d="M261.7 297.4L262.3 294.4L263.0 291.4L263.7 288.4" stroke="#c818c8" stroke-width="0.85"/><path d="M263.7 288.4L264.7 285.4L266.2 282.4" stroke="#c818c8" stroke-width="0.85"/><path d="M267.9 279.4L268.9 276.4L270.4 273.4" stroke="#c818c8" stroke-width="0.85"/><path d="M271.9 270.4L273.6 267.4L274.4 264.4L275.8 261.4" stroke="#c818c8" stroke-width="0.85"/><path d="M277.4 258.4L278.8 255.4L279.4 252.4" stroke="#c818c8" stroke-width="0.85"/><path d="M279.4 252.4L280.9 249.4L282.3 246.4" stroke="#c818c8" stroke-width="0.85"/><path d="M238.8 372.1L239.6 369.1L241.3 366.1L242.6 363.1L244.1 360.1L245.3 357.1L247.2 354.1" stroke="#d020d0" stroke-width="0.85"/><path d="M247.2 354.1L248.2 351.1L249.8 348.1L251.1 345.1" stroke="#d020d0" stroke-width="0.85"/><path d="M252.6 342.1L253.9 339.1L254.9 336.1L256.1 333.1L257.1 330.1L258.0 327.1L259.4 324.1" stroke="#d020d0" stroke-width="0.85"/><path d="M259.4 324.1L260.7 321.1L261.6 318.1L263.1 315.1L264.2 312.1L266.1 309.1" stroke="#d020d0" stroke-width="0.85"/><path d="M267.6 306.1L268.5 303.1L270.2 300.1L271.9 297.1L273.9 294.1L275.3 291.1L277.0 288.1L278.9 285.1L280.8 282.1L282.1 279.1" stroke="#d020d0" stroke-width="0.85"/><path d="M282.1 279.1L283.2 276.1L284.4 273.1L286.4 270.1L288.2 267.1L289.1 264.1" stroke="#d020d0" stroke-width="0.85"/><path d="M107.8 171.5L109.2 168.5L111.1 165.5L112.3 162.5L114.3 159.5L115.3 156.5L116.3 153.5" stroke="#c01870" stroke-width="0.85"/><path d="M117.3 150.5L118.5 147.5L119.7 144.5L121.0 141.5L122.1 138.5L123.7 135.5L125.3 132.5L127.0 129.5" stroke="#c01870" stroke-width="0.85"/><path d="M127.0 129.5L128.4 126.5L130.4 123.5L131.9 120.5L133.5 117.5L135.2 114.5L137.4 111.5L139.0 108.5L140.9 105.5" stroke="#c01870" stroke-width="0.85"/><path d="M140.9 105.5L142.5 102.5L144.4 99.5" stroke="#c01870" stroke-width="0.85"/><path d="M146.2 96.5L147.9 93.5L149.3 90.5L150.9 87.5L152.9 84.5L154.2 81.5L155.8 78.5L157.8 75.5" stroke="#c01870" stroke-width="0.85"/><path d="M157.8 75.5L159.6 72.5L161.8 69.5" stroke="#c01870" stroke-width="0.85"/><path d="M161.8 69.5L163.9 66.5L165.8 63.5L167.7 60.5" stroke="#c01870" stroke-width="0.85"/><path d="M255.3 385.9L257.3 382.9L259.0 379.9L260.3 376.9L261.9 373.9L263.3 370.9" stroke="#c818c8" stroke-width="0.85"/><path d="M263.3 370.9L265.3 367.9L266.3 364.9L268.1 361.9L269.3 358.9L270.6 355.9" stroke="#c818c8" stroke-width="0.85"/><path d="M271.5 352.9L272.6 349.9L273.8 346.9L274.9 343.9L276.5 340.9L277.4 337.9" stroke="#c818c8" stroke-width="0.85"/><path d="M278.6 334.9L280.0 331.9L281.5 328.9L283.0 325.9L283.9 322.9L285.0 319.9L286.7 316.9" stroke="#c818c8" stroke-width="0.85"/><path d="M286.7 316.9L288.7 313.9L289.6 310.9L290.5 307.9L292.3 304.9L294.3 301.9L295.5 298.9L297.4 295.9" stroke="#c818c8" stroke-width="0.85"/><path d="M298.8 292.9L300.6 289.9L301.4 286.9L302.2 283.9L303.9 280.9L305.2 277.9L306.0 274.9" stroke="#c818c8" stroke-width="0.85"/><path d="M422.4 234.9L423.9 231.9L425.0 228.9L427.0 225.9L427.9 222.9L429.2 219.9L430.6 216.9L432.6 213.9" stroke="#a81048" stroke-width="0.85"/><path d="M434.8 210.9L436.8 207.9L439.0 204.9L440.6 201.9L442.5 198.9" stroke="#a81048" stroke-width="0.85"/><path d="M442.5 198.9L444.0 195.9L445.8 192.9L447.6 189.9L448.8 186.9" stroke="#a81048" stroke-width="0.85"/><path d="M451.1 183.9L452.9 180.9L454.4 177.9L456.4 174.9L457.7 171.9L459.2 168.9" stroke="#a81048" stroke-width="0.85"/><path d="M459.2 168.9L461.2 165.9L462.7 162.9" stroke="#a81048" stroke-width="0.85"/><path d="M462.7 162.9L465.0 159.9" stroke="#a81048" stroke-width="0.85"/><path d="M339.1 312.2L340.1 309.2L341.0 306.2L342.7 303.2L344.1 300.2L345.8 297.2L347.5 294.2L349.3 291.2" stroke="#c01870" stroke-width="0.85"/><path d="M351.0 288.2L352.4 285.2L354.4 282.2L356.1 279.2L357.6 276.2L359.5 273.2L360.8 270.2L362.2 267.2L363.9 264.2" stroke="#c01870" stroke-width="0.85"/><path d="M366.0 261.2L367.2 258.2L368.5 255.2L369.6 252.2L371.4 249.2L372.9 246.2L374.5 243.2L376.0 240.2" stroke="#c01870" stroke-width="0.85"/><path d="M376.0 240.2L377.4 237.2L379.2 234.2" stroke="#c01870" stroke-width="0.85"/><path d="M379.2 234.2L380.4 231.2L382.0 228.2L383.3 225.2L385.0 222.2L386.6 219.2" stroke="#c01870" stroke-width="0.85"/><path d="M386.6 219.2L388.2 216.2L389.7 213.2L391.8 210.2" stroke="#c01870" stroke-width="0.85"/><path d="M321.0 283.6L322.4 280.6L323.6 277.6" stroke="#d020d0" stroke-width="0.85"/><path d="M324.7 274.6L326.6 271.6L328.1 268.6L329.1 265.6L330.0 262.6L331.4 259.6L332.8 256.6L334.1 253.6L334.8 250.6L336.1 247.6" stroke="#d020d0" stroke-width="0.85"/><path d="M337.7 244.6L338.9 241.6L340.3 238.6L341.2 235.6" stroke="#d020d0" stroke-width="0.85"/><path d="M568.3 92.9L569.9 89.9L571.1 86.9L572.5 83.9L573.3 80.9L575.1 77.9L576.2 74.9L577.8 71.9" stroke="#9038d8" stroke-width="0.85"/><path d="M577.8 71.9L578.4 68.9L579.4 65.9L580.9 62.9L581.7 59.9" stroke="#9038d8" stroke-width="0.85"/><path d="M582.4 56.9L583.4 53.9L584.9 50.9L586.6 47.9L587.6 44.9" stroke="#9038d8" stroke-width="0.85"/><path d="M238.5 190.1L240.1 187.1L241.3 184.1L243.1 181.1L244.6 178.1" stroke="#c818c8" stroke-width="0.85"/><path d="M246.2 175.1L247.9 172.1L249.1 169.1L250.7 166.1L252.0 163.1L253.1 160.1" stroke="#c818c8" stroke-width="0.85"/><path d="M253.1 160.1L254.7 157.1" stroke="#c818c8" stroke-width="0.85"/><path d="M371.8 109.3L372.7 106.3L373.9 103.3L376.0 100.3L377.7 97.3L379.8 94.3L381.4 91.3" stroke="#c01870" stroke-width="0.85"/><path d="M382.8 88.3L384.1 85.3L385.4 82.3L386.5 79.3L388.6 76.3L390.8 73.3L392.6 70.3L394.0 67.3L395.3 64.3" stroke="#c01870" stroke-width="0.85"/><path d="M397.0 61.3L398.5 58.3L400.2 55.3L401.6 52.3L403.2 49.3" stroke="#c01870" stroke-width="0.85"/><path d="M403.2 49.3L404.5 46.3L406.0 43.3L407.4 40.3" stroke="#c01870" stroke-width="0.85"/><path d="M407.4 40.3L409.8 37.3" stroke="#c01870" stroke-width="0.85"/><path d="M369.5 114.8L370.1 111.8L371.2 108.8L371.7 105.8L373.2 102.8" stroke="#c818c8" stroke-width="0.85"/><path d="M373.2 102.8L373.9 99.8L374.9 96.8L375.6 93.8L376.7 90.8L377.4 87.8L378.3 84.8L379.2 81.8L379.7 78.8" stroke="#c818c8" stroke-width="0.85"/><path d="M381.2 75.8L382.1 72.8L382.8 69.8L383.9 66.8L384.8 63.8L385.5 60.8L386.5 57.8L387.4 54.8" stroke="#c818c8" stroke-width="0.85"/><path d="M387.4 54.8L388.3 51.8" stroke="#c818c8" stroke-width="0.85"/><path d="M141.7 289.5L142.6 286.5L143.8 283.5L145.6 280.5L147.4 277.5L148.7 274.5L150.1 271.5L152.3 268.5" stroke="#c01870" stroke-width="0.85"/><path d="M152.3 268.5L154.6 265.5L156.1 262.5L158.1 259.5L160.4 256.5" stroke="#c01870" stroke-width="0.85"/><path d="M160.4 256.5L162.4 253.5L164.1 250.5L166.4 247.5L168.4 244.5L170.5 241.5L172.9 238.5L174.3 235.5L175.7 232.5L177.2 229.5" stroke="#c01870" stroke-width="0.85"/><path d="M266.4 385.3L267.6 382.3L268.8 379.3L270.0 376.3L271.1 373.3L271.8 370.3L272.6 367.3L273.9 364.3" stroke="#a81048" stroke-width="0.85"/><path d="M275.5 361.3L276.1 358.3L276.7 355.3L277.7 352.3" stroke="#a81048" stroke-width="0.85"/><path d="M277.7 352.3L279.4 349.3L280.9 346.3" stroke="#a81048" stroke-width="0.85"/><path d="M280.9 346.3L281.7 343.3L283.0 340.3L283.6 337.3L285.1 334.3L285.7 331.3L287.3 328.3" stroke="#a81048" stroke-width="0.85"/><path d="M287.3 328.3L288.3 325.3L289.2 322.3L290.2 319.3L290.9 316.3L291.8 313.3L292.6 310.3" stroke="#a81048" stroke-width="0.85"/><path d="M183.6 384.5L185.4 381.5L187.4 378.5L188.5 375.5L190.2 372.5L191.4 369.5L192.9 366.5L194.9 363.5L196.6 360.5" stroke="#b820c8" stroke-width="0.85"/><path d="M198.7 357.5L200.4 354.5L202.6 351.5L203.7 348.5L205.8 345.5L207.1 342.5" stroke="#b820c8" stroke-width="0.85"/><path d="M207.1 342.5L208.3 339.5L209.4 336.5L210.7 333.5" stroke="#b820c8" stroke-width="0.85"/><path d="M212.5 330.5L213.9 327.5" stroke="#b820c8" stroke-width="0.85"/><path d="M331.2 226.1L333.1 223.1L334.8 220.1L336.6 217.1L337.6 214.1L339.6 211.1L340.6 208.1L341.7 205.1" stroke="#d020d0" stroke-width="0.85"/><path d="M343.3 202.1L345.1 199.1L346.8 196.1" stroke="#d020d0" stroke-width="0.85"/><path d="M346.8 196.1L348.5 193.1L350.4 190.1" stroke="#d020d0" stroke-width="0.85"/><path d="M396.8 238.8L398.5 235.8L399.7 232.8L400.9 229.8L402.3 226.8L403.1 223.8L404.2 220.8L405.1 217.8" stroke="#a81048" stroke-width="0.85"/><path d="M406.3 214.8L407.4 211.8L408.9 208.8L410.4 205.8L411.3 202.8L413.1 199.8" stroke="#a81048" stroke-width="0.85"/><path d="M413.1 199.8L414.2 196.8L415.2 193.8L415.9 190.8L416.4 187.8" stroke="#a81048" stroke-width="0.85"/><path d="M416.4 187.8L417.4 184.8L418.6 181.8L419.4 178.8L420.0 175.8L421.0 172.8L421.7 169.8" stroke="#a81048" stroke-width="0.85"/><path d="M404.6 138.0L405.8 135.0L407.7 132.0L408.8 129.0L410.2 126.0" stroke="#9038d8" stroke-width="0.85"/><path d="M412.4 123.0L414.2 120.0L415.5 117.0" stroke="#9038d8" stroke-width="0.85"/><path d="M415.5 117.0L416.9 114.0L419.0 111.0L420.9 108.0L422.2 105.0L424.3 102.0" stroke="#9038d8" stroke-width="0.85"/><path d="M424.3 102.0L426.2 99.0L428.3 96.0L429.9 93.0L431.1 90.0L432.8 87.0" stroke="#9038d8" stroke-width="0.85"/><path d="M432.8 87.0L434.9 84.0L437.1 81.0L439.2 78.0L441.1 75.0L443.1 72.0" stroke="#9038d8" stroke-width="0.85"/><path d="M443.1 72.0L444.8 69.0L446.5 66.0L448.6 63.0L450.1 60.0L452.1 57.0L453.2 54.0" stroke="#9038d8" stroke-width="0.85"/><path d="M453.2 54.0L454.5 51.0L456.2 48.0" stroke="#9038d8" stroke-width="0.85"/><path d="M362.0 152.3L363.5 149.3L365.3 146.3L366.4 143.3L368.4 140.3L369.8 137.3L371.3 134.3L372.7 131.3L373.8 128.3L375.7 125.3" stroke="#d020d0" stroke-width="0.85"/><path d="M375.7 125.3L377.5 122.3L379.5 119.3L381.1 116.3L383.2 113.3L384.7 110.3" stroke="#d020d0" stroke-width="0.85"/><path d="M129.3 383.4L131.0 380.4L133.1 377.4L135.1 374.4" stroke="#a81048" stroke-width="0.85"/><path d="M135.1 374.4L137.2 371.4L139.0 368.4L141.0 365.4L142.6 362.4L144.2 359.4L145.9 356.4L147.8 353.4" stroke="#a81048" stroke-width="0.85"/><path d="M147.8 353.4L148.9 350.4L150.2 347.4L152.1 344.4L153.2 341.4L154.3 338.4L156.1 335.4L158.1 332.4L159.0 329.4L159.9 326.4" stroke="#a81048" stroke-width="0.85"/><path d="M159.9 326.4L161.3 323.4L162.8 320.4L164.3 317.4" stroke="#a81048" stroke-width="0.85"/><path d="M304.7 135.2L305.6 132.2L306.8 129.2L308.1 126.2L309.7 123.2L311.4 120.2L312.8 117.2L314.3 114.2L315.5 111.2L317.0 108.2" stroke="#a81048" stroke-width="0.85"/><path d="M318.3 105.2L319.3 102.2L320.8 99.2L321.9 96.2" stroke="#a81048" stroke-width="0.85"/><path d="M323.8 93.2L324.9 90.2L325.9 87.2L327.4 84.2" stroke="#a81048" stroke-width="0.85"/><path d="M328.9 81.2L330.9 78.2L332.3 75.2L334.1 72.2" stroke="#a81048" stroke-width="0.85"/><path d="M334.1 72.2L335.2 69.2L336.6 66.2L338.3 63.2L339.5 60.2L341.3 57.2" stroke="#a81048" stroke-width="0.85"/><path d="M342.7 54.2L344.2 51.2L345.8 48.2" stroke="#a81048" stroke-width="0.85"/><path d="M345.8 48.2L347.1 45.2L349.4 42.2L351.4 39.2" stroke="#a81048" stroke-width="0.85"/><path d="M351.4 39.2L353.2 36.2" stroke="#a81048" stroke-width="0.85"/><path d="M107.5 377.4L108.7 374.4L109.8 371.4L111.3 368.4" stroke="#c01870" stroke-width="0.85"/><path d="M111.3 368.4L112.9 365.4L114.9 362.4L116.6 359.4L118.2 356.4L119.8 353.4L120.9 350.4L122.3 347.4" stroke="#c01870" stroke-width="0.85"/><path d="M122.3 347.4L124.3 344.4L126.2 341.4" stroke="#c01870" stroke-width="0.85"/><path d="M454.9 87.8L455.9 84.8L457.4 81.8L459.0 78.8" stroke="#d020d0" stroke-width="0.85"/><path d="M460.8 75.8L462.8 72.8L463.9 69.8L465.1 66.8L466.8 63.8L467.8 60.8" stroke="#d020d0" stroke-width="0.85"/><path d="M467.8 60.8L469.3 57.8L470.3 54.8L472.0 51.8L473.7 48.8L474.8 45.8L476.0 42.8L477.4 39.8L478.8 36.8" stroke="#d020d0" stroke-width="0.85"/><path d="M181.8 175.3L183.5 172.3L184.6 169.3" stroke="#d020d0" stroke-width="0.85"/><path d="M184.6 169.3L185.6 166.3L187.0 163.3L188.5 160.3" stroke="#d020d0" stroke-width="0.85"/><path d="M188.5 160.3L190.6 157.3L192.6 154.3L194.7 151.3" stroke="#d020d0" stroke-width="0.85"/><path d="M194.7 151.3L196.6 148.3L198.2 145.3L200.3 142.3L202.1 139.3L203.6 136.3L204.8 133.3" stroke="#d020d0" stroke-width="0.85"/><path d="M206.1 130.3L208.2 127.3" stroke="#d020d0" stroke-width="0.85"/><path d="M375.1 250.5L376.3 247.5L377.5 244.5L379.1 241.5L380.6 238.5" stroke="#d020d0" stroke-width="0.85"/><path d="M380.6 238.5L381.7 235.5L383.4 232.5L385.4 229.5L386.4 226.5L387.3 223.5L388.3 220.5L390.0 217.5L391.3 214.5L392.2 211.5" stroke="#d020d0" stroke-width="0.85"/><path d="M392.2 211.5L393.1 208.5L394.5 205.5L395.6 202.5L397.3 199.5L398.7 196.5L400.0 193.5L401.0 190.5L401.7 187.5" stroke="#d020d0" stroke-width="0.85"/><path d="M401.7 187.5L402.7 184.5L404.3 181.5" stroke="#d020d0" stroke-width="0.85"/><path d="M405.9 178.5L407.5 175.5L408.6 172.5L410.3 169.5L411.6 166.5L412.5 163.5L413.1 160.5L413.7 157.5L415.4 154.5" stroke="#d020d0" stroke-width="0.85"/><path d="M416.1 151.5L416.7 148.5L418.2 145.5L419.7 142.5L420.5 139.5L421.3 136.5" stroke="#d020d0" stroke-width="0.85"/><path d="M408.8 334.0L409.8 331.0L410.3 328.0L410.9 325.0L411.5 322.0L412.9 319.0L414.2 316.0" stroke="#a81048" stroke-width="0.85"/><path d="M414.2 316.0L415.6 313.0L416.6 310.0L418.1 307.0" stroke="#a81048" stroke-width="0.85"/><path d="M418.1 307.0L419.2 304.0L420.5 301.0L421.5 298.0L423.4 295.0" stroke="#a81048" stroke-width="0.85"/><path d="M423.4 295.0L424.6 292.0" stroke="#a81048" stroke-width="0.85"/><path d="M268.7 270.3L270.6 267.3L271.9 264.3" stroke="#c01870" stroke-width="0.85"/><path d="M271.9 264.3L273.4 261.3L274.3 258.3L275.1 255.3L276.4 252.3L277.8 249.3L279.6 246.3L280.5 243.3" stroke="#c01870" stroke-width="0.85"/><path d="M280.5 243.3L282.1 240.3L283.8 237.3L284.7 234.3L285.9 231.3L286.4 228.3" stroke="#c01870" stroke-width="0.85"/><path d="M286.4 228.3L287.7 225.3L289.0 222.3L290.4 219.3L291.4 216.3L292.1 213.3" stroke="#c01870" stroke-width="0.85"/><path d="M414.2 375.0L415.0 373.8" stroke="#c01848" stroke-width="1.0"/><path d="M461.0 256.2L461.8 255.0" stroke="#c01848" stroke-width="1.0"/><path d="M431.0 270.5L431.8 269.3" stroke="#a040e0" stroke-width="1.0"/><path d="M380.2 205.0L381.0 203.8" stroke="#a040e0" stroke-width="1.0"/><path d="M297.9 68.9L298.7 67.7" stroke="#c020d0" stroke-width="1.0"/><path d="M162.9 237.4L163.7 236.2" stroke="#c01848" stroke-width="1.0"/><path d="M361.1 337.9L361.9 336.7" stroke="#c020d0" stroke-width="1.0"/><path d="M115.3 241.0L116.1 239.8" stroke="#c020d0" stroke-width="1.0"/><path d="M359.2 122.8L360.0 121.6" stroke="#c020d0" stroke-width="1.0"/><path d="M521.2 71.6L522.0 70.4" stroke="#a040e0" stroke-width="1.0"/><path d="M313.5 98.3L314.3 97.1" stroke="#c01848" stroke-width="1.0"/><path d="M352.6 215.1L353.4 213.9" stroke="#a040e0" stroke-width="1.0"/><path d="M204.9 264.1L205.7 262.9" stroke="#c01848" stroke-width="1.0"/><path d="M185.1 80.4L185.9 79.2" stroke="#c020d0" stroke-width="1.0"/><path d="M205.3 268.5L206.1 267.3" stroke="#c020d0" stroke-width="1.0"/><path d="M307.5 214.9L308.3 213.7" stroke="#a040e0" stroke-width="1.0"/><path d="M428.5 292.5L429.3 291.3" stroke="#c01848" stroke-width="1.0"/><path d="M117.4 270.1L118.2 268.9" stroke="#c01848" stroke-width="1.0"/><path d="M259.4 146.0L260.2 144.8" stroke="#a040e0" stroke-width="1.0"/><path d="M470.2 233.2L471.0 232.0" stroke="#c01848" stroke-width="1.0"/><path d="M339.0 54.6L339.8 53.4" stroke="#c01848" stroke-width="1.0"/><path d="M502.8 69.4L503.6 68.2" stroke="#a040e0" stroke-width="1.0"/><path d="M299.6 156.2L300.4 155.0" stroke="#a040e0" stroke-width="1.0"/><path d="M125.6 295.0L126.4 293.8" stroke="#a040e0" stroke-width="1.0"/><path d="M516.0 98.2L516.8 97.0" stroke="#c01848" stroke-width="1.0"/><path d="M117.6 104.1L118.4 102.9" stroke="#c020d0" stroke-width="1.0"/><path d="M269.8 83.3L270.6 82.1" stroke="#c01848" stroke-width="1.0"/><path d="M282.9 172.7L283.7 171.5" stroke="#c020d0" stroke-width="1.0"/><path d="M587.8 42.5L588.6 41.3" stroke="#c020d0" stroke-width="1.0"/><path d="M567.5 217.3L568.3 216.1" stroke="#c01848" stroke-width="1.0"/><path d="M171.7 197.1L172.5 195.9" stroke="#c01848" stroke-width="1.0"/><path d="M225.9 55.6L226.7 54.4" stroke="#c020d0" stroke-width="1.0"/><path d="M332.4 372.8L333.2 371.6" stroke="#a040e0" stroke-width="1.0"/><path d="M289.0 109.4L289.8 108.2" stroke="#c01848" stroke-width="1.0"/><path d="M523.8 183.5L524.6 182.3" stroke="#a040e0" stroke-width="1.0"/><path d="M298.4 380.5L299.2 379.3" stroke="#c01848" stroke-width="1.0"/><path d="M367.3 278.0L368.1 276.8" stroke="#a040e0" stroke-width="1.0"/><path d="M128.6 86.4L129.4 85.2" stroke="#a040e0" stroke-width="1.0"/><path d="M115.6 303.3L116.4 302.1" stroke="#c020d0" stroke-width="1.0"/><path d="M114.7 104.8L115.5 103.6" stroke="#a040e0" stroke-width="1.0"/><path d="M524.0 84.0L524.8 82.8" stroke="#c020d0" stroke-width="1.0"/><path d="M513.1 42.7L513.9 41.5" stroke="#c01848" stroke-width="1.0"/><path d="M461.4 229.6L462.2 228.4" stroke="#c020d0" stroke-width="1.0"/><path d="M215.2 361.7L216.0 360.5" stroke="#a040e0" stroke-width="1.0"/><path d="M235.6 88.2L236.4 87.0" stroke="#c01848" stroke-width="1.0"/><path d="M550.2 91.5L551.0 90.3" stroke="#c01848" stroke-width="1.0"/><path d="M180.5 327.2L181.3 326.0" stroke="#a040e0" stroke-width="1.0"/><path d="M348.5 159.8L349.3 158.6" stroke="#c01848" stroke-width="1.0"/><path d="M296.3 133.9L297.1 132.7" stroke="#a040e0" stroke-width="1.0"/><path d="M121.4 197.8L122.2 196.6" stroke="#c01848" stroke-width="1.0"/><path d="M278.3 102.7L279.1 101.5" stroke="#a040e0" stroke-width="1.0"/><path d="M232.2 75.6L233.0 74.4" stroke="#a040e0" stroke-width="1.0"/><path d="M148.6 184.7L149.4 183.5" stroke="#c020d0" stroke-width="1.0"/><path d="M438.2 238.9L439.0 237.7" stroke="#c01848" stroke-width="1.0"/><path d="M352.2 385.8L353.0 384.6" stroke="#c01848" stroke-width="1.0"/><path d="M412.8 92.6L413.6 91.4" stroke="#c01848" stroke-width="1.0"/><path d="M437.0 177.4L437.8 176.2" stroke="#c020d0" stroke-width="1.0"/><path d="M201.8 108.6L202.6 107.4" stroke="#c020d0" stroke-width="1.0"/><path d="M445.9 266.8L446.7 265.6" stroke="#a040e0" stroke-width="1.0"/><path d="M377.5 147.6L378.3 146.4" stroke="#c020d0" stroke-width="1.0"/><path d="M523.6 199.1L524.4 197.9" stroke="#a040e0" stroke-width="1.0"/><path d="M551.0 124.2L551.8 123.0" stroke="#a040e0" stroke-width="1.0"/><path d="M313.4 184.4L314.2 183.2" stroke="#c01848" stroke-width="1.0"/><path d="M466.3 82.5L467.1 81.3" stroke="#c01848" stroke-width="1.0"/><path d="M178.5 169.0L179.3 167.8" stroke="#c020d0" stroke-width="1.0"/><path d="M387.4 57.6L388.2 56.4" stroke="#c01848" stroke-width="1.0"/><path d="M379.8 50.7L380.6 49.5" stroke="#a040e0" stroke-width="1.0"/><path d="M544.3 143.2L545.1 142.0" stroke="#a040e0" stroke-width="1.0"/><path d="M234.2 216.7L235.0 215.5" stroke="#c020d0" stroke-width="1.0"/><path d="M463.1 149.9L463.9 148.7" stroke="#c020d0" stroke-width="1.0"/><path d="M387.3 329.1L388.1 327.9" stroke="#c01848" stroke-width="1.0"/><path d="M240.0 79.7L240.8 78.5" stroke="#c01848" stroke-width="1.0"/><path d="M263.5 205.1L264.3 203.9" stroke="#c020d0" stroke-width="1.0"/><path d="M320.0 114.2L320.8 113.0" stroke="#a040e0" stroke-width="1.0"/></g></svg><div class="a" style="left:34px;top:63px;width:8px;height:48px;background:linear-gradient(#ff0000 0%,#ff0000 30%,#ff9900 38%,#ffff00 47%,#00ee00 58%,#00e0e0 68%,#4060ff 78%,#c000ff 88%,#ff00b0 100%)"></div><div class="a" style="left:42px;top:65px;width:1.2px;height:0.8px;background:#fff"></div><div class="t" style="left:43.5px;transform:scaleY(1.35);top:64.10px;font-size:4.2px;line-height:4.2px;color:#fff;">180</div><div class="t" style="left:42px;transform:scaleY(1.35);top:108.10px;font-size:4.2px;line-height:4.2px;color:#fff;">0</div><div class="t" style="left:24px;transform:scaleY(1.35);top:114.40px;font-size:4.2px;line-height:4.2px;color:#fff;">FaultTrends_Degree</div><svg class="a" style="left:28px;top:327px" width="44" height="44">
<defs><linearGradient id="rim" x1="0" y1="0" x2="0" y2="1"><stop offset="0" stop-color="#e02020"/><stop offset="0.5" stop-color="#d08030"/><stop offset="1" stop-color="#20a030"/></linearGradient>
<linearGradient id="arr" x1="0" y1="0" x2="1" y2="0"><stop offset="0" stop-color="#f05020"/><stop offset="0.5" stop-color="#40a868"/><stop offset="1" stop-color="#2070e0"/></linearGradient></defs>
<circle cx="21.8" cy="21.5" r="18.8" fill="#d4d4d4" stroke="url(#rim)" stroke-width="1.3"/>
<path d="M21.8 12L27.2 31L21.8 27.6L16.4 31z" fill="url(#arr)"/>
<text x="21.8" y="9.6" font-size="5.6" font-weight="bold" text-anchor="middle" fill="#202020" font-family="Liberation Sans">N</text>
<text x="21.8" y="38.6" font-size="4.8" font-weight="bold" text-anchor="middle" fill="#202020" font-family="Liberation Sans">S</text>
<text x="7.6" y="23.6" font-size="4.8" font-weight="bold" text-anchor="middle" fill="#202020" font-family="Liberation Sans">W</text>
<text x="36.4" y="23.6" font-size="4.8" font-weight="bold" text-anchor="middle" fill="#202020" font-family="Liberation Sans">E</text>
</svg><svg class="a" style="left:293px;top:33px" width="14" height="8"><path d="M1.5 0.5A5.5 5.5 0 0 0 12.5 0.5" fill="none" stroke="#d0d0d0" stroke-width="2"/></svg><svg class="a" style="left:3px;top:337px" width="7" height="48"><defs><linearGradient id="vw" x1="0" y1="0" x2="0" y2="1"><stop offset="0" stop-color="#202020"/><stop offset="0.12" stop-color="#888"/><stop offset="0.5" stop-color="#c4c4c4"/><stop offset="0.88" stop-color="#888"/><stop offset="1" stop-color="#202020"/></linearGradient></defs><rect x="0" y="0" width="7" height="48" fill="#c8c8c8"/><rect x="0.8" y="1.5" width="5.4" height="45" rx="1" fill="#303030"/><rect x="1.5" y="2.5" width="4" height="43" fill="url(#vw)"/><rect x="2" y="6" width="3" height="1" fill="#fff" fill-opacity="0.45"/><rect x="2" y="9" width="3" height="1" fill="#fff" fill-opacity="0.45"/><rect x="2" y="12" width="3" height="1" fill="#fff" fill-opacity="0.45"/><rect x="2" y="15" width="3" height="1" fill="#fff" fill-opacity="0.45"/><rect x="2" y="18" width="3" height="1" fill="#fff" fill-opacity="0.45"/><rect x="2" y="21" width="3" height="1" fill="#fff" fill-opacity="0.45"/><rect x="2" y="24" width="3" height="1" fill="#fff" fill-opacity="0.45"/><rect x="2" y="27" width="3" height="1" fill="#fff" fill-opacity="0.45"/><rect x="2" y="30" width="3" height="1" fill="#fff" fill-opacity="0.45"/><rect x="2" y="33" width="3" height="1" fill="#fff" fill-opacity="0.45"/><rect x="2" y="36" width="3" height="1" fill="#fff" fill-opacity="0.45"/><rect x="2" y="39" width="3" height="1" fill="#fff" fill-opacity="0.45"/><rect x="2" y="42" width="3" height="1" fill="#fff" fill-opacity="0.45"/></svg><svg class="a" style="left:591px;top:337px" width="7" height="48"><defs><linearGradient id="vw" x1="0" y1="0" x2="0" y2="1"><stop offset="0" stop-color="#202020"/><stop offset="0.12" stop-color="#888"/><stop offset="0.5" stop-color="#c4c4c4"/><stop offset="0.88" stop-color="#888"/><stop offset="1" stop-color="#202020"/></linearGradient></defs><rect x="0" y="0" width="7" height="48" fill="#c8c8c8"/><rect x="0.8" y="1.5" width="5.4" height="45" rx="1" fill="#303030"/><rect x="1.5" y="2.5" width="4" height="43" fill="url(#vw)"/><rect x="2" y="6" width="3" height="1" fill="#fff" fill-opacity="0.45"/><rect x="2" y="9" width="3" height="1" fill="#fff" fill-opacity="0.45"/><rect x="2" y="12" width="3" height="1" fill="#fff" fill-opacity="0.45"/><rect x="2" y="15" width="3" height="1" fill="#fff" fill-opacity="0.45"/><rect x="2" y="18" width="3" height="1" fill="#fff" fill-opacity="0.45"/><rect x="2" y="21" width="3" height="1" fill="#fff" fill-opacity="0.45"/><rect x="2" y="24" width="3" height="1" fill="#fff" fill-opacity="0.45"/><rect x="2" y="27" width="3" height="1" fill="#fff" fill-opacity="0.45"/><rect x="2" y="30" width="3" height="1" fill="#fff" fill-opacity="0.45"/><rect x="2" y="33" width="3" height="1" fill="#fff" fill-opacity="0.45"/><rect x="2" y="36" width="3" height="1" fill="#fff" fill-opacity="0.45"/><rect x="2" y="39" width="3" height="1" fill="#fff" fill-opacity="0.45"/><rect x="2" y="42" width="3" height="1" fill="#fff" fill-opacity="0.45"/></svg><svg class="a" style="left:16px;top:390px" width="46" height="6"><defs><linearGradient id="hw" x1="0" y1="0" x2="1" y2="0"><stop offset="0" stop-color="#202020"/><stop offset="0.1" stop-color="#888"/><stop offset="0.5" stop-color="#c4c4c4"/><stop offset="0.9" stop-color="#888"/><stop offset="1" stop-color="#202020"/></linearGradient></defs><rect width="46" height="6" fill="#c8c8c8"/><rect x="1.5" y="0.6" width="43" height="4.8" rx="1" fill="#303030"/><rect x="2.5" y="1.3" width="41" height="3.4" fill="url(#hw)"/><rect x="6" y="1.8" width="1" height="2.4" fill="#fff" fill-opacity="0.45"/><rect x="9" y="1.8" width="1" height="2.4" fill="#fff" fill-opacity="0.45"/><rect x="12" y="1.8" width="1" height="2.4" fill="#fff" fill-opacity="0.45"/><rect x="15" y="1.8" width="1" height="2.4" fill="#fff" fill-opacity="0.45"/><rect x="18" y="1.8" width="1" height="2.4" fill="#fff" fill-opacity="0.45"/><rect x="21" y="1.8" width="1" height="2.4" fill="#fff" fill-opacity="0.45"/><rect x="24" y="1.8" width="1" height="2.4" fill="#fff" fill-opacity="0.45"/><rect x="27" y="1.8" width="1" height="2.4" fill="#fff" fill-opacity="0.45"/><rect x="30" y="1.8" width="1" height="2.4" fill="#fff" fill-opacity="0.45"/><rect x="33" y="1.8" width="1" height="2.4" fill="#fff" fill-opacity="0.45"/><rect x="36" y="1.8" width="1" height="2.4" fill="#fff" fill-opacity="0.45"/><rect x="39" y="1.8" width="1" height="2.4" fill="#fff" fill-opacity="0.45"/></svg><div class="a" style="left:588px;top:386px;width:12px;height:12px;background:#f0f0f0"></div><div class="t" style="left:1.8px;transform:scaleY(1.0);top:390.30px;font-size:6px;line-height:6px;color:#333;font-weight:bold;-webkit-font-smoothing:antialiased;">Y</div><div class="t" style="left:10px;transform:scaleY(1.0);top:390.30px;font-size:6px;line-height:6px;color:#333;font-weight:bold;-webkit-font-smoothing:antialiased;">X</div><div class="t" style="left:584.3px;transform:scaleY(1.35);top:391.40px;font-size:5.6px;line-height:5.6px;color:#222;font-weight:bold;">Dolly</div><div class="a" style="left:600px;top:36px;width:3px;height:362px;background:linear-gradient(90deg,#e6e6e6,#d4d4d4,#ececec)"></div><div class="a" style="left:603px;top:36px;width:150px;height:362px;background:#f0f0f0"></div><div class="a" style="left:603px;top:36px;width:150px;height:9px;background:linear-gradient(#dcdcdc,#ececec 60%,#f0f0f0)"></div><div class="a" style="left:605px;top:45px;width:146px;height:11px;background:#fff;border:1px solid #d6d6d6;box-sizing:border-box"></div><svg class="a" style="left:741.5px;top:46.5px" width="8" height="8"><circle cx="4" cy="4" r="3.4" fill="#9a9a9a"/><path d="M2.6 2.6L5.4 5.4M5.4 2.6L2.6 5.4" stroke="#fff" stroke-width="0.9"/></svg><div class="a" style="left:605px;top:57px;width:146px;height:141px;background:#fff;border:1px solid #e0e0e0;box-sizing:border-box"></div><div class="a" style="left:745px;top:58px;width:6px;height:139px;background:#f0f0f0"></div><div class="a" style="left:746px;top:130px;width:4px;height:27px;background:#cdcdcd"></div><svg class="a" style="left:745px;top:59px" width="6" height="5"><path d="M1 3.5L3 1.5L5 3.5" stroke="#555" stroke-width="0.8" fill="none"/></svg><svg class="a" style="left:745px;top:191px" width="6" height="5"><path d="M1 1.5L3 3.5L5 1.5" stroke="#555" stroke-width="0.8" fill="none"/></svg><div class="t" style="left:688px;transform:translateX(-100%) scaleY(1.15);top:68.65px;font-size:4.7px;line-height:4.7px;color:#1a1a1a;">Dip &amp; Azimuth - Sm.g</div><div class="t" style="left:692px;transform:translateX(-100%) scaleY(1.15);top:96.65px;font-size:4.7px;line-height:4.7px;color:#1a1a1a;">FaultTrends#test_deg_old</div><div class="t" style="left:687px;transform:translateX(-100%) scaleY(1.15);top:110.65px;font-size:4.7px;line-height:4.7px;color:#1a1a1a;">Magnitude Filter r</div><div class="t" style="left:712px;transform:translateX(-100%) scaleY(1.15);top:117.95px;font-size:4.7px;line-height:4.7px;color:#1a1a1a;">FDR_HDR_3D_Magnitude</div><div class="t" style="left:712px;transform:translateX(-100%) scaleY(1.15);top:124.95px;font-size:4.7px;line-height:4.7px;color:#1a1a1a;">FDR_HDR_5D_Magnitude</div><div class="t" style="left:712px;transform:translateX(-100%) scaleY(1.15);top:131.95px;font-size:4.7px;line-height:4.7px;color:#1a1a1a;">FDR_HDR_7D_Magnitude</div><div class="t" style="left:689px;transform:translateX(-100%) scaleY(1.15);top:145.65px;font-size:4.7px;line-height:4.7px;color:#1a1a1a;">Structure 35</div><div class="t" style="left:690px;transform:translateX(-100%) scaleY(1.15);top:152.65px;font-size:4.7px;line-height:4.7px;color:#1a1a1a;">Intensity</div><div class="t" style="left:694px;transform:translateX(-100%) scaleY(1.15);top:159.65px;font-size:4.7px;line-height:4.7px;color:#1a1a1a;">Struct 35_v2</div><div class="t" style="left:688px;transform:translateX(-100%) scaleY(1.15);top:174.65px;font-size:4.7px;line-height:4.7px;color:#1a1a1a;font-weight:bold;">Seismic Base</div><div class="a" style="left:605px;top:198px;width:148px;height:18px;background:linear-gradient(90deg,#8cc8d4 0%,#98c8e0 55%,#a2c2e6 62%,#a4c4e8 100%)"></div><svg class="a" style="left:605px;top:198px" width="148" height="18"><path d="M97.5 0L106.5 0L122.5 18L84.5 18z" fill="#fff" fill-opacity="0.2"/></svg><div class="t" style="left:703.5px;transform:translateX(-100%) scaleY(1.2);top:205.90px;font-size:6.2px;line-height:6.2px;color:#f8fbff;text-shadow:0 0 1px rgba(0,0,0,0.5);">Colour Maps...</div><div class="a" style="left:603px;top:216px;width:150px;height:2.5px;background:#d6d6d6"></div><div class="a" style="left:603px;top:218.5px;width:150px;height:7px;background:linear-gradient(#c4c4c4,#dadada)"></div><div class="a" style="left:603px;top:234.5px;width:148px;height:162.5px;border:1px solid #d8d8d8;background:#fff;box-sizing:border-box"></div><div class="a" style="left:605px;top:238px;width:143px;height:98px;border:1px solid #e0e0e0;background:#fff;box-sizing:border-box"></div><div class="a" style="left:608px;top:243.5px;width:139px;height:8px;background:#e5e5e5;border:1px solid #c0c0c0;box-sizing:border-box"></div><div class="t" style="left:611px;transform:scaleY(1.35);top:246.80px;font-size:4.2px;line-height:4.2px;color:#444;">FaultTrendsRotary</div><svg class="a" style="left:740px;top:245px" width="5" height="4"><path d="M0.5 0.8L2.5 2.8L4.5 0.8" stroke="#555" stroke-width="0.7" fill="none"/></svg><div class="a" style="left:608px;top:253px;width:139px;height:8px;background:linear-gradient(90deg,#ff0000 0%,#ff00ff 10%,#4848f0 21%,#40e0f0 30%,#00ff00 41%,#ffff00 51%,#ff9900 62%,#ff0000 71%,#ff0000 100%)"></div><div class="a" style="left:611px;top:265.5px;width:98px;height:1px;background:#d4d4d4"></div><div class="a" style="left:611px;top:276.5px;width:98px;height:1px;background:#d4d4d4"></div><svg class="a" style="left:611px;top:262.5px" width="6" height="8"><path d="M0.5 0.5H5.5V5.5L3 7.5L0.5 5.5z" fill="#1a74d4"/></svg><svg class="a" style="left:677px;top:273px" width="6" height="8"><path d="M0.5 0.5H5.5V5.5L3 7.5L0.5 5.5z" fill="#1a74d4"/></svg><div class="a" style="left:711px;top:262px;width:28px;height:8px;background:#fff;border:1px solid #b8b8b8;box-sizing:border-box"></div><div class="t" style="left:713px;transform:scaleY(1.35);top:264.55px;font-size:4.3px;line-height:4.3px;color:#222;">0.00%</div><div class="a" style="left:740px;top:262px;width:6px;height:8px;background:#f4f4f4;border:1px solid #c8c8c8;box-sizing:border-box"></div><svg class="a" style="left:741px;top:263px" width="4" height="6"><path d="M0.5 2.3L2 0.8L3.5 2.3zM0.5 3.7L2 5.2L3.5 3.7z" fill="#444"/></svg><div class="a" style="left:711px;top:273px;width:28px;height:8px;background:#fff;border:1px solid #b8b8b8;box-sizing:border-box"></div><div class="t" style="left:713px;transform:scaleY(1.35);top:275.55px;font-size:4.3px;line-height:4.3px;color:#222;">70.59%</div><div class="a" style="left:740px;top:273px;width:6px;height:8px;background:#f4f4f4;border:1px solid #c8c8c8;box-sizing:border-box"></div><svg class="a" style="left:741px;top:274px" width="4" height="6"><path d="M0.5 2.3L2 0.8L3.5 2.3zM0.5 3.7L2 5.2L3.5 3.7z" fill="#444"/></svg><div class="a" style="left:711px;top:284px;width:28px;height:8px;background:#fff;border:1px solid #b8b8b8;box-sizing:border-box"></div><div class="t" style="left:713px;transform:scaleY(1.35);top:286.55px;font-size:4.3px;line-height:4.3px;color:#222;">35.30%</div><div class="a" style="left:740px;top:284px;width:6px;height:8px;background:#f4f4f4;border:1px solid #c8c8c8;box-sizing:border-box"></div><svg class="a" style="left:741px;top:285px" width="4" height="6"><path d="M0.5 2.3L2 0.8L3.5 2.3zM0.5 3.7L2 5.2L3.5 3.7z" fill="#444"/></svg><div class="a" style="left:679px;top:285px;width:6px;height:6px;background:#fff;border:1px solid #7a7a7a;box-sizing:border-box"></div><div class="t" style="left:685px;transform:scaleY(1.35);top:287.15px;font-size:4.1px;line-height:4.1px;color:#222;">lock centre at:</div><div class="t" style="left:607px;transform:scaleY(1.35);top:294.05px;font-size:4.1px;line-height:4.1px;color:#222;">Minimum Value:</div><div class="t" style="left:641px;transform:scaleY(1.35);top:294.05px;font-size:4.1px;line-height:4.1px;color:#222;">0.0</div><div class="t" style="left:607px;transform:scaleY(1.35);top:301.15px;font-size:4.1px;line-height:4.1px;color:#222;">Maximum Value:</div><div class="t" style="left:641px;transform:scaleY(1.35);top:301.15px;font-size:4.1px;line-height:4.1px;color:#222;">180.0</div><div class="t" style="left:607px;transform:scaleY(1.35);top:308.45px;font-size:4.1px;line-height:4.1px;color:#222;">Centre Value:</div><div class="t" style="left:641px;transform:scaleY(1.35);top:308.45px;font-size:4.1px;line-height:4.1px;color:#222;">90.0</div><div class="t" style="left:607px;transform:scaleY(1.35);top:315.45px;font-size:4.1px;line-height:4.1px;color:#222;">Volume Min:</div><div class="t" style="left:641px;transform:scaleY(1.35);top:315.45px;font-size:4.1px;line-height:4.1px;color:#222;">0.0</div><div class="t" style="left:607px;transform:scaleY(1.35);top:322.45px;font-size:4.1px;line-height:4.1px;color:#222;">Volume Max:</div><div class="t" style="left:641px;transform:scaleY(1.35);top:322.45px;font-size:4.1px;line-height:4.1px;color:#222;">180.0</div><div class="a" style="left:659px;top:327px;width:37px;height:8px;background:#e1e1e1;border:1px solid #adadad;box-sizing:border-box"></div><div class="t" style="left:677.5px;transform:translateX(-50%) scaleY(1.35);top:330.05px;font-size:4.3px;line-height:4.3px;color:#111;">Align Colourmap</div><div class="a" style="left:661px;top:339px;width:6px;height:6px;background:#fff;border:1px solid #7a7a7a;box-sizing:border-box"></div><div class="t" style="left:667px;transform:scaleY(1.35);top:340.45px;font-size:4.5px;line-height:4.5px;color:#222;">Interpolation</div><div class="a" style="left:639px;top:346px;width:37px;height:8px;background:#e1e1e1;border:1px solid #adadad;box-sizing:border-box"></div><div class="t" style="left:657.5px;transform:translateX(-50%) scaleY(1.35);top:349.05px;font-size:4.3px;line-height:4.3px;color:#111;">Opacity ...</div><div class="a" style="left:678px;top:346px;width:38px;height:8px;background:#e1e1e1;border:1px solid #adadad;box-sizing:border-box"></div><div class="t" style="left:697.0px;transform:translateX(-50%) scaleY(1.35);top:349.05px;font-size:4.3px;line-height:4.3px;color:#111;">Voxel Pick</div><div class="a" style="left:639px;top:356px;width:37px;height:8px;background:#e1e1e1;border:1px solid #adadad;box-sizing:border-box"></div><div class="t" style="left:657.5px;transform:translateX(-50%) scaleY(1.35);top:359.05px;font-size:4.3px;line-height:4.3px;color:#111;">Extents ...</div><div class="a" style="left:603px;top:36px;width:2px;height:361px;background:#f0f0f0"></div><div class="a" style="left:603px;top:396px;width:150px;height:2px;background:#e8e8e8"></div><div class="a" style="left:0px;top:398px;width:754px;height:10px;background:#f0f0f0;border-top:1px solid #e2e2e2;box-sizing:border-box"></div><div class="a" style="left:287px;top:399px;width:1px;height:9px;background:#dadada"></div><div class="a" style="left:347px;top:399px;width:1px;height:9px;background:#dadada"></div><div class="t" style="left:1px;transform:scaleY(1.35);top:403.50px;font-size:4.4px;line-height:4.4px;color:#1a1a1a;">Inline : 328, Crossline : 12466, Time : 2196.00, World X : 171779, World Y : 7623925, Value : 11</div><div class="t" style="left:467px;transform:scaleY(1.35);top:403.47px;font-size:4.45px;line-height:4.45px;color:#1a1a1a;">FaultTrends_Degree</div><div class="a" style="left:422px;top:33px;width:277px;height:212px;background:#f0f0f0;box-shadow:0 1px 4px rgba(0,0,0,0.18)"><div class="a" style="left:0px;top:0px;width:277px;height:12px;background:#fff"></div><div class="a" style="left:4px;top:4px;width:2px;height:4px;background:#e8506a"></div><div class="a" style="left:6px;top:4px;width:2px;height:4px;background:#f0b030"></div><div class="a" style="left:8px;top:4px;width:2px;height:4px;background:#3aa0e0"></div><div class="t" style="left:11.5px;transform:scaleY(1.3);top:4.70px;font-size:4.6px;line-height:4.6px;color:#111;">Opacity Editor</div><div class="a" style="left:229px;top:5.7px;width:6px;height:0.5px;background:#777"></div><div class="a" style="left:246.2px;top:3.4px;width:4.6px;height:4.6px;border:0.5px solid #777;box-sizing:border-box"></div><svg class="a" style="left:264px;top:3px" width="6" height="6"><path d="M0.8 0.8L5.2 5.2M5.2 0.8L0.8 5.2" stroke="#666" stroke-width="0.55"/></svg><div class="t" style="left:5.5px;transform:scaleY(1.35);top:15.65px;font-size:4.1px;line-height:4.1px;color:#222;">Histogram</div><div class="a" style="left:4.5px;top:19px;width:268px;height:178px;border:1px solid #e2e2e2;box-sizing:border-box"></div><div class="a" style="left:5px;top:20px;width:267px;height:11px;background:#fdfdfd;border-top:1px solid #dadada;border-bottom:1px solid #e2e2e2;box-sizing:border-box"></div><div class="a" style="left:5px;top:21px;width:8px;height:9px;background:#cce4f7;border:1px solid #99c8ee;box-sizing:border-box"></div><svg class="a" style="left:5.5px;top:21.5px" width="8" height="8"><path d="M1 7L3 2L4 4L5 1L7 7z" fill="#1020c0"/><path d="M1.5 6L6.5 2" stroke="#e03030" stroke-width="0.7"/></svg><svg class="a" style="left:14px;top:21.5px" width="8" height="8"><path d="M1 7L3 3L4 4L5 3L7 7z" fill="#1020c0"/><path d="M0.5 3H7.5" stroke="#e03030" stroke-width="0.8"/></svg><div class="t" style="left:25.5px;transform:scaleY(1.35);top:25.25px;font-size:4.1px;line-height:4.1px;color:#111;">Normalisation:</div><div class="a" style="left:54px;top:21.8px;width:33px;height:8px;background:#e6e6e6;border:1px solid #c4c4c4;box-sizing:border-box"></div><div class="t" style="left:55px;transform:scaleY(1.35);top:25.15px;font-size:4.3px;line-height:4.3px;color:#111;">Logarithmic</div><svg class="a" style="left:83px;top:24px" width="5" height="3"><path d="M0.5 0.3L2.5 2.3L4.5 0.3" stroke="#555" stroke-width="0.6" fill="none"/></svg><svg class="a" style="left:89px;top:21px" width="5" height="9"><path d="M1 3L2.5 1.5L4 3M1 6L2.5 7.5L4 6" stroke="#777" stroke-width="0.6" fill="none"/></svg><div class="a" style="left:97px;top:22.5px;width:28.5px;height:7px;background:#e1e1e1;border:1px solid #b4b4b4;box-sizing:border-box"></div><div class="t" style="left:112px;transform:translateX(-50%) scaleY(1.35);top:24.80px;font-size:4.6px;line-height:4.6px;color:#111;">Reset Line</div><div class="a" style="left:6px;top:32px;width:264px;height:161px;background:#fff"></div><div class="t" style="left:42px;transform:scaleY(1.35);top:43.60px;font-size:4.2px;line-height:4.2px;color:#222;">Opacity : 0.00</div><div class="t" style="left:235px;transform:translateX(-100%) scaleY(1.35);top:43.60px;font-size:4.2px;line-height:4.2px;color:#222;">Bin : 0.00 -&gt; 0.35</div><svg class="a" style="left:0;top:0" width="276" height="212"><rect x="42" y="110.0" width="1" height="63.0" fill="#a9a9f6"/><rect x="43" y="109.9" width="1" height="63.1" fill="#a9a9f6"/><rect x="44" y="110.8" width="1" height="62.2" fill="#a9a9f6"/><rect x="45" y="108.1" width="1" height="64.9" fill="#a9a9f6"/><rect x="46" y="108.0" width="1" height="65.0" fill="#a9a9f6"/><rect x="47" y="108.0" width="1" height="65.0" fill="#a9a9f6"/><rect x="48" y="105.9" width="1" height="67.1" fill="#a9a9f6"/><rect x="49" y="107.1" width="1" height="65.9" fill="#a9a9f6"/><rect x="50" y="107.3" width="1" height="65.7" fill="#a9a9f6"/><rect x="51" y="107.8" width="1" height="65.2" fill="#a9a9f6"/><rect x="52" y="104.3" width="1" height="68.7" fill="#a9a9f6"/><rect x="53" y="105.0" width="1" height="68.0" fill="#a9a9f6"/><rect x="54" y="103.7" width="1" height="69.3" fill="#a9a9f6"/><rect x="55" y="106.6" width="1" height="66.4" fill="#a9a9f6"/><rect x="56" y="105.7" width="1" height="67.3" fill="#a9a9f6"/><rect x="57" y="102.4" width="1" height="70.6" fill="#a9a9f6"/><rect x="58" y="106.2" width="1" height="66.8" fill="#a9a9f6"/><rect x="59" y="105.7" width="1" height="67.3" fill="#a9a9f6"/><rect x="60" y="103.9" width="1" height="69.1" fill="#a9a9f6"/><rect x="61" y="103.3" width="1" height="69.7" fill="#a9a9f6"/><rect x="62" y="100.8" width="1" height="72.2" fill="#a9a9f6"/><rect x="63" y="99.7" width="1" height="73.3" fill="#a9a9f6"/><rect x="64" y="101.6" width="1" height="71.4" fill="#a9a9f6"/><rect x="65" y="99.1" width="1" height="73.9" fill="#a9a9f6"/><rect x="66" y="99.3" width="1" height="73.7" fill="#a9a9f6"/><rect x="67" y="99.1" width="1" height="73.9" fill="#a9a9f6"/><rect x="68" y="98.3" width="1" height="74.7" fill="#a9a9f6"/><rect x="69" y="100.5" width="1" height="72.5" fill="#a9a9f6"/><rect x="70" y="100.6" width="1" height="72.4" fill="#a9a9f6"/><rect x="71" y="102.6" width="1" height="70.4" fill="#a9a9f6"/><rect x="72" y="101.3" width="1" height="71.7" fill="#a9a9f6"/><rect x="73" y="102.1" width="1" height="70.9" fill="#a9a9f6"/><rect x="74" y="101.6" width="1" height="71.4" fill="#a9a9f6"/><rect x="75" y="102.6" width="1" height="70.4" fill="#a9a9f6"/><rect x="76" y="101.9" width="1" height="71.1" fill="#a9a9f6"/><rect x="77" y="101.3" width="1" height="71.7" fill="#a9a9f6"/><rect x="78" y="104.7" width="1" height="68.3" fill="#a9a9f6"/><rect x="79" y="104.9" width="1" height="68.1" fill="#a9a9f6"/><rect x="80" y="104.4" width="1" height="68.6" fill="#a9a9f6"/><rect x="81" y="104.0" width="1" height="69.0" fill="#a9a9f6"/><rect x="82" y="102.4" width="1" height="70.6" fill="#a9a9f6"/><rect x="83" y="102.3" width="1" height="70.7" fill="#a9a9f6"/><rect x="84" y="102.9" width="1" height="70.1" fill="#a9a9f6"/><rect x="85" y="102.1" width="1" height="70.9" fill="#a9a9f6"/><rect x="86" y="105.6" width="1" height="67.4" fill="#a9a9f6"/><rect x="87" y="104.2" width="1" height="68.8" fill="#a9a9f6"/><rect x="88" y="106.5" width="1" height="66.5" fill="#a9a9f6"/><rect x="89" y="104.7" width="1" height="68.3" fill="#a9a9f6"/><rect x="90" y="107.5" width="1" height="65.5" fill="#a9a9f6"/><rect x="91" y="107.3" width="1" height="65.7" fill="#a9a9f6"/><rect x="92" y="103.8" width="1" height="69.2" fill="#a9a9f6"/><rect x="93" y="105.0" width="1" height="68.0" fill="#a9a9f6"/><rect x="94" y="108.4" width="1" height="64.6" fill="#a9a9f6"/><rect x="95" y="106.7" width="1" height="66.3" fill="#a9a9f6"/><rect x="96" y="109.3" width="1" height="63.7" fill="#a9a9f6"/><rect x="97" y="107.0" width="1" height="66.0" fill="#a9a9f6"/><rect x="98" y="105.8" width="1" height="67.2" fill="#a9a9f6"/><rect x="99" y="108.6" width="1" height="64.4" fill="#a9a9f6"/><rect x="100" y="109.5" width="1" height="63.5" fill="#a9a9f6"/><rect x="101" y="107.4" width="1" height="65.6" fill="#a9a9f6"/><rect x="102" y="106.8" width="1" height="66.2" fill="#a9a9f6"/><rect x="103" y="108.1" width="1" height="64.9" fill="#a9a9f6"/><rect x="104" y="111.1" width="1" height="61.9" fill="#a9a9f6"/><rect x="105" y="110.4" width="1" height="62.6" fill="#a9a9f6"/><rect x="106" y="107.7" width="1" height="65.3" fill="#a9a9f6"/><rect x="107" y="108.5" width="1" height="64.5" fill="#a9a9f6"/><rect x="108" y="108.1" width="1" height="64.9" fill="#a9a9f6"/><rect x="109" y="108.1" width="1" height="64.9" fill="#a9a9f6"/><rect x="110" y="111.6" width="1" height="61.4" fill="#a9a9f6"/><rect x="111" y="109.0" width="1" height="64.0" fill="#a9a9f6"/><rect x="112" y="110.9" width="1" height="62.1" fill="#a9a9f6"/><rect x="113" y="110.6" width="1" height="62.4" fill="#a9a9f6"/><rect x="114" y="109.7" width="1" height="63.3" fill="#a9a9f6"/><rect x="115" y="112.3" width="1" height="60.7" fill="#a9a9f6"/><rect x="116" y="109.8" width="1" height="63.2" fill="#a9a9f6"/><rect x="117" y="112.3" width="1" height="60.7" fill="#a9a9f6"/><rect x="118" y="110.1" width="1" height="62.9" fill="#a9a9f6"/><rect x="119" y="111.7" width="1" height="61.3" fill="#a9a9f6"/><rect x="120" y="111.0" width="1" height="62.0" fill="#a9a9f6"/><rect x="121" y="111.3" width="1" height="61.7" fill="#a9a9f6"/><rect x="122" y="114.6" width="1" height="58.4" fill="#a9a9f6"/><rect x="123" y="114.0" width="1" height="59.0" fill="#a9a9f6"/><rect x="124" y="111.8" width="1" height="61.2" fill="#a9a9f6"/><rect x="125" y="114.6" width="1" height="58.4" fill="#a9a9f6"/><rect x="126" y="111.7" width="1" height="61.3" fill="#a9a9f6"/><rect x="127" y="112.6" width="1" height="60.4" fill="#a9a9f6"/><rect x="128" y="114.8" width="1" height="58.2" fill="#a9a9f6"/><rect x="129" y="113.9" width="1" height="59.1" fill="#a9a9f6"/><rect x="130" y="111.6" width="1" height="61.4" fill="#a9a9f6"/><rect x="131" y="115.7" width="1" height="57.3" fill="#a9a9f6"/><rect x="132" y="112.4" width="1" height="60.6" fill="#a9a9f6"/><rect x="133" y="112.7" width="1" height="60.3" fill="#a9a9f6"/><rect x="134" y="115.1" width="1" height="57.9" fill="#a9a9f6"/><rect x="135" y="113.2" width="1" height="59.8" fill="#a9a9f6"/><rect x="136" y="113.2" width="1" height="59.8" fill="#a9a9f6"/><rect x="137" y="112.3" width="1" height="60.7" fill="#a9a9f6"/><rect x="138" y="112.1" width="1" height="60.9" fill="#a9a9f6"/><rect x="139" y="114.0" width="1" height="59.0" fill="#a9a9f6"/><rect x="140" y="112.2" width="1" height="60.8" fill="#a9a9f6"/><rect x="141" y="113.5" width="1" height="59.5" fill="#a9a9f6"/><rect x="142" y="112.1" width="1" height="60.9" fill="#a9a9f6"/><rect x="143" y="112.2" width="1" height="60.8" fill="#a9a9f6"/><rect x="144" y="114.2" width="1" height="58.8" fill="#a9a9f6"/><rect x="145" y="111.7" width="1" height="61.3" fill="#a9a9f6"/><rect x="146" y="111.8" width="1" height="61.2" fill="#a9a9f6"/><rect x="147" y="112.8" width="1" height="60.2" fill="#a9a9f6"/><rect x="148" y="109.4" width="1" height="63.6" fill="#a9a9f6"/><rect x="149" y="109.0" width="1" height="64.0" fill="#a9a9f6"/><rect x="150" y="112.1" width="1" height="60.9" fill="#a9a9f6"/><rect x="151" y="111.8" width="1" height="61.2" fill="#a9a9f6"/><rect x="152" y="109.4" width="1" height="63.6" fill="#a9a9f6"/><rect x="153" y="109.3" width="1" height="63.7" fill="#a9a9f6"/><rect x="154" y="111.9" width="1" height="61.1" fill="#a9a9f6"/><rect x="155" y="113.0" width="1" height="60.0" fill="#a9a9f6"/><rect x="156" y="109.8" width="1" height="63.2" fill="#a9a9f6"/><rect x="157" y="113.3" width="1" height="59.7" fill="#a9a9f6"/><rect x="158" y="113.2" width="1" height="59.8" fill="#a9a9f6"/><rect x="159" y="112.1" width="1" height="60.9" fill="#a9a9f6"/><rect x="160" y="111.4" width="1" height="61.6" fill="#a9a9f6"/><rect x="161" y="110.1" width="1" height="62.9" fill="#a9a9f6"/><rect x="162" y="110.0" width="1" height="63.0" fill="#a9a9f6"/><rect x="163" y="114.3" width="1" height="58.7" fill="#a9a9f6"/><rect x="164" y="111.2" width="1" height="61.8" fill="#a9a9f6"/><rect x="165" y="113.4" width="1" height="59.6" fill="#a9a9f6"/><rect x="166" y="111.6" width="1" height="61.4" fill="#a9a9f6"/><rect x="167" y="114.3" width="1" height="58.7" fill="#a9a9f6"/><rect x="168" y="113.4" width="1" height="59.6" fill="#a9a9f6"/><rect x="169" y="112.2" width="1" height="60.8" fill="#a9a9f6"/><rect x="170" y="111.8" width="1" height="61.2" fill="#a9a9f6"/><rect x="171" y="114.4" width="1" height="58.6" fill="#a9a9f6"/><rect x="172" y="111.6" width="1" height="61.4" fill="#a9a9f6"/><rect x="173" y="112.4" width="1" height="60.6" fill="#a9a9f6"/><rect x="174" y="114.1" width="1" height="58.9" fill="#a9a9f6"/><rect x="175" y="115.5" width="1" height="57.5" fill="#a9a9f6"/><rect x="176" y="114.6" width="1" height="58.4" fill="#a9a9f6"/><rect x="177" y="113.2" width="1" height="59.8" fill="#a9a9f6"/><rect x="178" y="116.2" width="1" height="56.8" fill="#a9a9f6"/><rect x="179" y="113.1" width="1" height="59.9" fill="#a9a9f6"/><rect x="180" y="112.4" width="1" height="60.6" fill="#a9a9f6"/><rect x="181" y="113.7" width="1" height="59.3" fill="#a9a9f6"/><rect x="182" y="114.6" width="1" height="58.4" fill="#a9a9f6"/><rect x="183" y="113.0" width="1" height="60.0" fill="#a9a9f6"/><rect x="184" y="113.7" width="1" height="59.3" fill="#a9a9f6"/><rect x="185" y="114.7" width="1" height="58.3" fill="#a9a9f6"/><rect x="186" y="115.8" width="1" height="57.2" fill="#a9a9f6"/><rect x="187" y="114.1" width="1" height="58.9" fill="#a9a9f6"/><rect x="188" y="115.3" width="1" height="57.7" fill="#a9a9f6"/><rect x="189" y="118.0" width="1" height="55.0" fill="#a9a9f6"/><rect x="190" y="118.6" width="1" height="54.4" fill="#a9a9f6"/><rect x="191" y="117.4" width="1" height="55.6" fill="#a9a9f6"/><rect x="192" y="117.8" width="1" height="55.2" fill="#a9a9f6"/><rect x="193" y="117.5" width="1" height="55.5" fill="#a9a9f6"/><rect x="194" y="115.7" width="1" height="57.3" fill="#a9a9f6"/><rect x="195" y="115.5" width="1" height="57.5" fill="#a9a9f6"/><rect x="196" y="115.7" width="1" height="57.3" fill="#a9a9f6"/><rect x="197" y="119.9" width="1" height="53.1" fill="#a9a9f6"/><rect x="198" y="119.2" width="1" height="53.8" fill="#a9a9f6"/><rect x="199" y="120.6" width="1" height="52.4" fill="#a9a9f6"/><rect x="200" y="116.6" width="1" height="56.4" fill="#a9a9f6"/><rect x="201" y="119.6" width="1" height="53.4" fill="#a9a9f6"/><rect x="202" y="119.2" width="1" height="53.8" fill="#a9a9f6"/><rect x="203" y="120.2" width="1" height="52.8" fill="#a9a9f6"/><rect x="204" y="118.2" width="1" height="54.8" fill="#a9a9f6"/><rect x="205" y="121.2" width="1" height="51.8" fill="#a9a9f6"/><rect x="206" y="116.9" width="1" height="56.1" fill="#a9a9f6"/><rect x="207" y="119.0" width="1" height="54.0" fill="#a9a9f6"/><rect x="208" y="119.7" width="1" height="53.3" fill="#a9a9f6"/><rect x="209" y="120.4" width="1" height="52.6" fill="#a9a9f6"/><rect x="210" y="119.5" width="1" height="53.5" fill="#a9a9f6"/><rect x="211" y="119.3" width="1" height="53.7" fill="#a9a9f6"/><rect x="212" y="119.6" width="1" height="53.4" fill="#a9a9f6"/><rect x="213" y="119.6" width="1" height="53.4" fill="#a9a9f6"/><rect x="214" y="116.6" width="1" height="56.4" fill="#a9a9f6"/><rect x="215" y="117.6" width="1" height="55.4" fill="#a9a9f6"/><rect x="216" y="118.1" width="1" height="54.9" fill="#a9a9f6"/><rect x="217" y="117.4" width="1" height="55.6" fill="#a9a9f6"/><rect x="218" y="114.9" width="1" height="58.1" fill="#a9a9f6"/><rect x="219" y="116.1" width="1" height="56.9" fill="#a9a9f6"/><rect x="220" y="115.9" width="1" height="57.1" fill="#a9a9f6"/><rect x="221" y="114.1" width="1" height="58.9" fill="#a9a9f6"/><rect x="222" y="113.8" width="1" height="59.2" fill="#a9a9f6"/><rect x="223" y="112.4" width="1" height="60.6" fill="#a9a9f6"/><rect x="224" y="113.0" width="1" height="60.0" fill="#a9a9f6"/><rect x="225" y="112.8" width="1" height="60.2" fill="#a9a9f6"/><rect x="226" y="110.2" width="1" height="62.8" fill="#a9a9f6"/><rect x="227" y="112.4" width="1" height="60.6" fill="#a9a9f6"/><rect x="228" y="113.7" width="1" height="59.3" fill="#a9a9f6"/><rect x="229" y="112.9" width="1" height="60.1" fill="#a9a9f6"/><rect x="230" y="111.9" width="1" height="61.1" fill="#a9a9f6"/><rect x="231" y="110.0" width="1" height="63.0" fill="#a9a9f6"/><rect x="232" y="111.3" width="1" height="61.7" fill="#a9a9f6"/><rect x="233" y="110.3" width="1" height="62.7" fill="#a9a9f6"/><rect x="234" y="109.3" width="1" height="63.7" fill="#a9a9f6"/><rect x="235" y="110.8" width="1" height="62.2" fill="#a9a9f6"/><rect x="43" y="108.7" width="0.8" height="64.3" fill="#7070f0" fill-opacity="0.85"/><rect x="48" y="106.2" width="0.8" height="66.8" fill="#7070f0" fill-opacity="0.85"/><rect x="53" y="105.0" width="0.8" height="68.0" fill="#7070f0" fill-opacity="0.85"/><rect x="55" y="104.9" width="0.8" height="68.1" fill="#7070f0" fill-opacity="0.85"/><rect x="61" y="102.0" width="0.8" height="71.0" fill="#7070f0" fill-opacity="0.85"/><rect x="66" y="102.1" width="0.8" height="70.9" fill="#7070f0" fill-opacity="0.85"/><rect x="70" y="100.6" width="0.8" height="72.4" fill="#7070f0" fill-opacity="0.85"/><rect x="72" y="101.5" width="0.8" height="71.5" fill="#7070f0" fill-opacity="0.85"/><rect x="75" y="103.3" width="0.8" height="69.7" fill="#7070f0" fill-opacity="0.85"/><rect x="78" y="103.3" width="0.8" height="69.7" fill="#7070f0" fill-opacity="0.85"/><rect x="81" y="104.4" width="0.8" height="68.6" fill="#7070f0" fill-opacity="0.85"/><rect x="85" y="104.8" width="0.8" height="68.2" fill="#7070f0" fill-opacity="0.85"/><rect x="88" y="105.0" width="0.8" height="68.0" fill="#7070f0" fill-opacity="0.85"/><rect x="94" y="106.3" width="0.8" height="66.7" fill="#7070f0" fill-opacity="0.85"/><rect x="100" y="108.7" width="0.8" height="64.3" fill="#7070f0" fill-opacity="0.85"/><rect x="103" y="111.1" width="0.8" height="61.9" fill="#7070f0" fill-opacity="0.85"/><rect x="107" y="109.3" width="0.8" height="63.7" fill="#7070f0" fill-opacity="0.85"/><rect x="110" y="109.8" width="0.8" height="63.2" fill="#7070f0" fill-opacity="0.85"/><rect x="113" y="111.6" width="0.8" height="61.4" fill="#7070f0" fill-opacity="0.85"/><rect x="115" y="112.8" width="0.8" height="60.2" fill="#7070f0" fill-opacity="0.85"/><rect x="118" y="113.9" width="0.8" height="59.1" fill="#7070f0" fill-opacity="0.85"/><rect x="120" y="112.8" width="0.8" height="60.2" fill="#7070f0" fill-opacity="0.85"/><rect x="123" y="115.1" width="0.8" height="57.9" fill="#7070f0" fill-opacity="0.85"/><rect x="127" y="113.4" width="0.8" height="59.6" fill="#7070f0" fill-opacity="0.85"/><rect x="132" y="114.4" width="0.8" height="58.6" fill="#7070f0" fill-opacity="0.85"/><rect x="135" y="115.6" width="0.8" height="57.4" fill="#7070f0" fill-opacity="0.85"/><rect x="140" y="113.9" width="0.8" height="59.1" fill="#7070f0" fill-opacity="0.85"/><rect x="142" y="114.8" width="0.8" height="58.2" fill="#7070f0" fill-opacity="0.85"/><rect x="145" y="114.0" width="0.8" height="59.0" fill="#7070f0" fill-opacity="0.85"/><rect x="147" y="112.6" width="0.8" height="60.4" fill="#7070f0" fill-opacity="0.85"/><rect x="150" y="111.3" width="0.8" height="61.7" fill="#7070f0" fill-opacity="0.85"/><rect x="153" y="112.0" width="0.8" height="61.0" fill="#7070f0" fill-opacity="0.85"/><rect x="158" y="110.3" width="0.8" height="62.7" fill="#7070f0" fill-opacity="0.85"/><rect x="161" y="112.3" width="0.8" height="60.7" fill="#7070f0" fill-opacity="0.85"/><rect x="164" y="111.2" width="0.8" height="61.8" fill="#7070f0" fill-opacity="0.85"/><rect x="167" y="112.5" width="0.8" height="60.5" fill="#7070f0" fill-opacity="0.85"/><rect x="170" y="115.2" width="0.8" height="57.8" fill="#7070f0" fill-opacity="0.85"/><rect x="176" y="113.3" width="0.8" height="59.7" fill="#7070f0" fill-opacity="0.85"/><rect x="178" y="115.6" width="0.8" height="57.4" fill="#7070f0" fill-opacity="0.85"/><rect x="184" y="116.4" width="0.8" height="56.6" fill="#7070f0" fill-opacity="0.85"/><rect x="187" y="118.3" width="0.8" height="54.7" fill="#7070f0" fill-opacity="0.85"/><rect x="193" y="116.7" width="0.8" height="56.3" fill="#7070f0" fill-opacity="0.85"/><rect x="197" y="117.8" width="0.8" height="55.2" fill="#7070f0" fill-opacity="0.85"/><rect x="203" y="117.9" width="0.8" height="55.1" fill="#7070f0" fill-opacity="0.85"/><rect x="207" y="119.6" width="0.8" height="53.4" fill="#7070f0" fill-opacity="0.85"/><rect x="209" y="118.0" width="0.8" height="55.0" fill="#7070f0" fill-opacity="0.85"/><rect x="212" y="120.1" width="0.8" height="52.9" fill="#7070f0" fill-opacity="0.85"/><rect x="217" y="117.3" width="0.8" height="55.7" fill="#7070f0" fill-opacity="0.85"/><rect x="222" y="114.0" width="0.8" height="59.0" fill="#7070f0" fill-opacity="0.85"/><rect x="225" y="112.7" width="0.8" height="60.3" fill="#7070f0" fill-opacity="0.85"/><rect x="231" y="112.9" width="0.8" height="60.1" fill="#7070f0" fill-opacity="0.85"/><rect x="233" y="110.3" width="0.8" height="62.7" fill="#7070f0" fill-opacity="0.85"/><rect x="123" y="100" width="0.8" height="73" fill="#ffffff" fill-opacity="0.85"/><rect x="174" y="100" width="0.8" height="73" fill="#ffffff" fill-opacity="0.85"/><rect x="194" y="100" width="0.8" height="73" fill="#ffffff" fill-opacity="0.85"/><rect x="42" y="52" width="1.2" height="121" fill="#8080f4"/><rect x="137" y="96" width="1" height="77" fill="#8a8af4"/><rect x="234" y="101" width="1" height="72" fill="#8a8af4"/><rect x="39" y="173" width="197" height="0.8" fill="#c8c8c8"/><rect x="42" y="173" width="0.8" height="3" fill="#b0b0b0"/><rect x="90" y="173" width="0.8" height="3" fill="#b0b0b0"/><rect x="138" y="173" width="0.8" height="3" fill="#b0b0b0"/><rect x="187" y="173" width="0.8" height="3" fill="#b0b0b0"/><rect x="235" y="173" width="0.8" height="3" fill="#b0b0b0"/><rect x="42" y="51.5" width="48" height="1" fill="#f04848"/><rect x="89.5" y="52" width="1" height="121" fill="#f07070"/><rect x="42.8" y="52" width="0.8" height="121" fill="#f07070"/><rect x="42" y="172.5" width="193" height="1" fill="#f06060"/></svg><div class="t" style="left:42px;transform:scaleY(1.35);top:182.60px;font-size:4.2px;line-height:4.2px;color:#222;">0.00</div><div class="t" style="left:235px;transform:translateX(-100%) scaleY(1.35);top:182.60px;font-size:4.2px;line-height:4.2px;color:#222;">180.71</div><div class="a" style="left:42px;top:186px;width:193px;height:3px;background:linear-gradient(90deg,#ff0000 0%,#ff00ff 16%,#5050ff 33%,#30e0ff 50%,#00ff00 66%,#ffff00 80%,#ff9900 90%,#ff0000 100%)"></div><div class="a" style="left:149px;top:202px;width:29px;height:8px;background:#e1e1e1;border:1.2px solid #3c8ddc;box-sizing:border-box"></div><div class="t" style="left:163.5px;transform:translateX(-50%) scaleY(1.35);top:204.90px;font-size:4.6px;line-height:4.6px;color:#111;">OK</div><div class="a" style="left:181px;top:202px;width:29px;height:8px;background:#e1e1e1;border:1px solid #adadad;box-sizing:border-box"></div><div class="t" style="left:195.5px;transform:translateX(-50%) scaleY(1.35);top:204.90px;font-size:4.6px;line-height:4.6px;color:#111;">Cancel</div><div class="a" style="left:213px;top:202px;width:28px;height:8px;background:#e1e1e1;border:1px solid #adadad;box-sizing:border-box"></div><div class="t" style="left:227.0px;transform:translateX(-50%) scaleY(1.35);top:204.90px;font-size:4.6px;line-height:4.6px;color:#111;">Apply</div><div class="a" style="left:244px;top:202px;width:29px;height:8px;background:#e1e1e1;border:1px solid #adadad;box-sizing:border-box"></div><div class="t" style="left:258.5px;transform:translateX(-50%) scaleY(1.35);top:204.90px;font-size:4.6px;line-height:4.6px;color:#111;">Help</div><div class="a" style="left:0px;top:0px;width:277px;height:212px;border:1px solid #78a4dc;box-sizing:border-box"></div></div><svg class="a" style="left:254px;top:284px" width="8" height="9"><path d="M2 8C1 6 0.5 4.5 1 4C1.5 3.5 2 4.5 2.5 5V1.5C2.5 0.8 3.5 0.8 3.5 1.5V4V1C3.5 0.3 4.5 0.3 4.5 1V4V1.5C4.5 0.8 5.5 0.8 5.5 1.5V4.2V2.5C5.5 1.8 6.5 1.8 6.5 2.5V5.5C6.5 7 6 8 5.5 8.5z" fill="none" stroke="#c8c8c8" stroke-width="0.7"/></svg><div class="a" style="left:600.5px;top:372px;width:151.5px;height:34px;background:#fff;border:1px solid #e0e0e0;box-sizing:border-box;box-shadow:0 0 2px rgba(0,0,0,0.15)"></div><svg class="a" style="left:606px;top:379px" width="26" height="20"><path d="M2 0H8V9H11.5L5 17L-1.5 9H2z" fill="#cfcfcf"/><g transform="translate(16 10.5)"><circle r="4.6" fill="none" stroke="#c4c4c4" stroke-width="2.6" stroke-dasharray="1.9 1.7"/><circle r="3.6" fill="none" stroke="#c8c8c8" stroke-width="1.6"/></g></svg><div class="t" style="left:632px;transform:scaleY(1.35);top:381.15px;font-size:4.7px;line-height:4.7px;color:#333;font-weight:bold;">Dell Command | Update</div><div class="t" style="left:632px;transform:scaleY(1.35);top:388.65px;font-size:4.7px;line-height:4.7px;color:#707070;">13 Dell update(s) are available for your system.</div><div class="t" style="left:632px;transform:scaleY(1.35);top:395.15px;font-size:4.7px;line-height:4.7px;color:#707070;">Click here for details.</div><svg class="a" style="left:743px;top:375px" width="5" height="5"><path d="M0.5 0.5L4.5 4.5M4.5 0.5L0.5 4.5" stroke="#555" stroke-width="0.8"/></svg></div>
</body></html>
